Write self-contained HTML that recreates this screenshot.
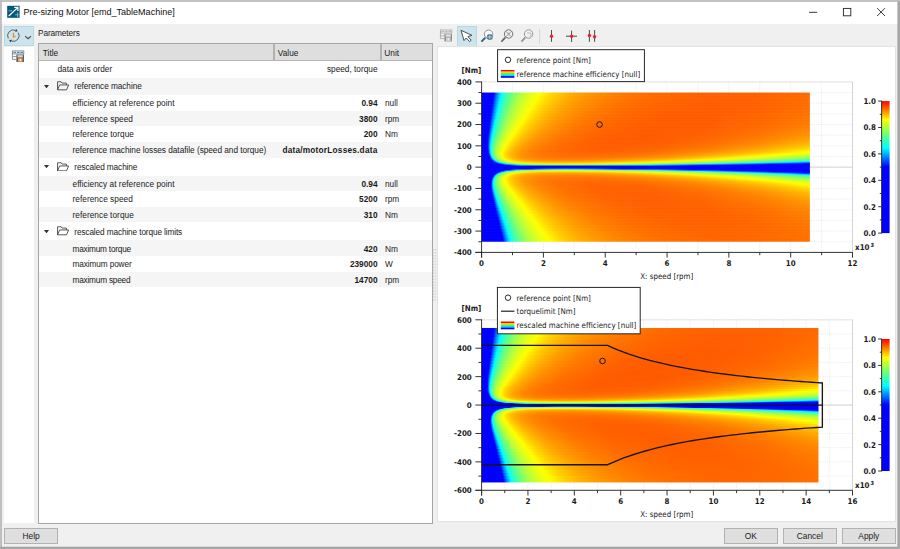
<!DOCTYPE html>
<html lang="en"><head><meta charset="utf-8"><title>Pre-sizing Motor [emd_TableMachine]</title>
<style>
html,body{margin:0;padding:0}
body{width:900px;height:549px;overflow:hidden;background:#f0f0f0;font-family:"Liberation Sans",Arial,sans-serif;color:#1a1a1a}
#win{position:absolute;left:0;top:0;width:900px;height:549px;overflow:hidden;background:#f0f0f0}
.abs{position:absolute}
#titlebar{left:0;top:0;width:900px;height:24px;background:#fff}
#ttl{left:23.5px;top:7px;font-size:9.05px;line-height:11px;white-space:nowrap;color:#111;letter-spacing:-0.02px}
#lbtn{left:4px;top:26px;width:28px;height:18.2px;background:#cce4ec;border:1px solid #b4d9e4;box-sizing:content-box}
#lpanel{left:4px;top:47px;width:30px;height:476.2px;background:#fff}
#plabel{left:38px;top:29px;letter-spacing:-0.1px;font-size:8.27px;line-height:10px;white-space:nowrap}
#tbl{left:38px;top:43.2px;width:393px;height:478.4px;border:1px solid #a6a6a6;background:#fff;overflow:hidden}
#thead{left:0;top:0;width:393px;height:16px;background:#dedede;border-bottom:1px solid #b4b4b4}
#thead span{position:absolute;top:3.4px;font-size:8.3px;line-height:10px}
#thead i{position:absolute;top:0;width:1.3px;height:16px;background:#b2b2b2}
.row{position:absolute;left:0;width:393px;font-size:8.27px;line-height:10px;white-space:nowrap}
.row span{position:absolute}
.row .v{right:54.5px;text-align:right}
.row .u{left:346px}
.tri{position:absolute;left:4.9px;top:calc(50% - 1.6px);width:5px;height:3.4px}
.fold{position:absolute;left:17.8px;top:calc(50% - 5px);width:12.2px;height:9.4px}
#rpanel{left:437.3px;top:46.4px;width:458.6px;height:476px;background:#fff;border:1px solid #e3e3e3;box-sizing:border-box}
#rbtn{left:457px;top:26px;width:18px;height:19.6px;background:#cce4ec;border:1px solid #b4d9e4;box-sizing:content-box}
.btn{position:absolute;top:528.2px;height:14.3px;width:52.3px;border:1px solid #b2b2b2;background:#dfdfdf;font-size:8.4px;line-height:14.6px;text-align:center}
#svg{left:0;top:0}
</style></head><body>
<div id="win">
<div id="titlebar" class="abs"></div>
<div id="ttl" class="abs">Pre-sizing Motor [emd_TableMachine]</div>
<div id="lbtn" class="abs"></div>
<div id="lpanel" class="abs"></div>
<div id="plabel" class="abs">Parameters</div>
<div id="tbl" class="abs">
<div id="thead" class="abs"><span style="left:3.8px">Title</span><i style="left:234.3px"></i><span style="left:238.8px">Value</span><i style="left:341.3px"></i><span style="left:345.3px">Unit</span></div>
<div class="row" style="top:16.60px;height:16.85px;background:#fff"><span class="t" style="top:4.00px;left:18.5px;letter-spacing:0.000px">data axis order</span><span class="v" style="top:4.00px">speed, torque</span></div><div class="row" style="top:33.40px;height:17.35px;background:#f5f5f5"><svg class="tri" viewBox="0 0 6 4"><path d="M0 0H6L3 4z" fill="#303030"/></svg><svg class="fold" viewBox="0 0 13 10"><path d="M0.6 9.4V0.8H4.4L5.4 2.2H10V4.2 M0.6 9.4L2.8 4.2H12.4L10.2 9.4z" fill="none" stroke="#3a3a3a" stroke-width="0.9" stroke-linejoin="round"/></svg><span class="t" style="top:4.20px;left:35.3px;letter-spacing:-0.060px">reference machine</span></div><div class="row" style="top:50.70px;height:15.75px;background:#fff"><span class="t" style="top:3.90px;left:33.5px;letter-spacing:0.040px">efficiency at reference point</span><span class="v" style="top:3.90px;font-weight:bold">0.94</span><span class="u" style="top:3.90px">null</span></div><div class="row" style="top:66.40px;height:15.85px;background:#f5f5f5"><span class="t" style="top:4.20px;left:33.5px;letter-spacing:0.050px">reference speed</span><span class="v" style="top:4.20px;font-weight:bold">3800</span><span class="u" style="top:4.20px">rpm</span></div><div class="row" style="top:82.20px;height:15.55px;background:#fff"><span class="t" style="top:3.40px;left:33.5px;letter-spacing:0.050px">reference torque</span><span class="v" style="top:3.40px;font-weight:bold">200</span><span class="u" style="top:3.40px">Nm</span></div><div class="row" style="top:97.70px;height:15.75px;background:#f5f5f5"><span class="t" style="top:3.90px;left:33.5px;letter-spacing:-0.030px">reference machine losses datafile (speed and torque)</span><span class="v" style="top:3.90px;font-weight:bold;letter-spacing:0.22px">data/motorLosses.data</span></div><div class="row" style="top:113.40px;height:18.35px;background:#fff"><svg class="tri" viewBox="0 0 6 4"><path d="M0 0H6L3 4z" fill="#303030"/></svg><svg class="fold" viewBox="0 0 13 10"><path d="M0.6 9.4V0.8H4.4L5.4 2.2H10V4.2 M0.6 9.4L2.8 4.2H12.4L10.2 9.4z" fill="none" stroke="#3a3a3a" stroke-width="0.9" stroke-linejoin="round"/></svg><span class="t" style="top:5.20px;left:35.3px;letter-spacing:-0.110px">rescaled machine</span></div><div class="row" style="top:131.70px;height:15.35px;background:#f5f5f5"><span class="t" style="top:3.90px;left:33.5px;letter-spacing:0.040px">efficiency at reference point</span><span class="v" style="top:3.90px;font-weight:bold">0.94</span><span class="u" style="top:3.90px">null</span></div><div class="row" style="top:147.00px;height:15.55px;background:#fff"><span class="t" style="top:3.60px;left:33.5px;letter-spacing:0.040px">reference speed</span><span class="v" style="top:3.60px;font-weight:bold">5200</span><span class="u" style="top:3.60px">rpm</span></div><div class="row" style="top:162.50px;height:15.85px;background:#f5f5f5"><span class="t" style="top:4.10px;left:33.5px;letter-spacing:0.040px">reference torque</span><span class="v" style="top:4.10px;font-weight:bold">310</span><span class="u" style="top:4.10px">Nm</span></div><div class="row" style="top:178.30px;height:17.95px;background:#fff"><svg class="tri" viewBox="0 0 6 4"><path d="M0 0H6L3 4z" fill="#303030"/></svg><svg class="fold" viewBox="0 0 13 10"><path d="M0.6 9.4V0.8H4.4L5.4 2.2H10V4.2 M0.6 9.4L2.8 4.2H12.4L10.2 9.4z" fill="none" stroke="#3a3a3a" stroke-width="0.9" stroke-linejoin="round"/></svg><span class="t" style="top:5.30px;left:35.3px;letter-spacing:-0.127px">rescaled machine torque limits</span></div><div class="row" style="top:196.20px;height:15.55px;background:#f5f5f5"><span class="t" style="top:4.40px;left:33.5px;letter-spacing:-0.220px">maximum torque</span><span class="v" style="top:4.40px;font-weight:bold">420</span><span class="u" style="top:4.40px">Nm</span></div><div class="row" style="top:211.70px;height:15.75px;background:#fff"><span class="t" style="top:3.90px;left:33.5px;letter-spacing:-0.120px">maximum power</span><span class="v" style="top:3.90px;font-weight:bold">239000</span><span class="u" style="top:3.90px">W</span></div><div class="row" style="top:227.40px;height:15.85px;background:#f5f5f5"><span class="t" style="top:4.20px;left:33.5px;letter-spacing:-0.215px">maximum speed</span><span class="v" style="top:4.20px;font-weight:bold">14700</span><span class="u" style="top:4.20px">rpm</span></div>
</div>
<div id="rbtn" class="abs"></div>
<div id="rpanel" class="abs"></div>
<div class="btn" style="left:4px">Help</div>
<div class="btn" style="left:723.7px">OK</div>
<div class="btn" style="left:782.6px">Cancel</div>
<div class="btn" style="left:841.7px">Apply</div>
<svg id="svg" class="abs" width="900" height="549" viewBox="0 0 900 549">
<!-- window frame -->
<rect x="0" y="0" width="900" height="1.15" fill="#c2c2c2"/><rect x="1" y="1.1" width="898" height="0.55" fill="#9c9c9c"/>
<rect x="0" y="0" width="1.15" height="549" fill="#c0c0c0"/><rect x="1.1" y="1.1" width="0.55" height="546" fill="#989898"/>
<rect x="897.8" y="1" width="2.2" height="548" fill="#aaaaaa"/><rect x="897.6" y="1.4" width="0.5" height="546" fill="#8e8e8e"/>
<rect x="0" y="547" width="900" height="2" fill="#aaaaaa"/><rect x="1.2" y="546.8" width="896.8" height="0.5" fill="#8e8e8e"/>
<path d="M433.7 249V300.8M435.5 249V300.8" stroke="#d4d4d4" stroke-width="1.2" stroke-dasharray="1.5 1.45" fill="none"/>
<!-- app icon -->
<rect x="7.2" y="5.8" width="12.4" height="12" fill="#00587c"/>
<path d="M8.8 16L17.6 7.6M14.2 7.3H17.9V11" stroke="#fff" stroke-width="1.3" fill="none"/>
<path d="M8.6 10.8H12M15 14.8H18.8M17.6 12.4V17" stroke="#9cc3d2" stroke-width="0.8" fill="none"/>
<!-- window controls -->
<path d="M809 12.3H817.2" stroke="#222" stroke-width="0.9"/>
<rect x="843.4" y="8.4" width="7.4" height="7.4" fill="none" stroke="#222" stroke-width="0.9"/>
<path d="M877.2 8.2L885 16M885 8.2L877.2 16" stroke="#222" stroke-width="0.9"/>
<!-- left toolbar icons -->
<g fill="none" stroke="#4a4a4a" stroke-width="0.85">
<path d="M8.3 38.4A5.8 5.8 0 0 1 15.6 30.3"/><path d="M18.4 32.7A5.8 5.8 0 0 1 11.3 41"/>
</g>
<path d="M25.2 36.2L28.1 38.7L30.9 36.2" fill="none" stroke="#505050" stroke-width="1.15"/>
<path d="M17.6 31.4L16.4 28.9L14.8 31.5z M9.2 39.9L10.4 42.4L12 39.8z" fill="#3a3a3a"/>
<path d="M13.4 32.8V37L15.6 35.9" stroke="#f08a1c" stroke-width="1.15" fill="none"/>
<g><rect x="12.4" y="50.9" width="11.4" height="3" fill="#fff" stroke="#7a7a7a" stroke-width="0.8"/><path d="M13.4 52.4H16.2M17 52.4H19.6M20.4 52.4H23" stroke="#3f8fc0" stroke-width="1.1"/><path d="M12.4 54V59.4M12.4 56.6H16.4M12.4 59.4H16.4" stroke="#7a7a7a" stroke-width="0.8" fill="none"/><rect x="16.4" y="54.6" width="7.6" height="7.4" fill="#5c5c5c"/><rect x="17.6" y="55.2" width="5.2" height="2.2" fill="#d6d6d6"/><rect x="18" y="58.2" width="4.6" height="3.6" fill="#f0a050"/><rect x="19.8" y="59" width="1" height="2" fill="#fff"/></g>
<!-- right toolbar icons -->
<g><rect x="440.4" y="30" width="11.4" height="3" fill="#f6f6f6" stroke="#a2a2a2" stroke-width="0.8"/><path d="M441.4 31.5H444.2M445 31.5H447.6M448.4 31.5H451" stroke="#b4b4b4" stroke-width="1.1"/><path d="M440.4 33V38.6M440.4 35.8H444.4M440.4 38.6H444.4" stroke="#a2a2a2" stroke-width="0.8" fill="none"/><rect x="444.4" y="33.8" width="7.6" height="7.6" fill="#909090"/><rect x="445.6" y="34.4" width="5.2" height="2.2" fill="#e6e6e6"/><rect x="446" y="37.4" width="4.6" height="3.8" fill="#cfcfcf"/><rect x="447.8" y="38.2" width="1" height="2" fill="#f4f4f4"/></g>
<path d="M461 30.3L472 35.4L467.9 36.6L471.2 40.2L469.6 41.6L466.2 38L464 40.6z" fill="#fff" stroke="#333" stroke-width="0.85" stroke-linejoin="round"/>
<g fill="none">
<circle cx="488.6" cy="34.2" r="4.2" stroke="#888" stroke-width="0.9" fill="#fafafa"/><path d="M485.4 37.6L481.4 41.6" stroke="#2f5f78" stroke-width="1.8"/><circle cx="489.8" cy="37" r="3" fill="#4f7f98"/><path d="M487.4 37H492.2M489.8 34.6V39.4" stroke="#d8e6ec" stroke-width="0.7"/>
<circle cx="508.6" cy="34" r="4.2" stroke="#666" stroke-width="0.9"/><path d="M505.4 37.4L501.4 41.6" stroke="#666" stroke-width="1.7"/><path d="M506 31.4L511.2 36.6M511.2 31.4L506 36.6" stroke="#666" stroke-width="0.7"/>
<circle cx="528.6" cy="34" r="4.2" stroke="#909090" stroke-width="0.9"/><path d="M525.4 37.4L521.4 41.6" stroke="#909090" stroke-width="1.7"/><path d="M527 33H529.6A1.6 1.6 0 0 1 529.6 36.2" stroke="#a0a0a0" stroke-width="0.7"/>
</g>
<path d="M539.6 29V43.6" stroke="#d4d4d4" stroke-width="1"/>
<g stroke="#3a3a3a" stroke-width="0.9" fill="none"><path d="M551.5 30V41.8M571.6 30.6V42M566 36.2H577M589.4 30V41.8M594.6 30V41.8"/></g>
<g fill="#e8232a"><circle cx="551.5" cy="36.3" r="1.7"/><circle cx="571.6" cy="36.3" r="1.7"/><circle cx="589.4" cy="35.5" r="1.7"/><circle cx="594.6" cy="36.8" r="1.7"/></g>
<path d="M512.51 81.90V252.40M543.42 81.90V252.40M574.33 81.90V252.40M605.23 81.90V252.40M636.14 81.90V252.40M667.05 81.90V252.40M697.96 81.90V252.40M728.87 81.90V252.40M759.77 81.90V252.40M790.68 81.90V252.40M821.59 81.90V252.40M852.50 81.90V252.40M481.60 252.40H852.50M481.60 241.74H852.50M481.60 231.09H852.50M481.60 220.43H852.50M481.60 209.78H852.50M481.60 199.12H852.50M481.60 188.46H852.50M481.60 177.81H852.50M481.60 167.15H852.50M481.60 156.49H852.50M481.60 145.84H852.50M481.60 135.18H852.50M481.60 124.53H852.50M481.60 113.87H852.50M481.60 103.21H852.50M481.60 92.56H852.50M481.60 81.90H852.50" stroke="#e5e5e5" stroke-width="0.8" stroke-dasharray="1 1.2" fill="none"/><path d="M852.50 81.90V252.40 M481.60 167.15H852.50" stroke="#d0d0d0" stroke-width="0.9" fill="none"/><path d="M481.60 81.90H852.50" stroke="#e0e0e0" stroke-width="0.8" fill="none"/><defs><linearGradient id="a0"><stop offset="0" stop-color="#0000ff"/><stop offset="0.03656" stop-color="#0000ff"/><stop offset="0.03808" stop-color="#0010ff"/><stop offset="0.04417" stop-color="#0060ff"/><stop offset="0.05027" stop-color="#00a3ff"/><stop offset="0.05636" stop-color="#00ddff"/><stop offset="0.06093" stop-color="#02fffc"/><stop offset="0.06855" stop-color="#23ffd4"/><stop offset="0.08226" stop-color="#52ff9a"/><stop offset="0.09139" stop-color="#6bff7b"/><stop offset="0.1036" stop-color="#8dff5e"/><stop offset="0.1188" stop-color="#b0ff42"/><stop offset="0.1371" stop-color="#d0ff27"/><stop offset="0.1584" stop-color="#edff0f"/><stop offset="0.1767" stop-color="#fffe00"/><stop offset="0.2163" stop-color="#ffd300"/><stop offset="0.2681" stop-color="#ffaf00"/><stop offset="0.3168" stop-color="#ff9800"/><stop offset="0.3717" stop-color="#ff8600"/><stop offset="0.4387" stop-color="#ff7700"/><stop offset="0.524" stop-color="#ff6b00"/><stop offset="0.6824" stop-color="#ff6100"/><stop offset="0.8286" stop-color="#ff6100"/><stop offset="1" stop-color="#ff6a00"/></linearGradient><linearGradient id="a1"><stop offset="0" stop-color="#0000ff"/><stop offset="0.03503" stop-color="#0000ff"/><stop offset="0.03656" stop-color="#000cff"/><stop offset="0.04417" stop-color="#0071ff"/><stop offset="0.05027" stop-color="#00b4ff"/><stop offset="0.05788" stop-color="#00faff"/><stop offset="0.05941" stop-color="#04fffa"/><stop offset="0.07312" stop-color="#3dffb4"/><stop offset="0.08226" stop-color="#5aff90"/><stop offset="0.09749" stop-color="#86ff64"/><stop offset="0.1127" stop-color="#abff46"/><stop offset="0.1249" stop-color="#c3ff32"/><stop offset="0.1493" stop-color="#e7ff13"/><stop offset="0.1706" stop-color="#ffff00"/><stop offset="0.1858" stop-color="#ffeb00"/><stop offset="0.2163" stop-color="#ffcd00"/><stop offset="0.2681" stop-color="#ffaa00"/><stop offset="0.3168" stop-color="#ff9400"/><stop offset="0.4204" stop-color="#ff7800"/><stop offset="0.5362" stop-color="#ff6800"/><stop offset="0.6824" stop-color="#ff6000"/><stop offset="0.8286" stop-color="#ff6100"/><stop offset="1" stop-color="#ff6b00"/></linearGradient><linearGradient id="a2"><stop offset="0" stop-color="#0000ff"/><stop offset="0.03351" stop-color="#0000ff"/><stop offset="0.03503" stop-color="#0007ff"/><stop offset="0.04113" stop-color="#005dff"/><stop offset="0.05027" stop-color="#00c5ff"/><stop offset="0.05636" stop-color="#00fdff"/><stop offset="0.05788" stop-color="#07fff7"/><stop offset="0.06702" stop-color="#2fffc5"/><stop offset="0.07464" stop-color="#4bffa3"/><stop offset="0.08226" stop-color="#62ff86"/><stop offset="0.09139" stop-color="#7dff6b"/><stop offset="0.1066" stop-color="#a6ff4a"/><stop offset="0.1219" stop-color="#c5ff30"/><stop offset="0.1401" stop-color="#e2ff18"/><stop offset="0.1645" stop-color="#ffff00"/><stop offset="0.2072" stop-color="#ffcf00"/><stop offset="0.2559" stop-color="#ffac00"/><stop offset="0.3229" stop-color="#ff8e00"/><stop offset="0.396" stop-color="#ff7a00"/><stop offset="0.4996" stop-color="#ff6a00"/><stop offset="0.6459" stop-color="#ff6000"/><stop offset="0.8043" stop-color="#ff6000"/><stop offset="1" stop-color="#ff6c00"/></linearGradient><linearGradient id="a3"><stop offset="0" stop-color="#0000ff"/><stop offset="0.03351" stop-color="#0002ff"/><stop offset="0.03808" stop-color="#0047ff"/><stop offset="0.04265" stop-color="#0083ff"/><stop offset="0.05027" stop-color="#00d7ff"/><stop offset="0.05484" stop-color="#01fffd"/><stop offset="0.06245" stop-color="#26ffd1"/><stop offset="0.07159" stop-color="#49ffa5"/><stop offset="0.08226" stop-color="#6aff7c"/><stop offset="0.09139" stop-color="#87ff63"/><stop offset="0.1097" stop-color="#b5ff3d"/><stop offset="0.1249" stop-color="#d2ff26"/><stop offset="0.1432" stop-color="#edff0f"/><stop offset="0.1584" stop-color="#feff00"/><stop offset="0.1615" stop-color="#fffb00"/><stop offset="0.2011" stop-color="#ffce00"/><stop offset="0.2559" stop-color="#ffa700"/><stop offset="0.2986" stop-color="#ff9300"/><stop offset="0.4021" stop-color="#ff7600"/><stop offset="0.4996" stop-color="#ff6800"/><stop offset="0.6459" stop-color="#ff5f00"/><stop offset="0.8043" stop-color="#ff6000"/><stop offset="1" stop-color="#ff6d00"/></linearGradient><linearGradient id="a4"><stop offset="0" stop-color="#0000ff"/><stop offset="0.03199" stop-color="#0000ff"/><stop offset="0.03656" stop-color="#0045ff"/><stop offset="0.04265" stop-color="#0096ff"/><stop offset="0.04874" stop-color="#00daff"/><stop offset="0.05179" stop-color="#00f7ff"/><stop offset="0.05331" stop-color="#04fffa"/><stop offset="0.05941" stop-color="#22ffd5"/><stop offset="0.07007" stop-color="#4dffa0"/><stop offset="0.07921" stop-color="#6aff7c"/><stop offset="0.08682" stop-color="#83ff66"/><stop offset="0.1005" stop-color="#a9ff47"/><stop offset="0.1188" stop-color="#cfff28"/><stop offset="0.131" stop-color="#e3ff17"/><stop offset="0.1554" stop-color="#fffc00"/><stop offset="0.1706" stop-color="#ffe700"/><stop offset="0.198" stop-color="#ffca00"/><stop offset="0.2437" stop-color="#ffa900"/><stop offset="0.2986" stop-color="#ff8f00"/><stop offset="0.3839" stop-color="#ff7700"/><stop offset="0.4996" stop-color="#ff6600"/><stop offset="0.6459" stop-color="#ff5e00"/><stop offset="0.8286" stop-color="#ff6100"/><stop offset="1" stop-color="#ff6e00"/></linearGradient><linearGradient id="a5"><stop offset="0" stop-color="#0000ff"/><stop offset="0.03046" stop-color="#0000ff"/><stop offset="0.03199" stop-color="#0011ff"/><stop offset="0.03808" stop-color="#006fff"/><stop offset="0.04265" stop-color="#00aaff"/><stop offset="0.05027" stop-color="#00fcff"/><stop offset="0.05179" stop-color="#07fff7"/><stop offset="0.05941" stop-color="#2dffc8"/><stop offset="0.07159" stop-color="#5cff8e"/><stop offset="0.07769" stop-color="#6fff77"/><stop offset="0.08987" stop-color="#97ff56"/><stop offset="0.1158" stop-color="#d2ff26"/><stop offset="0.1371" stop-color="#f2ff0a"/><stop offset="0.1493" stop-color="#fffc00"/><stop offset="0.1676" stop-color="#ffe300"/><stop offset="0.195" stop-color="#ffc600"/><stop offset="0.2376" stop-color="#ffa700"/><stop offset="0.2925" stop-color="#ff8d00"/><stop offset="0.3839" stop-color="#ff7400"/><stop offset="0.4813" stop-color="#ff6600"/><stop offset="0.6702" stop-color="#ff5d00"/><stop offset="0.8408" stop-color="#ff6200"/><stop offset="1" stop-color="#ff7000"/></linearGradient><linearGradient id="a6"><stop offset="0" stop-color="#0000ff"/><stop offset="0.02894" stop-color="#0000ff"/><stop offset="0.03046" stop-color="#000dff"/><stop offset="0.03656" stop-color="#006fff"/><stop offset="0.04113" stop-color="#00acff"/><stop offset="0.0457" stop-color="#00e1ff"/><stop offset="0.04874" stop-color="#01fffe"/><stop offset="0.05484" stop-color="#22ffd5"/><stop offset="0.06245" stop-color="#44ffab"/><stop offset="0.06855" stop-color="#5bff8f"/><stop offset="0.07921" stop-color="#80ff69"/><stop offset="0.08835" stop-color="#9dff51"/><stop offset="0.1066" stop-color="#c9ff2d"/><stop offset="0.1249" stop-color="#e9ff12"/><stop offset="0.1432" stop-color="#fffc00"/><stop offset="0.1615" stop-color="#ffe200"/><stop offset="0.1919" stop-color="#ffc200"/><stop offset="0.2498" stop-color="#ff9b00"/><stop offset="0.3168" stop-color="#ff8100"/><stop offset="0.4204" stop-color="#ff6b00"/><stop offset="0.5727" stop-color="#ff5e00"/><stop offset="0.7068" stop-color="#ff5d00"/><stop offset="0.8165" stop-color="#ff6100"/><stop offset="1" stop-color="#ff7200"/></linearGradient><linearGradient id="a7"><stop offset="0" stop-color="#0000ff"/><stop offset="0.02742" stop-color="#0000ff"/><stop offset="0.02894" stop-color="#0007ff"/><stop offset="0.03351" stop-color="#0057ff"/><stop offset="0.03808" stop-color="#009aff"/><stop offset="0.04113" stop-color="#00c2ff"/><stop offset="0.0457" stop-color="#00f6ff"/><stop offset="0.04722" stop-color="#04fffa"/><stop offset="0.05331" stop-color="#26ffd0"/><stop offset="0.06245" stop-color="#4fff9e"/><stop offset="0.07007" stop-color="#6aff7c"/><stop offset="0.08073" stop-color="#91ff5b"/><stop offset="0.09444" stop-color="#b7ff3b"/><stop offset="0.1097" stop-color="#d8ff21"/><stop offset="0.1249" stop-color="#f1ff0c"/><stop offset="0.1371" stop-color="#fffd00"/><stop offset="0.1645" stop-color="#ffd600"/><stop offset="0.1828" stop-color="#ffc300"/><stop offset="0.2072" stop-color="#ffaf00"/><stop offset="0.2437" stop-color="#ff9900"/><stop offset="0.329" stop-color="#ff7a00"/><stop offset="0.4326" stop-color="#ff6700"/><stop offset="0.5727" stop-color="#ff5d00"/><stop offset="0.719" stop-color="#ff5d00"/><stop offset="1" stop-color="#ff7400"/></linearGradient><linearGradient id="a8"><stop offset="0" stop-color="#0000ff"/><stop offset="0.02742" stop-color="#0001ff"/><stop offset="0.03199" stop-color="#0055ff"/><stop offset="0.03656" stop-color="#009cff"/><stop offset="0.04417" stop-color="#00fbff"/><stop offset="0.0457" stop-color="#08fff6"/><stop offset="0.05179" stop-color="#2affcb"/><stop offset="0.06093" stop-color="#54ff98"/><stop offset="0.06855" stop-color="#70ff76"/><stop offset="0.07616" stop-color="#8dff5e"/><stop offset="0.0853" stop-color="#aaff47"/><stop offset="0.1005" stop-color="#cfff28"/><stop offset="0.1188" stop-color="#f0ff0d"/><stop offset="0.131" stop-color="#fffd00"/><stop offset="0.1645" stop-color="#ffce00"/><stop offset="0.1919" stop-color="#ffb400"/><stop offset="0.2315" stop-color="#ff9a00"/><stop offset="0.3107" stop-color="#ff7b00"/><stop offset="0.4143" stop-color="#ff6700"/><stop offset="0.5362" stop-color="#ff5d00"/><stop offset="0.6824" stop-color="#ff5c00"/><stop offset="0.8896" stop-color="#ff6900"/><stop offset="1" stop-color="#ff7700"/></linearGradient><linearGradient id="a9"><stop offset="0" stop-color="#0000ff"/><stop offset="0.0259" stop-color="#0000ff"/><stop offset="0.03351" stop-color="#0087ff"/><stop offset="0.03808" stop-color="#00c9ff"/><stop offset="0.04265" stop-color="#01fffd"/><stop offset="0.04874" stop-color="#27ffcf"/><stop offset="0.05484" stop-color="#46ffa9"/><stop offset="0.06398" stop-color="#6bff7c"/><stop offset="0.07159" stop-color="#89ff61"/><stop offset="0.08226" stop-color="#adff44"/><stop offset="0.09749" stop-color="#d3ff25"/><stop offset="0.1158" stop-color="#f4ff09"/><stop offset="0.1249" stop-color="#fffd00"/><stop offset="0.1401" stop-color="#ffe400"/><stop offset="0.1615" stop-color="#ffc900"/><stop offset="0.1919" stop-color="#ffad00"/><stop offset="0.2193" stop-color="#ff9b00"/><stop offset="0.3046" stop-color="#ff7900"/><stop offset="0.396" stop-color="#ff6700"/><stop offset="0.5362" stop-color="#ff5c00"/><stop offset="0.6824" stop-color="#ff5c00"/><stop offset="0.853" stop-color="#ff6700"/><stop offset="1" stop-color="#ff7a00"/></linearGradient><linearGradient id="a10"><stop offset="0" stop-color="#0000ff"/><stop offset="0.02437" stop-color="#0000ff"/><stop offset="0.0259" stop-color="#0014ff"/><stop offset="0.02894" stop-color="#0052ff"/><stop offset="0.03351" stop-color="#00a0ff"/><stop offset="0.03808" stop-color="#00e2ff"/><stop offset="0.0396" stop-color="#00f5ff"/><stop offset="0.04113" stop-color="#05fff9"/><stop offset="0.04722" stop-color="#2cffc9"/><stop offset="0.05484" stop-color="#52ff9a"/><stop offset="0.06093" stop-color="#6bff7b"/><stop offset="0.07159" stop-color="#97ff56"/><stop offset="0.08226" stop-color="#b9ff3a"/><stop offset="0.09139" stop-color="#d0ff27"/><stop offset="0.1036" stop-color="#e9ff13"/><stop offset="0.1188" stop-color="#fffd00"/><stop offset="0.1371" stop-color="#ffde00"/><stop offset="0.1554" stop-color="#ffc700"/><stop offset="0.1767" stop-color="#ffb200"/><stop offset="0.2072" stop-color="#ff9c00"/><stop offset="0.2803" stop-color="#ff7c00"/><stop offset="0.3778" stop-color="#ff6700"/><stop offset="0.4813" stop-color="#ff5d00"/><stop offset="0.6459" stop-color="#ff5b00"/><stop offset="0.853" stop-color="#ff6900"/><stop offset="1" stop-color="#ff7d00"/></linearGradient><linearGradient id="a11"><stop offset="0" stop-color="#0000ff"/><stop offset="0.02285" stop-color="#0000ff"/><stop offset="0.02437" stop-color="#000dff"/><stop offset="0.02894" stop-color="#006dff"/><stop offset="0.03351" stop-color="#00bbff"/><stop offset="0.03808" stop-color="#00fcff"/><stop offset="0.0396" stop-color="#09fff3"/><stop offset="0.04417" stop-color="#28ffce"/><stop offset="0.05027" stop-color="#4affa4"/><stop offset="0.05788" stop-color="#6cff7a"/><stop offset="0.06245" stop-color="#81ff68"/><stop offset="0.07007" stop-color="#9fff4f"/><stop offset="0.0853" stop-color="#cdff2a"/><stop offset="0.1005" stop-color="#edff0f"/><stop offset="0.1127" stop-color="#fffc00"/><stop offset="0.134" stop-color="#ffd800"/><stop offset="0.1554" stop-color="#ffbe00"/><stop offset="0.1797" stop-color="#ffa800"/><stop offset="0.2102" stop-color="#ff9400"/><stop offset="0.2864" stop-color="#ff7600"/><stop offset="0.3595" stop-color="#ff6700"/><stop offset="0.4996" stop-color="#ff5b00"/><stop offset="0.6824" stop-color="#ff5d00"/><stop offset="0.8652" stop-color="#ff6d00"/><stop offset="1" stop-color="#ff8200"/></linearGradient><linearGradient id="a12"><stop offset="0" stop-color="#0000ff"/><stop offset="0.02285" stop-color="#0000ff"/><stop offset="0.02742" stop-color="#0066ff"/><stop offset="0.03199" stop-color="#00baff"/><stop offset="0.03656" stop-color="#00feff"/><stop offset="0.03808" stop-color="#0bfff1"/><stop offset="0.04265" stop-color="#2bffca"/><stop offset="0.04874" stop-color="#4eff9f"/><stop offset="0.05484" stop-color="#6aff7c"/><stop offset="0.06093" stop-color="#87ff63"/><stop offset="0.07007" stop-color="#abff46"/><stop offset="0.07769" stop-color="#c3ff32"/><stop offset="0.08987" stop-color="#e1ff19"/><stop offset="0.1066" stop-color="#fffe00"/><stop offset="0.128" stop-color="#ffd800"/><stop offset="0.1493" stop-color="#ffbd00"/><stop offset="0.1767" stop-color="#ffa400"/><stop offset="0.2011" stop-color="#ff9400"/><stop offset="0.2742" stop-color="#ff7600"/><stop offset="0.3656" stop-color="#ff6400"/><stop offset="0.5118" stop-color="#ff5a00"/><stop offset="0.6702" stop-color="#ff5d00"/><stop offset="0.8286" stop-color="#ff6b00"/><stop offset="1" stop-color="#ff8600"/></linearGradient><linearGradient id="a13"><stop offset="0" stop-color="#0000ff"/><stop offset="0.02133" stop-color="#0000ff"/><stop offset="0.02285" stop-color="#0011ff"/><stop offset="0.02742" stop-color="#0079ff"/><stop offset="0.03199" stop-color="#00cdff"/><stop offset="0.03503" stop-color="#00fbff"/><stop offset="0.03656" stop-color="#0afff2"/><stop offset="0.04265" stop-color="#35ffbd"/><stop offset="0.04874" stop-color="#58ff93"/><stop offset="0.05331" stop-color="#6dff79"/><stop offset="0.05941" stop-color="#8bff60"/><stop offset="0.07464" stop-color="#c3ff32"/><stop offset="0.09139" stop-color="#ecff10"/><stop offset="0.1036" stop-color="#fffc00"/><stop offset="0.1249" stop-color="#ffd500"/><stop offset="0.1401" stop-color="#ffc100"/><stop offset="0.1615" stop-color="#ffab00"/><stop offset="0.195" stop-color="#ff9300"/><stop offset="0.2681" stop-color="#ff7500"/><stop offset="0.3534" stop-color="#ff6400"/><stop offset="0.4813" stop-color="#ff5a00"/><stop offset="0.658" stop-color="#ff5d00"/><stop offset="0.8408" stop-color="#ff6f00"/><stop offset="1" stop-color="#ff8b00"/></linearGradient><linearGradient id="a14"><stop offset="0" stop-color="#0000ff"/><stop offset="0.02133" stop-color="#0000ff"/><stop offset="0.0259" stop-color="#006cff"/><stop offset="0.02894" stop-color="#00aaff"/><stop offset="0.03351" stop-color="#00f8ff"/><stop offset="0.03503" stop-color="#09fff4"/><stop offset="0.04113" stop-color="#36ffbc"/><stop offset="0.04874" stop-color="#62ff87"/><stop offset="0.05331" stop-color="#78ff6f"/><stop offset="0.05941" stop-color="#96ff57"/><stop offset="0.07159" stop-color="#c3ff32"/><stop offset="0.08226" stop-color="#e0ff1a"/><stop offset="0.09749" stop-color="#feff01"/><stop offset="0.1005" stop-color="#fff900"/><stop offset="0.1219" stop-color="#ffd200"/><stop offset="0.1371" stop-color="#ffbe00"/><stop offset="0.1584" stop-color="#ffa800"/><stop offset="0.1858" stop-color="#ff9400"/><stop offset="0.2163" stop-color="#ff8400"/><stop offset="0.262" stop-color="#ff7400"/><stop offset="0.3473" stop-color="#ff6300"/><stop offset="0.4631" stop-color="#ff5a00"/><stop offset="0.6459" stop-color="#ff5d00"/><stop offset="0.8165" stop-color="#ff6e00"/><stop offset="1" stop-color="#ff8f00"/></linearGradient><linearGradient id="a15"><stop offset="0" stop-color="#0000ff"/><stop offset="0.0198" stop-color="#0000ff"/><stop offset="0.02133" stop-color="#000bff"/><stop offset="0.02437" stop-color="#005cff"/><stop offset="0.02742" stop-color="#00a0ff"/><stop offset="0.03199" stop-color="#00f3ff"/><stop offset="0.03351" stop-color="#07fff6"/><stop offset="0.0396" stop-color="#37ffbb"/><stop offset="0.04265" stop-color="#4bffa3"/><stop offset="0.04874" stop-color="#6cff7b"/><stop offset="0.05331" stop-color="#84ff65"/><stop offset="0.06398" stop-color="#b3ff3f"/><stop offset="0.07312" stop-color="#d1ff26"/><stop offset="0.0853" stop-color="#efff0e"/><stop offset="0.09444" stop-color="#fffd00"/><stop offset="0.1066" stop-color="#ffe300"/><stop offset="0.131" stop-color="#ffbe00"/><stop offset="0.1554" stop-color="#ffa500"/><stop offset="0.1797" stop-color="#ff9300"/><stop offset="0.2102" stop-color="#ff8300"/><stop offset="0.2559" stop-color="#ff7300"/><stop offset="0.3595" stop-color="#ff6000"/><stop offset="0.5118" stop-color="#ff5900"/><stop offset="0.6824" stop-color="#ff6100"/><stop offset="0.8165" stop-color="#ff7100"/><stop offset="1" stop-color="#ff9500"/></linearGradient><linearGradient id="a16"><stop offset="0" stop-color="#0000ff"/><stop offset="0.0198" stop-color="#0000ff"/><stop offset="0.02133" stop-color="#001cff"/><stop offset="0.02437" stop-color="#006eff"/><stop offset="0.02742" stop-color="#00b3ff"/><stop offset="0.03046" stop-color="#00edff"/><stop offset="0.03199" stop-color="#05fff9"/><stop offset="0.03656" stop-color="#2cffc9"/><stop offset="0.04265" stop-color="#55ff96"/><stop offset="0.04722" stop-color="#6eff78"/><stop offset="0.05179" stop-color="#89ff62"/><stop offset="0.05788" stop-color="#a6ff4a"/><stop offset="0.06855" stop-color="#cdff2a"/><stop offset="0.07769" stop-color="#e6ff15"/><stop offset="0.08987" stop-color="#fffe00"/><stop offset="0.1097" stop-color="#ffd500"/><stop offset="0.131" stop-color="#ffb700"/><stop offset="0.1736" stop-color="#ff9200"/><stop offset="0.2133" stop-color="#ff7e00"/><stop offset="0.2559" stop-color="#ff7000"/><stop offset="0.3473" stop-color="#ff6000"/><stop offset="0.4996" stop-color="#ff5900"/><stop offset="0.6946" stop-color="#ff6400"/><stop offset="0.8652" stop-color="#ff7d00"/><stop offset="1" stop-color="#ff9b00"/></linearGradient><linearGradient id="a17"><stop offset="0" stop-color="#0000ff"/><stop offset="0.0198" stop-color="#0000ff"/><stop offset="0.02285" stop-color="#0058ff"/><stop offset="0.0259" stop-color="#00a5ff"/><stop offset="0.03046" stop-color="#01fffe"/><stop offset="0.03351" stop-color="#1effda"/><stop offset="0.03808" stop-color="#43ffad"/><stop offset="0.04417" stop-color="#69ff7e"/><stop offset="0.04722" stop-color="#7bff6d"/><stop offset="0.05484" stop-color="#a4ff4c"/><stop offset="0.06245" stop-color="#c3ff32"/><stop offset="0.07007" stop-color="#dbff1e"/><stop offset="0.0853" stop-color="#ffff00"/><stop offset="0.09444" stop-color="#ffe900"/><stop offset="0.1158" stop-color="#ffc300"/><stop offset="0.1462" stop-color="#ffa100"/><stop offset="0.1706" stop-color="#ff8f00"/><stop offset="0.2315" stop-color="#ff7400"/><stop offset="0.3351" stop-color="#ff6000"/><stop offset="0.4204" stop-color="#ff5a00"/><stop offset="0.524" stop-color="#ff5a00"/><stop offset="0.6824" stop-color="#ff6500"/><stop offset="0.8408" stop-color="#ff7d00"/><stop offset="1" stop-color="#ffa300"/></linearGradient><linearGradient id="a18"><stop offset="0" stop-color="#0000ff"/><stop offset="0.01828" stop-color="#0000ff"/><stop offset="0.0198" stop-color="#0005ff"/><stop offset="0.02285" stop-color="#0067ff"/><stop offset="0.0259" stop-color="#00b6ff"/><stop offset="0.02894" stop-color="#00f7ff"/><stop offset="0.03046" stop-color="#0cfff0"/><stop offset="0.03351" stop-color="#2affcc"/><stop offset="0.03808" stop-color="#4eff9f"/><stop offset="0.04265" stop-color="#6bff7c"/><stop offset="0.04722" stop-color="#88ff62"/><stop offset="0.05179" stop-color="#a1ff4e"/><stop offset="0.06093" stop-color="#c8ff2e"/><stop offset="0.07312" stop-color="#edff0f"/><stop offset="0.08226" stop-color="#fffc00"/><stop offset="0.09444" stop-color="#ffdf00"/><stop offset="0.1097" stop-color="#ffc400"/><stop offset="0.134" stop-color="#ffa600"/><stop offset="0.1676" stop-color="#ff8c00"/><stop offset="0.2285" stop-color="#ff7200"/><stop offset="0.3229" stop-color="#ff6000"/><stop offset="0.4996" stop-color="#ff5a00"/><stop offset="0.658" stop-color="#ff6500"/><stop offset="0.8043" stop-color="#ff7b00"/><stop offset="1" stop-color="#ffab00"/></linearGradient><linearGradient id="a19"><stop offset="0" stop-color="#0000ff"/><stop offset="0.01828" stop-color="#0000ff"/><stop offset="0.0198" stop-color="#000dff"/><stop offset="0.02133" stop-color="#0043ff"/><stop offset="0.02437" stop-color="#009eff"/><stop offset="0.02742" stop-color="#00e8ff"/><stop offset="0.02894" stop-color="#05fff9"/><stop offset="0.03351" stop-color="#34ffbf"/><stop offset="0.03808" stop-color="#58ff92"/><stop offset="0.04265" stop-color="#77ff70"/><stop offset="0.04722" stop-color="#95ff58"/><stop offset="0.05484" stop-color="#bbff38"/><stop offset="0.06245" stop-color="#d8ff21"/><stop offset="0.07769" stop-color="#fffd00"/><stop offset="0.09444" stop-color="#ffd500"/><stop offset="0.1219" stop-color="#ffac00"/><stop offset="0.1432" stop-color="#ff9800"/><stop offset="0.1736" stop-color="#ff8400"/><stop offset="0.2498" stop-color="#ff6a00"/><stop offset="0.3595" stop-color="#ff5c00"/><stop offset="0.524" stop-color="#ff5c00"/><stop offset="0.7068" stop-color="#ff6f00"/><stop offset="0.8408" stop-color="#ff8900"/><stop offset="1" stop-color="#ffb600"/></linearGradient><linearGradient id="a20"><stop offset="0" stop-color="#0000ff"/><stop offset="0.01828" stop-color="#0000ff"/><stop offset="0.0198" stop-color="#000fff"/><stop offset="0.02285" stop-color="#007bff"/><stop offset="0.0259" stop-color="#00d1ff"/><stop offset="0.02742" stop-color="#00f5ff"/><stop offset="0.02894" stop-color="#0effee"/><stop offset="0.03199" stop-color="#2fffc5"/><stop offset="0.03503" stop-color="#4bffa3"/><stop offset="0.03808" stop-color="#62ff86"/><stop offset="0.04265" stop-color="#84ff66"/><stop offset="0.04722" stop-color="#a1ff4e"/><stop offset="0.05484" stop-color="#c6ff2f"/><stop offset="0.06398" stop-color="#e7ff14"/><stop offset="0.07312" stop-color="#ffff00"/><stop offset="0.08682" stop-color="#ffdb00"/><stop offset="0.1066" stop-color="#ffb800"/><stop offset="0.128" stop-color="#ff9f00"/><stop offset="0.1584" stop-color="#ff8800"/><stop offset="0.1919" stop-color="#ff7800"/><stop offset="0.2315" stop-color="#ff6c00"/><stop offset="0.3412" stop-color="#ff5d00"/><stop offset="0.4874" stop-color="#ff5c00"/><stop offset="0.6702" stop-color="#ff6e00"/><stop offset="0.8408" stop-color="#ff9100"/><stop offset="1" stop-color="#ffc300"/></linearGradient><linearGradient id="a21"><stop offset="0" stop-color="#0000ff"/><stop offset="0.01828" stop-color="#0000ff"/><stop offset="0.0198" stop-color="#0009ff"/><stop offset="0.02133" stop-color="#0046ff"/><stop offset="0.02285" stop-color="#007cff"/><stop offset="0.02437" stop-color="#00adff"/><stop offset="0.0259" stop-color="#00d7ff"/><stop offset="0.02742" stop-color="#00feff"/><stop offset="0.02894" stop-color="#14ffe7"/><stop offset="0.03199" stop-color="#37ffbc"/><stop offset="0.03656" stop-color="#60ff8a"/><stop offset="0.0396" stop-color="#77ff70"/><stop offset="0.04417" stop-color="#99ff54"/><stop offset="0.05331" stop-color="#caff2c"/><stop offset="0.06093" stop-color="#e7ff14"/><stop offset="0.07007" stop-color="#fffd00"/><stop offset="0.08682" stop-color="#ffd100"/><stop offset="0.1066" stop-color="#ffb000"/><stop offset="0.128" stop-color="#ff9900"/><stop offset="0.1615" stop-color="#ff8200"/><stop offset="0.2315" stop-color="#ff6a00"/><stop offset="0.3595" stop-color="#ff5c00"/><stop offset="0.5484" stop-color="#ff6300"/><stop offset="0.6946" stop-color="#ff7800"/><stop offset="0.8408" stop-color="#ff9b00"/><stop offset="1" stop-color="#ffd200"/></linearGradient><linearGradient id="a22"><stop offset="0" stop-color="#0000ff"/><stop offset="0.0198" stop-color="#0000ff"/><stop offset="0.02437" stop-color="#00a8ff"/><stop offset="0.02742" stop-color="#00ffff"/><stop offset="0.03046" stop-color="#29ffcc"/><stop offset="0.03351" stop-color="#4bffa3"/><stop offset="0.03808" stop-color="#73ff74"/><stop offset="0.04265" stop-color="#98ff55"/><stop offset="0.04722" stop-color="#b5ff3d"/><stop offset="0.05484" stop-color="#daff1f"/><stop offset="0.06398" stop-color="#f9ff05"/><stop offset="0.06702" stop-color="#fffd00"/><stop offset="0.08378" stop-color="#ffce00"/><stop offset="0.1005" stop-color="#ffb100"/><stop offset="0.1249" stop-color="#ff9600"/><stop offset="0.1523" stop-color="#ff8300"/><stop offset="0.2346" stop-color="#ff6800"/><stop offset="0.3595" stop-color="#ff5d00"/><stop offset="0.5362" stop-color="#ff6600"/><stop offset="0.6946" stop-color="#ff8000"/><stop offset="0.7799" stop-color="#ff9500"/><stop offset="0.8774" stop-color="#ffb400"/><stop offset="1" stop-color="#ffe600"/></linearGradient><linearGradient id="a23"><stop offset="0" stop-color="#0000ff"/><stop offset="0.0198" stop-color="#0000ff"/><stop offset="0.02133" stop-color="#001bff"/><stop offset="0.02437" stop-color="#0095ff"/><stop offset="0.02742" stop-color="#00f4ff"/><stop offset="0.02894" stop-color="#12ffe9"/><stop offset="0.03199" stop-color="#3affb8"/><stop offset="0.03503" stop-color="#5aff90"/><stop offset="0.0396" stop-color="#84ff65"/><stop offset="0.04417" stop-color="#a8ff48"/><stop offset="0.05027" stop-color="#ccff2a"/><stop offset="0.05636" stop-color="#e7ff14"/><stop offset="0.06398" stop-color="#fffe00"/><stop offset="0.07921" stop-color="#ffd000"/><stop offset="0.09139" stop-color="#ffb800"/><stop offset="0.1219" stop-color="#ff9400"/><stop offset="0.1462" stop-color="#ff8300"/><stop offset="0.195" stop-color="#ff7000"/><stop offset="0.2315" stop-color="#ff6800"/><stop offset="0.3595" stop-color="#ff5f00"/><stop offset="0.524" stop-color="#ff6a00"/><stop offset="0.6946" stop-color="#ff8a00"/><stop offset="0.8408" stop-color="#ffb800"/><stop offset="0.9261" stop-color="#ffdb00"/><stop offset="1" stop-color="#ffff00"/></linearGradient><linearGradient id="a24"><stop offset="0" stop-color="#0000ff"/><stop offset="0.02133" stop-color="#0000ff"/><stop offset="0.02437" stop-color="#0079ff"/><stop offset="0.0259" stop-color="#00b0ff"/><stop offset="0.02742" stop-color="#00e1ff"/><stop offset="0.02894" stop-color="#08fff5"/><stop offset="0.03351" stop-color="#46ffa9"/><stop offset="0.03656" stop-color="#65ff83"/><stop offset="0.0396" stop-color="#83ff66"/><stop offset="0.04265" stop-color="#9eff51"/><stop offset="0.04874" stop-color="#c6ff2f"/><stop offset="0.05484" stop-color="#e4ff17"/><stop offset="0.06245" stop-color="#ffff00"/><stop offset="0.07769" stop-color="#ffcf00"/><stop offset="0.09139" stop-color="#ffb400"/><stop offset="0.1188" stop-color="#ff9400"/><stop offset="0.1432" stop-color="#ff8300"/><stop offset="0.2163" stop-color="#ff6b00"/><stop offset="0.3107" stop-color="#ff6200"/><stop offset="0.4448" stop-color="#ff6600"/><stop offset="0.6093" stop-color="#ff7f00"/><stop offset="0.7799" stop-color="#ffb000"/><stop offset="0.853" stop-color="#ffcd00"/><stop offset="0.9505" stop-color="#fffc00"/><stop offset="1" stop-color="#eeff0e"/></linearGradient><linearGradient id="a25"><stop offset="0" stop-color="#0000ff"/><stop offset="0.02133" stop-color="#0000ff"/><stop offset="0.02285" stop-color="#001dff"/><stop offset="0.02437" stop-color="#005eff"/><stop offset="0.0259" stop-color="#0098ff"/><stop offset="0.02894" stop-color="#00faff"/><stop offset="0.03046" stop-color="#16ffe4"/><stop offset="0.03351" stop-color="#3fffb1"/><stop offset="0.03656" stop-color="#61ff88"/><stop offset="0.03808" stop-color="#6fff77"/><stop offset="0.04265" stop-color="#9bff53"/><stop offset="0.04874" stop-color="#c6ff30"/><stop offset="0.05179" stop-color="#d6ff22"/><stop offset="0.06245" stop-color="#fffe00"/><stop offset="0.07312" stop-color="#ffd900"/><stop offset="0.08987" stop-color="#ffb500"/><stop offset="0.1127" stop-color="#ff9800"/><stop offset="0.1401" stop-color="#ff8400"/><stop offset="0.1828" stop-color="#ff7300"/><stop offset="0.2346" stop-color="#ff6900"/><stop offset="0.3656" stop-color="#ff6400"/><stop offset="0.5118" stop-color="#ff7200"/><stop offset="0.6337" stop-color="#ff8b00"/><stop offset="0.7677" stop-color="#ffb600"/><stop offset="0.9261" stop-color="#ffff00"/><stop offset="1" stop-color="#e0ff19"/></linearGradient><linearGradient id="a26"><stop offset="0" stop-color="#0000ff"/><stop offset="0.02285" stop-color="#0000ff"/><stop offset="0.0259" stop-color="#0078ff"/><stop offset="0.02742" stop-color="#00afff"/><stop offset="0.02894" stop-color="#00e1ff"/><stop offset="0.03046" stop-color="#08fff5"/><stop offset="0.03351" stop-color="#35ffbe"/><stop offset="0.03656" stop-color="#59ff92"/><stop offset="0.0396" stop-color="#78ff70"/><stop offset="0.04265" stop-color="#95ff57"/><stop offset="0.05027" stop-color="#ccff2b"/><stop offset="0.05484" stop-color="#e3ff17"/><stop offset="0.06245" stop-color="#ffff00"/><stop offset="0.07159" stop-color="#ffdd00"/><stop offset="0.08987" stop-color="#ffb400"/><stop offset="0.1158" stop-color="#ff9500"/><stop offset="0.1401" stop-color="#ff8400"/><stop offset="0.2041" stop-color="#ff6f00"/><stop offset="0.3046" stop-color="#ff6600"/><stop offset="0.457" stop-color="#ff6f00"/><stop offset="0.6215" stop-color="#ff9000"/><stop offset="0.7312" stop-color="#ffb400"/><stop offset="0.8286" stop-color="#ffde00"/><stop offset="0.8896" stop-color="#fffe00"/><stop offset="1" stop-color="#d0ff27"/></linearGradient><linearGradient id="a27"><stop offset="0" stop-color="#0000ff"/><stop offset="0.02285" stop-color="#0000ff"/><stop offset="0.02437" stop-color="#000dff"/><stop offset="0.0259" stop-color="#004eff"/><stop offset="0.02894" stop-color="#00beff"/><stop offset="0.03046" stop-color="#00edff"/><stop offset="0.03199" stop-color="#0fffed"/><stop offset="0.03656" stop-color="#4dffa1"/><stop offset="0.0396" stop-color="#6cff7b"/><stop offset="0.04265" stop-color="#8cff5f"/><stop offset="0.04722" stop-color="#b2ff40"/><stop offset="0.05179" stop-color="#cfff28"/><stop offset="0.05636" stop-color="#e6ff15"/><stop offset="0.06245" stop-color="#fdff02"/><stop offset="0.06398" stop-color="#fffb00"/><stop offset="0.07464" stop-color="#ffd600"/><stop offset="0.08987" stop-color="#ffb500"/><stop offset="0.1097" stop-color="#ff9b00"/><stop offset="0.1401" stop-color="#ff8500"/><stop offset="0.1767" stop-color="#ff7700"/><stop offset="0.2224" stop-color="#ff6e00"/><stop offset="0.3473" stop-color="#ff6a00"/><stop offset="0.4387" stop-color="#ff7200"/><stop offset="0.5118" stop-color="#ff7e00"/><stop offset="0.6093" stop-color="#ff9600"/><stop offset="0.7555" stop-color="#ffcc00"/><stop offset="0.853" stop-color="#fffd00"/><stop offset="1" stop-color="#bdff37"/></linearGradient><linearGradient id="a28"><stop offset="0" stop-color="#0000ff"/><stop offset="0.02437" stop-color="#0000ff"/><stop offset="0.0259" stop-color="#0018ff"/><stop offset="0.02894" stop-color="#008fff"/><stop offset="0.03199" stop-color="#00f0ff"/><stop offset="0.03351" stop-color="#10ffeb"/><stop offset="0.03656" stop-color="#3bffb7"/><stop offset="0.0396" stop-color="#5dff8d"/><stop offset="0.04265" stop-color="#7cff6c"/><stop offset="0.0457" stop-color="#99ff54"/><stop offset="0.04874" stop-color="#b2ff40"/><stop offset="0.05636" stop-color="#dfff1b"/><stop offset="0.06245" stop-color="#f8ff06"/><stop offset="0.0655" stop-color="#fffb00"/><stop offset="0.07616" stop-color="#ffd600"/><stop offset="0.09139" stop-color="#ffb500"/><stop offset="0.1188" stop-color="#ff9500"/><stop offset="0.1371" stop-color="#ff8900"/><stop offset="0.1828" stop-color="#ff7800"/><stop offset="0.2163" stop-color="#ff7200"/><stop offset="0.329" stop-color="#ff6e00"/><stop offset="0.4204" stop-color="#ff7600"/><stop offset="0.5727" stop-color="#ff9600"/><stop offset="0.7068" stop-color="#ffc700"/><stop offset="0.8165" stop-color="#ffff00"/><stop offset="0.9018" stop-color="#d9ff20"/><stop offset="1" stop-color="#a5ff4a"/></linearGradient><linearGradient id="a29"><stop offset="0" stop-color="#0000ff"/><stop offset="0.0259" stop-color="#0000ff"/><stop offset="0.02742" stop-color="#0015ff"/><stop offset="0.02894" stop-color="#0051ff"/><stop offset="0.03199" stop-color="#00baff"/><stop offset="0.03351" stop-color="#00e8ff"/><stop offset="0.03503" stop-color="#0bfff2"/><stop offset="0.03808" stop-color="#35ffbe"/><stop offset="0.04113" stop-color="#58ff93"/><stop offset="0.04417" stop-color="#76ff71"/><stop offset="0.04722" stop-color="#94ff59"/><stop offset="0.05179" stop-color="#b7ff3b"/><stop offset="0.05636" stop-color="#d3ff25"/><stop offset="0.06702" stop-color="#ffff00"/><stop offset="0.07616" stop-color="#ffde00"/><stop offset="0.09139" stop-color="#ffbb00"/><stop offset="0.1036" stop-color="#ffa900"/><stop offset="0.1219" stop-color="#ff9700"/><stop offset="0.1493" stop-color="#ff8700"/><stop offset="0.1797" stop-color="#ff7d00"/><stop offset="0.262" stop-color="#ff7300"/><stop offset="0.3839" stop-color="#ff7900"/><stop offset="0.5118" stop-color="#ff9100"/><stop offset="0.5727" stop-color="#ffa300"/><stop offset="0.658" stop-color="#ffc400"/><stop offset="0.7677" stop-color="#fffc00"/><stop offset="0.8896" stop-color="#c8ff2e"/><stop offset="1" stop-color="#89ff62"/></linearGradient><linearGradient id="a30"><stop offset="0" stop-color="#0000ff"/><stop offset="0.02894" stop-color="#0002ff"/><stop offset="0.03046" stop-color="#003cff"/><stop offset="0.03351" stop-color="#00a4ff"/><stop offset="0.03656" stop-color="#00faff"/><stop offset="0.03808" stop-color="#14ffe7"/><stop offset="0.04265" stop-color="#4bffa2"/><stop offset="0.0457" stop-color="#69ff7e"/><stop offset="0.04874" stop-color="#86ff64"/><stop offset="0.05331" stop-color="#acff45"/><stop offset="0.05788" stop-color="#c9ff2d"/><stop offset="0.06398" stop-color="#e6ff15"/><stop offset="0.07159" stop-color="#fffd00"/><stop offset="0.07921" stop-color="#ffe200"/><stop offset="0.0853" stop-color="#ffd200"/><stop offset="0.09749" stop-color="#ffba00"/><stop offset="0.1188" stop-color="#ffa100"/><stop offset="0.1401" stop-color="#ff9200"/><stop offset="0.2011" stop-color="#ff7f00"/><stop offset="0.3046" stop-color="#ff7b00"/><stop offset="0.4326" stop-color="#ff8b00"/><stop offset="0.524" stop-color="#ffa300"/><stop offset="0.6093" stop-color="#ffc300"/><stop offset="0.7312" stop-color="#fdff02"/><stop offset="0.853" stop-color="#c0ff34"/><stop offset="1" stop-color="#67ff81"/></linearGradient><linearGradient id="a31"><stop offset="0" stop-color="#0000ff"/><stop offset="0.03046" stop-color="#0000ff"/><stop offset="0.03199" stop-color="#0014ff"/><stop offset="0.03503" stop-color="#007aff"/><stop offset="0.0396" stop-color="#00f8ff"/><stop offset="0.04113" stop-color="#11ffeb"/><stop offset="0.04417" stop-color="#36ffbd"/><stop offset="0.04722" stop-color="#55ff97"/><stop offset="0.05027" stop-color="#6fff77"/><stop offset="0.05331" stop-color="#8aff60"/><stop offset="0.05941" stop-color="#b6ff3c"/><stop offset="0.06398" stop-color="#cfff28"/><stop offset="0.07007" stop-color="#e9ff13"/><stop offset="0.07769" stop-color="#fffd00"/><stop offset="0.08987" stop-color="#ffd900"/><stop offset="0.1005" stop-color="#ffc400"/><stop offset="0.1219" stop-color="#ffaa00"/><stop offset="0.1432" stop-color="#ff9b00"/><stop offset="0.1797" stop-color="#ff8d00"/><stop offset="0.2072" stop-color="#ff8800"/><stop offset="0.2864" stop-color="#ff8500"/><stop offset="0.39" stop-color="#ff9100"/><stop offset="0.4753" stop-color="#ffa600"/><stop offset="0.5727" stop-color="#ffcb00"/><stop offset="0.6702" stop-color="#fffe00"/><stop offset="0.7677" stop-color="#d0ff27"/><stop offset="0.8652" stop-color="#95ff57"/><stop offset="0.9261" stop-color="#6dff79"/><stop offset="1" stop-color="#42ffae"/></linearGradient><linearGradient id="a32"><stop offset="0" stop-color="#0000ff"/><stop offset="0.03351" stop-color="#0000ff"/><stop offset="0.03503" stop-color="#0007ff"/><stop offset="0.0396" stop-color="#0090ff"/><stop offset="0.04417" stop-color="#00feff"/><stop offset="0.04874" stop-color="#33ffc0"/><stop offset="0.05179" stop-color="#4fff9d"/><stop offset="0.05636" stop-color="#74ff73"/><stop offset="0.05941" stop-color="#8cff5f"/><stop offset="0.0655" stop-color="#b3ff3f"/><stop offset="0.07159" stop-color="#d0ff27"/><stop offset="0.07921" stop-color="#ebff11"/><stop offset="0.08682" stop-color="#ffff00"/><stop offset="0.09749" stop-color="#ffe300"/><stop offset="0.1097" stop-color="#ffcd00"/><stop offset="0.1371" stop-color="#ffb000"/><stop offset="0.1736" stop-color="#ff9e00"/><stop offset="0.2376" stop-color="#ff9400"/><stop offset="0.329" stop-color="#ff9900"/><stop offset="0.4265" stop-color="#ffae00"/><stop offset="0.5118" stop-color="#ffcd00"/><stop offset="0.6093" stop-color="#feff01"/><stop offset="0.6824" stop-color="#dbff1e"/><stop offset="0.7433" stop-color="#b8ff3b"/><stop offset="0.853" stop-color="#6fff77"/><stop offset="1" stop-color="#13ffe8"/></linearGradient><linearGradient id="a33"><stop offset="0" stop-color="#0000ff"/><stop offset="0.0396" stop-color="#0002ff"/><stop offset="0.04265" stop-color="#0055ff"/><stop offset="0.0457" stop-color="#009fff"/><stop offset="0.05027" stop-color="#00fcff"/><stop offset="0.05484" stop-color="#2cffc9"/><stop offset="0.06093" stop-color="#5bff8f"/><stop offset="0.06398" stop-color="#6eff78"/><stop offset="0.07007" stop-color="#96ff57"/><stop offset="0.07769" stop-color="#bbff39"/><stop offset="0.0853" stop-color="#d6ff22"/><stop offset="0.09444" stop-color="#eeff0e"/><stop offset="0.1036" stop-color="#fffe00"/><stop offset="0.1158" stop-color="#ffe700"/><stop offset="0.131" stop-color="#ffd300"/><stop offset="0.1645" stop-color="#ffbb00"/><stop offset="0.2163" stop-color="#ffad00"/><stop offset="0.2742" stop-color="#ffac00"/><stop offset="0.3778" stop-color="#ffbe00"/><stop offset="0.4448" stop-color="#ffd500"/><stop offset="0.5362" stop-color="#fcff03"/><stop offset="0.658" stop-color="#bdff37"/><stop offset="0.7555" stop-color="#7bff6d"/><stop offset="0.8165" stop-color="#53ff99"/><stop offset="0.9383" stop-color="#00ffff"/><stop offset="1" stop-color="#00b4ff"/></linearGradient><linearGradient id="a34"><stop offset="0" stop-color="#0000ff"/><stop offset="0.0457" stop-color="#0000ff"/><stop offset="0.04722" stop-color="#000fff"/><stop offset="0.05179" stop-color="#0072ff"/><stop offset="0.05636" stop-color="#00c6ff"/><stop offset="0.05941" stop-color="#00f6ff"/><stop offset="0.06093" stop-color="#08fff5"/><stop offset="0.06702" stop-color="#35ffbd"/><stop offset="0.07464" stop-color="#61ff88"/><stop offset="0.07921" stop-color="#77ff70"/><stop offset="0.08987" stop-color="#a6ff4a"/><stop offset="0.1036" stop-color="#cdff2a"/><stop offset="0.1127" stop-color="#dfff1b"/><stop offset="0.1249" stop-color="#f1ff0c"/><stop offset="0.1401" stop-color="#fffd00"/><stop offset="0.1584" stop-color="#ffec00"/><stop offset="0.1858" stop-color="#ffdd00"/><stop offset="0.2163" stop-color="#ffd500"/><stop offset="0.262" stop-color="#ffd300"/><stop offset="0.3351" stop-color="#ffdf00"/><stop offset="0.4204" stop-color="#ffff00"/><stop offset="0.4813" stop-color="#e6ff14"/><stop offset="0.5849" stop-color="#aeff43"/><stop offset="0.6702" stop-color="#71ff75"/><stop offset="0.7555" stop-color="#38ffba"/><stop offset="0.8286" stop-color="#02fffc"/><stop offset="0.8408" stop-color="#00f4ff"/><stop offset="1" stop-color="#0023ff"/></linearGradient><linearGradient id="a35"><stop offset="0" stop-color="#0000ff"/><stop offset="0.05788" stop-color="#0000ff"/><stop offset="0.05941" stop-color="#0012ff"/><stop offset="0.0655" stop-color="#0073ff"/><stop offset="0.07007" stop-color="#00b1ff"/><stop offset="0.07616" stop-color="#00f6ff"/><stop offset="0.07769" stop-color="#04fffa"/><stop offset="0.08226" stop-color="#1dffdb"/><stop offset="0.08987" stop-color="#3fffb1"/><stop offset="0.1005" stop-color="#64ff84"/><stop offset="0.1127" stop-color="#87ff63"/><stop offset="0.134" stop-color="#b1ff40"/><stop offset="0.1584" stop-color="#cdff2a"/><stop offset="0.1828" stop-color="#dcff1d"/><stop offset="0.2133" stop-color="#e6ff15"/><stop offset="0.262" stop-color="#e9ff12"/><stop offset="0.3229" stop-color="#e0ff1a"/><stop offset="0.3778" stop-color="#cfff28"/><stop offset="0.4448" stop-color="#b0ff42"/><stop offset="0.4813" stop-color="#9aff53"/><stop offset="0.524" stop-color="#7dff6b"/><stop offset="0.5849" stop-color="#54ff97"/><stop offset="0.6946" stop-color="#04fffb"/><stop offset="0.7068" stop-color="#00f5ff"/><stop offset="0.8774" stop-color="#0003ff"/><stop offset="1" stop-color="#0000ff"/></linearGradient><linearGradient id="a36"><stop offset="0" stop-color="#0000ff"/><stop offset="0.08226" stop-color="#0000ff"/><stop offset="0.08378" stop-color="#0004ff"/><stop offset="0.09139" stop-color="#004dff"/><stop offset="0.1036" stop-color="#00a9ff"/><stop offset="0.1158" stop-color="#00efff"/><stop offset="0.1188" stop-color="#00fdff"/><stop offset="0.1219" stop-color="#07fff6"/><stop offset="0.134" stop-color="#22ffd5"/><stop offset="0.1493" stop-color="#3bffb6"/><stop offset="0.1797" stop-color="#5aff90"/><stop offset="0.198" stop-color="#65ff83"/><stop offset="0.2224" stop-color="#6dff79"/><stop offset="0.2742" stop-color="#70ff76"/><stop offset="0.3351" stop-color="#62ff86"/><stop offset="0.39" stop-color="#4cffa2"/><stop offset="0.4387" stop-color="#31ffc3"/><stop offset="0.4996" stop-color="#07fff6"/><stop offset="0.5118" stop-color="#00fbff"/><stop offset="0.5849" stop-color="#0097ff"/><stop offset="0.6824" stop-color="#0003ff"/><stop offset="1" stop-color="#0000ff"/></linearGradient><linearGradient id="a37"><stop offset="0" stop-color="#0000ff"/><stop offset="1" stop-color="#0000ff"/></linearGradient><linearGradient id="a38"><stop offset="0" stop-color="#0000ff"/><stop offset="1" stop-color="#0000ff"/></linearGradient><linearGradient id="a39"><stop offset="0" stop-color="#0000ff"/><stop offset="1" stop-color="#0000ff"/></linearGradient><linearGradient id="a40"><stop offset="0" stop-color="#0000ff"/><stop offset="0.1493" stop-color="#0000ff"/><stop offset="0.1584" stop-color="#002dff"/><stop offset="0.1676" stop-color="#0053ff"/><stop offset="0.1858" stop-color="#0089ff"/><stop offset="0.198" stop-color="#00a2ff"/><stop offset="0.2102" stop-color="#00b4ff"/><stop offset="0.2254" stop-color="#00c3ff"/><stop offset="0.2559" stop-color="#00ceff"/><stop offset="0.2803" stop-color="#00c9ff"/><stop offset="0.2986" stop-color="#00bfff"/><stop offset="0.3412" stop-color="#0095ff"/><stop offset="0.3778" stop-color="#005eff"/><stop offset="0.4021" stop-color="#0030ff"/><stop offset="0.4204" stop-color="#0008ff"/><stop offset="0.4265" stop-color="#0000ff"/><stop offset="1" stop-color="#0000ff"/></linearGradient><linearGradient id="a41"><stop offset="0" stop-color="#0000ff"/><stop offset="0.0853" stop-color="#0000ff"/><stop offset="0.08682" stop-color="#0009ff"/><stop offset="0.09139" stop-color="#0052ff"/><stop offset="0.09444" stop-color="#007bff"/><stop offset="0.1005" stop-color="#00c1ff"/><stop offset="0.1066" stop-color="#00f9ff"/><stop offset="0.1097" stop-color="#0afff2"/><stop offset="0.1219" stop-color="#36ffbc"/><stop offset="0.1371" stop-color="#5bff8f"/><stop offset="0.1493" stop-color="#6fff77"/><stop offset="0.1645" stop-color="#86ff64"/><stop offset="0.1858" stop-color="#9aff54"/><stop offset="0.2041" stop-color="#a4ff4b"/><stop offset="0.2346" stop-color="#acff45"/><stop offset="0.262" stop-color="#adff44"/><stop offset="0.3046" stop-color="#a5ff4b"/><stop offset="0.3412" stop-color="#97ff56"/><stop offset="0.4082" stop-color="#6eff78"/><stop offset="0.4753" stop-color="#3cffb5"/><stop offset="0.5362" stop-color="#00fcff"/><stop offset="0.5727" stop-color="#00b0ff"/><stop offset="0.5971" stop-color="#0076ff"/><stop offset="0.6337" stop-color="#0015ff"/><stop offset="0.6459" stop-color="#0000ff"/><stop offset="1" stop-color="#0000ff"/></linearGradient><linearGradient id="a42"><stop offset="0" stop-color="#0000ff"/><stop offset="0.06398" stop-color="#0000ff"/><stop offset="0.0655" stop-color="#0005ff"/><stop offset="0.07007" stop-color="#0074ff"/><stop offset="0.07464" stop-color="#00caff"/><stop offset="0.07769" stop-color="#00f9ff"/><stop offset="0.07921" stop-color="#09fff4"/><stop offset="0.08226" stop-color="#20ffd8"/><stop offset="0.08835" stop-color="#44ffab"/><stop offset="0.09444" stop-color="#61ff88"/><stop offset="0.1005" stop-color="#7aff6e"/><stop offset="0.1158" stop-color="#abff46"/><stop offset="0.134" stop-color="#cdff29"/><stop offset="0.1615" stop-color="#eaff12"/><stop offset="0.1858" stop-color="#f7ff07"/><stop offset="0.2163" stop-color="#ffff00"/><stop offset="0.2864" stop-color="#ffff00"/><stop offset="0.3351" stop-color="#f5ff08"/><stop offset="0.4021" stop-color="#ddff1c"/><stop offset="0.4874" stop-color="#abff45"/><stop offset="0.5484" stop-color="#79ff6f"/><stop offset="0.5849" stop-color="#5aff91"/><stop offset="0.6459" stop-color="#1fffd9"/><stop offset="0.6702" stop-color="#03fffb"/><stop offset="0.6824" stop-color="#00ecff"/><stop offset="0.719" stop-color="#009cff"/><stop offset="0.7433" stop-color="#0061ff"/><stop offset="0.7799" stop-color="#0000ff"/><stop offset="1" stop-color="#0000ff"/></linearGradient><linearGradient id="a43"><stop offset="0" stop-color="#0000ff"/><stop offset="0.05331" stop-color="#0000ff"/><stop offset="0.05484" stop-color="#0018ff"/><stop offset="0.05788" stop-color="#0076ff"/><stop offset="0.05941" stop-color="#009eff"/><stop offset="0.06245" stop-color="#00e3ff"/><stop offset="0.06398" stop-color="#02fffd"/><stop offset="0.06855" stop-color="#2fffc6"/><stop offset="0.07312" stop-color="#52ff9b"/><stop offset="0.07921" stop-color="#77ff70"/><stop offset="0.0853" stop-color="#99ff54"/><stop offset="0.09139" stop-color="#b3ff3f"/><stop offset="0.1005" stop-color="#d0ff27"/><stop offset="0.1097" stop-color="#e5ff16"/><stop offset="0.128" stop-color="#fffe00"/><stop offset="0.1493" stop-color="#ffe400"/><stop offset="0.1767" stop-color="#ffd200"/><stop offset="0.2133" stop-color="#ffc700"/><stop offset="0.2498" stop-color="#ffc400"/><stop offset="0.2986" stop-color="#ffc800"/><stop offset="0.3473" stop-color="#ffd300"/><stop offset="0.4021" stop-color="#ffe700"/><stop offset="0.4509" stop-color="#feff00"/><stop offset="0.5362" stop-color="#d3ff25"/><stop offset="0.5971" stop-color="#a8ff48"/><stop offset="0.6459" stop-color="#7eff6b"/><stop offset="0.7068" stop-color="#48ffa7"/><stop offset="0.7677" stop-color="#0afff3"/><stop offset="0.7799" stop-color="#00f8ff"/><stop offset="0.7921" stop-color="#00e0ff"/><stop offset="0.8286" stop-color="#0091ff"/><stop offset="0.8896" stop-color="#0000ff"/><stop offset="1" stop-color="#0000ff"/></linearGradient><linearGradient id="a44"><stop offset="0" stop-color="#0000ff"/><stop offset="0.04722" stop-color="#0003ff"/><stop offset="0.04874" stop-color="#0040ff"/><stop offset="0.05179" stop-color="#00a5ff"/><stop offset="0.05484" stop-color="#00f5ff"/><stop offset="0.05636" stop-color="#0fffed"/><stop offset="0.05941" stop-color="#32ffc2"/><stop offset="0.06398" stop-color="#5bff8f"/><stop offset="0.06702" stop-color="#72ff75"/><stop offset="0.07312" stop-color="#9dff51"/><stop offset="0.08073" stop-color="#c3ff32"/><stop offset="0.08682" stop-color="#daff1f"/><stop offset="0.09749" stop-color="#f6ff08"/><stop offset="0.1036" stop-color="#fffb00"/><stop offset="0.1127" stop-color="#ffe800"/><stop offset="0.128" stop-color="#ffd200"/><stop offset="0.1584" stop-color="#ffb900"/><stop offset="0.2011" stop-color="#ffaa00"/><stop offset="0.262" stop-color="#ffa500"/><stop offset="0.3412" stop-color="#ffae00"/><stop offset="0.396" stop-color="#ffbc00"/><stop offset="0.457" stop-color="#ffd300"/><stop offset="0.5362" stop-color="#fffe00"/><stop offset="0.6337" stop-color="#c8ff2e"/><stop offset="0.719" stop-color="#84ff65"/><stop offset="0.7433" stop-color="#6eff78"/><stop offset="0.7799" stop-color="#50ff9d"/><stop offset="0.853" stop-color="#09fff4"/><stop offset="0.8652" stop-color="#00f7ff"/><stop offset="0.8896" stop-color="#00c8ff"/><stop offset="0.9261" stop-color="#007cff"/><stop offset="0.9749" stop-color="#000aff"/><stop offset="0.9871" stop-color="#0000ff"/><stop offset="1" stop-color="#0000ff"/></linearGradient><linearGradient id="a45"><stop offset="0" stop-color="#0000ff"/><stop offset="0.04113" stop-color="#0000ff"/><stop offset="0.04265" stop-color="#000fff"/><stop offset="0.04417" stop-color="#0051ff"/><stop offset="0.0457" stop-color="#008bff"/><stop offset="0.04874" stop-color="#00eaff"/><stop offset="0.05027" stop-color="#0bfff1"/><stop offset="0.05331" stop-color="#33ffc0"/><stop offset="0.05636" stop-color="#53ff99"/><stop offset="0.05941" stop-color="#6dff79"/><stop offset="0.06398" stop-color="#94ff58"/><stop offset="0.06855" stop-color="#b3ff3f"/><stop offset="0.07616" stop-color="#d8ff21"/><stop offset="0.0853" stop-color="#f6ff08"/><stop offset="0.08987" stop-color="#fffc00"/><stop offset="0.1005" stop-color="#ffe100"/><stop offset="0.1127" stop-color="#ffcb00"/><stop offset="0.131" stop-color="#ffb600"/><stop offset="0.1523" stop-color="#ffa700"/><stop offset="0.195" stop-color="#ff9800"/><stop offset="0.2803" stop-color="#ff9200"/><stop offset="0.3656" stop-color="#ff9c00"/><stop offset="0.4631" stop-color="#ffb700"/><stop offset="0.5118" stop-color="#ffcb00"/><stop offset="0.6093" stop-color="#fcff02"/><stop offset="0.7068" stop-color="#c3ff32"/><stop offset="0.7555" stop-color="#9fff50"/><stop offset="0.8043" stop-color="#74ff73"/><stop offset="0.853" stop-color="#4cffa1"/><stop offset="0.9261" stop-color="#08fff5"/><stop offset="0.9383" stop-color="#00f7ff"/><stop offset="1" stop-color="#0080ff"/></linearGradient><linearGradient id="a46"><stop offset="0" stop-color="#0000ff"/><stop offset="0.03808" stop-color="#0000ff"/><stop offset="0.0396" stop-color="#0025ff"/><stop offset="0.04113" stop-color="#0069ff"/><stop offset="0.04265" stop-color="#00a4ff"/><stop offset="0.04417" stop-color="#00d8ff"/><stop offset="0.0457" stop-color="#03fffb"/><stop offset="0.04874" stop-color="#30ffc4"/><stop offset="0.05179" stop-color="#53ff99"/><stop offset="0.05484" stop-color="#70ff76"/><stop offset="0.05788" stop-color="#8dff5e"/><stop offset="0.06245" stop-color="#b0ff42"/><stop offset="0.06855" stop-color="#d2ff25"/><stop offset="0.07464" stop-color="#ebff11"/><stop offset="0.08073" stop-color="#feff01"/><stop offset="0.08226" stop-color="#fffb00"/><stop offset="0.09444" stop-color="#ffd900"/><stop offset="0.1097" stop-color="#ffbe00"/><stop offset="0.128" stop-color="#ffaa00"/><stop offset="0.1462" stop-color="#ff9d00"/><stop offset="0.198" stop-color="#ff8b00"/><stop offset="0.2803" stop-color="#ff8500"/><stop offset="0.3412" stop-color="#ff8900"/><stop offset="0.457" stop-color="#ffa000"/><stop offset="0.5606" stop-color="#ffc700"/><stop offset="0.658" stop-color="#fffe00"/><stop offset="0.7312" stop-color="#d8ff20"/><stop offset="0.7799" stop-color="#b8ff3b"/><stop offset="0.8652" stop-color="#73ff74"/><stop offset="0.9261" stop-color="#43ffad"/><stop offset="1" stop-color="#00fcff"/></linearGradient><linearGradient id="a47"><stop offset="0" stop-color="#0000ff"/><stop offset="0.03503" stop-color="#0000ff"/><stop offset="0.03656" stop-color="#0011ff"/><stop offset="0.03808" stop-color="#005bff"/><stop offset="0.0396" stop-color="#009bff"/><stop offset="0.04113" stop-color="#00d2ff"/><stop offset="0.04265" stop-color="#02fffd"/><stop offset="0.04417" stop-color="#1bffde"/><stop offset="0.04722" stop-color="#44ffab"/><stop offset="0.05027" stop-color="#65ff83"/><stop offset="0.05331" stop-color="#83ff66"/><stop offset="0.05941" stop-color="#b5ff3e"/><stop offset="0.0655" stop-color="#d7ff21"/><stop offset="0.07159" stop-color="#f0ff0d"/><stop offset="0.07616" stop-color="#feff00"/><stop offset="0.07769" stop-color="#fffa00"/><stop offset="0.08835" stop-color="#ffd900"/><stop offset="0.1036" stop-color="#ffbc00"/><stop offset="0.1158" stop-color="#ffac00"/><stop offset="0.1401" stop-color="#ff9800"/><stop offset="0.198" stop-color="#ff8300"/><stop offset="0.2925" stop-color="#ff7c00"/><stop offset="0.3656" stop-color="#ff8100"/><stop offset="0.4996" stop-color="#ff9d00"/><stop offset="0.5971" stop-color="#ffc100"/><stop offset="0.7068" stop-color="#fffe00"/><stop offset="0.7921" stop-color="#d1ff26"/><stop offset="0.8652" stop-color="#9eff50"/><stop offset="0.9261" stop-color="#6cff7a"/><stop offset="1" stop-color="#33ffc0"/></linearGradient><linearGradient id="a48"><stop offset="0" stop-color="#0000ff"/><stop offset="0.03351" stop-color="#0000ff"/><stop offset="0.03503" stop-color="#002aff"/><stop offset="0.03656" stop-color="#0073ff"/><stop offset="0.03808" stop-color="#00b1ff"/><stop offset="0.0396" stop-color="#00e7ff"/><stop offset="0.04113" stop-color="#0dffef"/><stop offset="0.04265" stop-color="#25ffd1"/><stop offset="0.0457" stop-color="#4dffa0"/><stop offset="0.04874" stop-color="#6dff79"/><stop offset="0.05179" stop-color="#8cff5f"/><stop offset="0.05636" stop-color="#b1ff40"/><stop offset="0.06245" stop-color="#d5ff23"/><stop offset="0.07007" stop-color="#f5ff09"/><stop offset="0.07312" stop-color="#feff01"/><stop offset="0.07464" stop-color="#fffa00"/><stop offset="0.0853" stop-color="#ffd800"/><stop offset="0.1036" stop-color="#ffb500"/><stop offset="0.1249" stop-color="#ff9e00"/><stop offset="0.1493" stop-color="#ff8e00"/><stop offset="0.1767" stop-color="#ff8300"/><stop offset="0.2193" stop-color="#ff7a00"/><stop offset="0.3229" stop-color="#ff7600"/><stop offset="0.4448" stop-color="#ff8400"/><stop offset="0.5484" stop-color="#ff9e00"/><stop offset="0.6459" stop-color="#ffc400"/><stop offset="0.7555" stop-color="#fdff02"/><stop offset="0.8165" stop-color="#ddff1d"/><stop offset="0.9139" stop-color="#9dff51"/><stop offset="0.9627" stop-color="#76ff71"/><stop offset="1" stop-color="#5aff90"/></linearGradient><linearGradient id="a49"><stop offset="0" stop-color="#0000ff"/><stop offset="0.03199" stop-color="#0000ff"/><stop offset="0.03351" stop-color="#002bff"/><stop offset="0.03503" stop-color="#0075ff"/><stop offset="0.03656" stop-color="#00b3ff"/><stop offset="0.03808" stop-color="#00e9ff"/><stop offset="0.0396" stop-color="#0fffed"/><stop offset="0.04113" stop-color="#27ffcf"/><stop offset="0.04417" stop-color="#4fff9e"/><stop offset="0.04722" stop-color="#6eff78"/><stop offset="0.05027" stop-color="#8eff5e"/><stop offset="0.05788" stop-color="#c6ff2f"/><stop offset="0.06398" stop-color="#e4ff16"/><stop offset="0.07159" stop-color="#ffff00"/><stop offset="0.07921" stop-color="#ffe400"/><stop offset="0.09749" stop-color="#ffbb00"/><stop offset="0.1097" stop-color="#ffaa00"/><stop offset="0.131" stop-color="#ff9600"/><stop offset="0.1828" stop-color="#ff7e00"/><stop offset="0.2742" stop-color="#ff7100"/><stop offset="0.4082" stop-color="#ff7700"/><stop offset="0.5362" stop-color="#ff8f00"/><stop offset="0.6702" stop-color="#ffbe00"/><stop offset="0.7921" stop-color="#feff01"/><stop offset="0.9018" stop-color="#c2ff33"/><stop offset="1" stop-color="#7bff6d"/></linearGradient><linearGradient id="a50"><stop offset="0" stop-color="#0000ff"/><stop offset="0.03046" stop-color="#0000ff"/><stop offset="0.03199" stop-color="#0018ff"/><stop offset="0.03351" stop-color="#0065ff"/><stop offset="0.03503" stop-color="#00a6ff"/><stop offset="0.03656" stop-color="#00deff"/><stop offset="0.03808" stop-color="#09fff4"/><stop offset="0.04113" stop-color="#37ffbb"/><stop offset="0.04265" stop-color="#4affa4"/><stop offset="0.0457" stop-color="#6aff7d"/><stop offset="0.04874" stop-color="#89ff61"/><stop offset="0.05331" stop-color="#afff43"/><stop offset="0.05941" stop-color="#d3ff25"/><stop offset="0.06702" stop-color="#f3ff0a"/><stop offset="0.07159" stop-color="#fffc00"/><stop offset="0.0853" stop-color="#ffd200"/><stop offset="0.1005" stop-color="#ffb500"/><stop offset="0.1188" stop-color="#ff9f00"/><stop offset="0.1462" stop-color="#ff8b00"/><stop offset="0.1828" stop-color="#ff7c00"/><stop offset="0.2376" stop-color="#ff7100"/><stop offset="0.3412" stop-color="#ff6d00"/><stop offset="0.4326" stop-color="#ff7400"/><stop offset="0.5118" stop-color="#ff8100"/><stop offset="0.5849" stop-color="#ff9300"/><stop offset="0.6946" stop-color="#ffba00"/><stop offset="0.8165" stop-color="#fffa00"/><stop offset="0.8286" stop-color="#fdff01"/><stop offset="0.8896" stop-color="#dfff1b"/><stop offset="1" stop-color="#9aff54"/></linearGradient><linearGradient id="a51"><stop offset="0" stop-color="#0000ff"/><stop offset="0.03046" stop-color="#0000ff"/><stop offset="0.03351" stop-color="#008cff"/><stop offset="0.03503" stop-color="#00c6ff"/><stop offset="0.03656" stop-color="#00f9ff"/><stop offset="0.03808" stop-color="#16ffe4"/><stop offset="0.04113" stop-color="#41ffaf"/><stop offset="0.04417" stop-color="#62ff86"/><stop offset="0.05027" stop-color="#9cff52"/><stop offset="0.05788" stop-color="#cdff2a"/><stop offset="0.0655" stop-color="#eeff0e"/><stop offset="0.07159" stop-color="#fffc00"/><stop offset="0.08226" stop-color="#ffda00"/><stop offset="0.1005" stop-color="#ffb600"/><stop offset="0.1249" stop-color="#ff9a00"/><stop offset="0.1493" stop-color="#ff8900"/><stop offset="0.1858" stop-color="#ff7a00"/><stop offset="0.2254" stop-color="#ff7100"/><stop offset="0.3534" stop-color="#ff6a00"/><stop offset="0.4631" stop-color="#ff7300"/><stop offset="0.5484" stop-color="#ff8200"/><stop offset="0.6215" stop-color="#ff9500"/><stop offset="0.7433" stop-color="#ffc200"/><stop offset="0.853" stop-color="#fffc00"/><stop offset="0.9139" stop-color="#e4ff17"/><stop offset="1" stop-color="#b2ff40"/></linearGradient><linearGradient id="a52"><stop offset="0" stop-color="#0000ff"/><stop offset="0.02894" stop-color="#0000ff"/><stop offset="0.03046" stop-color="#001aff"/><stop offset="0.03199" stop-color="#0065ff"/><stop offset="0.03351" stop-color="#00a4ff"/><stop offset="0.03503" stop-color="#00daff"/><stop offset="0.03656" stop-color="#06fff8"/><stop offset="0.0396" stop-color="#33ffc0"/><stop offset="0.04265" stop-color="#57ff95"/><stop offset="0.0457" stop-color="#74ff73"/><stop offset="0.05027" stop-color="#9dff51"/><stop offset="0.05941" stop-color="#d4ff24"/><stop offset="0.06702" stop-color="#f2ff0b"/><stop offset="0.07159" stop-color="#fffe00"/><stop offset="0.08682" stop-color="#ffd100"/><stop offset="0.1036" stop-color="#ffb300"/><stop offset="0.128" stop-color="#ff9800"/><stop offset="0.1554" stop-color="#ff8600"/><stop offset="0.195" stop-color="#ff7700"/><stop offset="0.2376" stop-color="#ff6e00"/><stop offset="0.3717" stop-color="#ff6800"/><stop offset="0.4813" stop-color="#ff7100"/><stop offset="0.6337" stop-color="#ff9000"/><stop offset="0.7677" stop-color="#ffc000"/><stop offset="0.8896" stop-color="#feff00"/><stop offset="1" stop-color="#c6ff2f"/></linearGradient><linearGradient id="a53"><stop offset="0" stop-color="#0000ff"/><stop offset="0.02894" stop-color="#0000ff"/><stop offset="0.03046" stop-color="#0039ff"/><stop offset="0.03199" stop-color="#007dff"/><stop offset="0.03351" stop-color="#00b6ff"/><stop offset="0.03503" stop-color="#00e8ff"/><stop offset="0.03656" stop-color="#0cfff1"/><stop offset="0.0396" stop-color="#36ffbd"/><stop offset="0.04265" stop-color="#57ff94"/><stop offset="0.0457" stop-color="#72ff74"/><stop offset="0.04874" stop-color="#8eff5e"/><stop offset="0.05484" stop-color="#b8ff3b"/><stop offset="0.05788" stop-color="#c8ff2e"/><stop offset="0.0655" stop-color="#e8ff13"/><stop offset="0.07312" stop-color="#ffff00"/><stop offset="0.0853" stop-color="#ffda00"/><stop offset="0.1036" stop-color="#ffb700"/><stop offset="0.131" stop-color="#ff9800"/><stop offset="0.1493" stop-color="#ff8b00"/><stop offset="0.1736" stop-color="#ff7f00"/><stop offset="0.2285" stop-color="#ff6f00"/><stop offset="0.329" stop-color="#ff6500"/><stop offset="0.4753" stop-color="#ff6b00"/><stop offset="0.5971" stop-color="#ff7e00"/><stop offset="0.6946" stop-color="#ff9700"/><stop offset="0.7677" stop-color="#ffb000"/><stop offset="0.8408" stop-color="#ffcf00"/><stop offset="0.9261" stop-color="#fffc00"/><stop offset="1" stop-color="#dfff1b"/></linearGradient><linearGradient id="a54"><stop offset="0" stop-color="#0000ff"/><stop offset="0.02894" stop-color="#0000ff"/><stop offset="0.03046" stop-color="#0045ff"/><stop offset="0.03199" stop-color="#0082ff"/><stop offset="0.03351" stop-color="#00b7ff"/><stop offset="0.03503" stop-color="#00e5ff"/><stop offset="0.03656" stop-color="#09fff4"/><stop offset="0.0396" stop-color="#31ffc3"/><stop offset="0.04265" stop-color="#50ff9c"/><stop offset="0.04722" stop-color="#77ff70"/><stop offset="0.05027" stop-color="#90ff5c"/><stop offset="0.05484" stop-color="#aeff43"/><stop offset="0.06093" stop-color="#cdff2a"/><stop offset="0.06702" stop-color="#e4ff16"/><stop offset="0.07616" stop-color="#ffff00"/><stop offset="0.09139" stop-color="#ffd500"/><stop offset="0.1097" stop-color="#ffb500"/><stop offset="0.131" stop-color="#ff9d00"/><stop offset="0.1554" stop-color="#ff8b00"/><stop offset="0.2224" stop-color="#ff7100"/><stop offset="0.3351" stop-color="#ff6300"/><stop offset="0.4813" stop-color="#ff6700"/><stop offset="0.6459" stop-color="#ff7f00"/><stop offset="0.7921" stop-color="#ffa800"/><stop offset="0.9018" stop-color="#ffd500"/><stop offset="0.9749" stop-color="#fffb00"/><stop offset="1" stop-color="#f7ff06"/></linearGradient><linearGradient id="a55"><stop offset="0" stop-color="#0000ff"/><stop offset="0.02894" stop-color="#0000ff"/><stop offset="0.03199" stop-color="#0075ff"/><stop offset="0.03503" stop-color="#00d5ff"/><stop offset="0.03656" stop-color="#00fcff"/><stop offset="0.03808" stop-color="#13ffe8"/><stop offset="0.04113" stop-color="#36ffbd"/><stop offset="0.04417" stop-color="#52ff9a"/><stop offset="0.04722" stop-color="#6aff7d"/><stop offset="0.05179" stop-color="#8dff5e"/><stop offset="0.05788" stop-color="#b2ff40"/><stop offset="0.06398" stop-color="#ceff29"/><stop offset="0.07312" stop-color="#edff0f"/><stop offset="0.08073" stop-color="#fffd00"/><stop offset="0.09444" stop-color="#ffd900"/><stop offset="0.1127" stop-color="#ffb900"/><stop offset="0.1401" stop-color="#ff9b00"/><stop offset="0.1645" stop-color="#ff8a00"/><stop offset="0.2376" stop-color="#ff6f00"/><stop offset="0.3595" stop-color="#ff6100"/><stop offset="0.4631" stop-color="#ff6200"/><stop offset="0.5484" stop-color="#ff6900"/><stop offset="0.7068" stop-color="#ff8400"/><stop offset="0.853" stop-color="#ffaf00"/><stop offset="0.9261" stop-color="#ffcc00"/><stop offset="1" stop-color="#fff000"/></linearGradient><linearGradient id="a56"><stop offset="0" stop-color="#0000ff"/><stop offset="0.02894" stop-color="#0000ff"/><stop offset="0.03046" stop-color="#0023ff"/><stop offset="0.03351" stop-color="#008fff"/><stop offset="0.03503" stop-color="#00bbff"/><stop offset="0.03656" stop-color="#00e2ff"/><stop offset="0.03808" stop-color="#03fffb"/><stop offset="0.04113" stop-color="#27ffcf"/><stop offset="0.0457" stop-color="#51ff9c"/><stop offset="0.05027" stop-color="#71ff75"/><stop offset="0.05331" stop-color="#87ff63"/><stop offset="0.06093" stop-color="#b3ff3f"/><stop offset="0.06702" stop-color="#cdff2a"/><stop offset="0.07616" stop-color="#ebff11"/><stop offset="0.0853" stop-color="#fffc00"/><stop offset="0.1036" stop-color="#ffd100"/><stop offset="0.1219" stop-color="#ffb500"/><stop offset="0.1523" stop-color="#ff9700"/><stop offset="0.1797" stop-color="#ff8600"/><stop offset="0.2559" stop-color="#ff6d00"/><stop offset="0.3778" stop-color="#ff6000"/><stop offset="0.4631" stop-color="#ff6000"/><stop offset="0.5727" stop-color="#ff6800"/><stop offset="0.719" stop-color="#ff7f00"/><stop offset="0.8043" stop-color="#ff9400"/><stop offset="0.9018" stop-color="#ffb300"/><stop offset="1" stop-color="#ffdc00"/></linearGradient><linearGradient id="a57"><stop offset="0" stop-color="#0000ff"/><stop offset="0.03046" stop-color="#0002ff"/><stop offset="0.03199" stop-color="#003bff"/><stop offset="0.03503" stop-color="#009bff"/><stop offset="0.03808" stop-color="#00e6ff"/><stop offset="0.0396" stop-color="#04fffa"/><stop offset="0.04265" stop-color="#25ffd1"/><stop offset="0.04874" stop-color="#58ff93"/><stop offset="0.05331" stop-color="#76ff71"/><stop offset="0.05788" stop-color="#93ff59"/><stop offset="0.0655" stop-color="#b9ff3a"/><stop offset="0.07312" stop-color="#d6ff22"/><stop offset="0.08226" stop-color="#f0ff0d"/><stop offset="0.08987" stop-color="#fffd00"/><stop offset="0.1005" stop-color="#ffe200"/><stop offset="0.1188" stop-color="#ffc200"/><stop offset="0.1432" stop-color="#ffa500"/><stop offset="0.1736" stop-color="#ff8e00"/><stop offset="0.2041" stop-color="#ff7f00"/><stop offset="0.2559" stop-color="#ff6f00"/><stop offset="0.3595" stop-color="#ff6100"/><stop offset="0.5362" stop-color="#ff6200"/><stop offset="0.719" stop-color="#ff7900"/><stop offset="0.8652" stop-color="#ff9c00"/><stop offset="1" stop-color="#ffcb00"/></linearGradient><linearGradient id="a58"><stop offset="0" stop-color="#0000ff"/><stop offset="0.03046" stop-color="#0000ff"/><stop offset="0.03199" stop-color="#0015ff"/><stop offset="0.03351" stop-color="#0049ff"/><stop offset="0.03656" stop-color="#00a0ff"/><stop offset="0.0396" stop-color="#00e5ff"/><stop offset="0.04113" stop-color="#03fffc"/><stop offset="0.04417" stop-color="#22ffd5"/><stop offset="0.04874" stop-color="#48ffa7"/><stop offset="0.05484" stop-color="#6fff77"/><stop offset="0.05788" stop-color="#83ff67"/><stop offset="0.0655" stop-color="#abff46"/><stop offset="0.07312" stop-color="#c9ff2d"/><stop offset="0.0853" stop-color="#edff0f"/><stop offset="0.09444" stop-color="#fffd00"/><stop offset="0.1127" stop-color="#ffd500"/><stop offset="0.134" stop-color="#ffb600"/><stop offset="0.1615" stop-color="#ff9c00"/><stop offset="0.1858" stop-color="#ff8c00"/><stop offset="0.2498" stop-color="#ff7300"/><stop offset="0.3534" stop-color="#ff6200"/><stop offset="0.4996" stop-color="#ff5f00"/><stop offset="0.6702" stop-color="#ff6d00"/><stop offset="0.7921" stop-color="#ff8200"/><stop offset="0.8896" stop-color="#ff9a00"/><stop offset="1" stop-color="#ffbe00"/></linearGradient><linearGradient id="a59"><stop offset="0" stop-color="#0000ff"/><stop offset="0.03199" stop-color="#0000ff"/><stop offset="0.03351" stop-color="#0020ff"/><stop offset="0.03503" stop-color="#0050ff"/><stop offset="0.03808" stop-color="#00a0ff"/><stop offset="0.04113" stop-color="#00e2ff"/><stop offset="0.04265" stop-color="#00feff"/><stop offset="0.04417" stop-color="#0fffec"/><stop offset="0.04874" stop-color="#37ffbc"/><stop offset="0.05484" stop-color="#60ff89"/><stop offset="0.05788" stop-color="#71ff75"/><stop offset="0.0655" stop-color="#9cff52"/><stop offset="0.07312" stop-color="#bcff38"/><stop offset="0.08226" stop-color="#daff1f"/><stop offset="0.09444" stop-color="#f7ff07"/><stop offset="0.1005" stop-color="#fffa00"/><stop offset="0.1158" stop-color="#ffda00"/><stop offset="0.131" stop-color="#ffc200"/><stop offset="0.1523" stop-color="#ffaa00"/><stop offset="0.1889" stop-color="#ff8f00"/><stop offset="0.2224" stop-color="#ff7f00"/><stop offset="0.2681" stop-color="#ff7100"/><stop offset="0.3778" stop-color="#ff6100"/><stop offset="0.4996" stop-color="#ff5e00"/><stop offset="0.6946" stop-color="#ff6d00"/><stop offset="0.8408" stop-color="#ff8700"/><stop offset="1" stop-color="#ffb400"/></linearGradient><linearGradient id="a60"><stop offset="0" stop-color="#0000ff"/><stop offset="0.03351" stop-color="#0000ff"/><stop offset="0.03808" stop-color="#007aff"/><stop offset="0.04113" stop-color="#00bfff"/><stop offset="0.04417" stop-color="#00f8ff"/><stop offset="0.0457" stop-color="#0bfff2"/><stop offset="0.05027" stop-color="#32ffc2"/><stop offset="0.05484" stop-color="#51ff9c"/><stop offset="0.06093" stop-color="#73ff74"/><stop offset="0.0655" stop-color="#8cff5f"/><stop offset="0.07007" stop-color="#a2ff4d"/><stop offset="0.08226" stop-color="#ceff29"/><stop offset="0.08987" stop-color="#e3ff17"/><stop offset="0.1036" stop-color="#ffff00"/><stop offset="0.1219" stop-color="#ffd900"/><stop offset="0.1432" stop-color="#ffbb00"/><stop offset="0.1676" stop-color="#ffa300"/><stop offset="0.2011" stop-color="#ff8d00"/><stop offset="0.2376" stop-color="#ff7d00"/><stop offset="0.2925" stop-color="#ff6e00"/><stop offset="0.3778" stop-color="#ff6200"/><stop offset="0.524" stop-color="#ff5e00"/><stop offset="0.6824" stop-color="#ff6900"/><stop offset="0.853" stop-color="#ff8400"/><stop offset="1" stop-color="#ffab00"/></linearGradient><linearGradient id="a61"><stop offset="0" stop-color="#0000ff"/><stop offset="0.03503" stop-color="#0000ff"/><stop offset="0.03808" stop-color="#0053ff"/><stop offset="0.04113" stop-color="#009bff"/><stop offset="0.0457" stop-color="#00f1ff"/><stop offset="0.04722" stop-color="#06fff7"/><stop offset="0.05027" stop-color="#21ffd7"/><stop offset="0.05636" stop-color="#4bffa3"/><stop offset="0.06245" stop-color="#6cff7b"/><stop offset="0.06702" stop-color="#85ff65"/><stop offset="0.07769" stop-color="#b3ff3f"/><stop offset="0.0853" stop-color="#ccff2b"/><stop offset="0.1005" stop-color="#f1ff0c"/><stop offset="0.1097" stop-color="#fffc00"/><stop offset="0.134" stop-color="#ffcf00"/><stop offset="0.1523" stop-color="#ffb800"/><stop offset="0.1767" stop-color="#ffa200"/><stop offset="0.2041" stop-color="#ff9000"/><stop offset="0.2742" stop-color="#ff7500"/><stop offset="0.3717" stop-color="#ff6400"/><stop offset="0.5362" stop-color="#ff5e00"/><stop offset="0.6946" stop-color="#ff6800"/><stop offset="0.8652" stop-color="#ff8200"/><stop offset="1" stop-color="#ffa300"/></linearGradient><linearGradient id="a62"><stop offset="0" stop-color="#0000ff"/><stop offset="0.03656" stop-color="#0000ff"/><stop offset="0.0396" stop-color="#0052ff"/><stop offset="0.04265" stop-color="#0097ff"/><stop offset="0.0457" stop-color="#00d1ff"/><stop offset="0.04874" stop-color="#02fffd"/><stop offset="0.05331" stop-color="#27ffcf"/><stop offset="0.05788" stop-color="#45ffaa"/><stop offset="0.06245" stop-color="#5eff8b"/><stop offset="0.06855" stop-color="#7dff6b"/><stop offset="0.07921" stop-color="#acff45"/><stop offset="0.08987" stop-color="#ceff29"/><stop offset="0.1005" stop-color="#e8ff13"/><stop offset="0.1127" stop-color="#feff00"/><stop offset="0.1371" stop-color="#ffd300"/><stop offset="0.1554" stop-color="#ffbc00"/><stop offset="0.1828" stop-color="#ffa300"/><stop offset="0.2072" stop-color="#ff9300"/><stop offset="0.2437" stop-color="#ff8200"/><stop offset="0.2925" stop-color="#ff7300"/><stop offset="0.3839" stop-color="#ff6400"/><stop offset="0.4874" stop-color="#ff5e00"/><stop offset="0.6702" stop-color="#ff6400"/><stop offset="0.8774" stop-color="#ff8000"/><stop offset="1" stop-color="#ff9c00"/></linearGradient><linearGradient id="a63"><stop offset="0" stop-color="#0000ff"/><stop offset="0.03808" stop-color="#0002ff"/><stop offset="0.0396" stop-color="#002bff"/><stop offset="0.04265" stop-color="#0073ff"/><stop offset="0.0457" stop-color="#00afff"/><stop offset="0.05027" stop-color="#00fbff"/><stop offset="0.05179" stop-color="#0afff2"/><stop offset="0.05788" stop-color="#36ffbc"/><stop offset="0.06398" stop-color="#59ff92"/><stop offset="0.06855" stop-color="#6eff78"/><stop offset="0.07464" stop-color="#8cff5f"/><stop offset="0.08378" stop-color="#b0ff42"/><stop offset="0.09749" stop-color="#d7ff21"/><stop offset="0.1097" stop-color="#f1ff0c"/><stop offset="0.1188" stop-color="#fffd00"/><stop offset="0.1401" stop-color="#ffd700"/><stop offset="0.1554" stop-color="#ffc300"/><stop offset="0.1797" stop-color="#ffab00"/><stop offset="0.2102" stop-color="#ff9600"/><stop offset="0.2803" stop-color="#ff7900"/><stop offset="0.3717" stop-color="#ff6700"/><stop offset="0.5118" stop-color="#ff5e00"/><stop offset="0.658" stop-color="#ff6200"/><stop offset="0.8043" stop-color="#ff7100"/><stop offset="1" stop-color="#ff9700"/></linearGradient><linearGradient id="a64"><stop offset="0" stop-color="#0000ff"/><stop offset="0.0396" stop-color="#0003ff"/><stop offset="0.04265" stop-color="#004eff"/><stop offset="0.0457" stop-color="#008eff"/><stop offset="0.04874" stop-color="#00c5ff"/><stop offset="0.05179" stop-color="#00f4ff"/><stop offset="0.05331" stop-color="#06fff8"/><stop offset="0.05636" stop-color="#1dffdb"/><stop offset="0.06398" stop-color="#4cffa2"/><stop offset="0.07159" stop-color="#6fff77"/><stop offset="0.07769" stop-color="#8cff5f"/><stop offset="0.09139" stop-color="#bdff37"/><stop offset="0.1005" stop-color="#d5ff23"/><stop offset="0.1158" stop-color="#f4ff09"/><stop offset="0.1219" stop-color="#feff01"/><stop offset="0.1249" stop-color="#fffa00"/><stop offset="0.1493" stop-color="#ffd200"/><stop offset="0.1645" stop-color="#ffc000"/><stop offset="0.1919" stop-color="#ffa700"/><stop offset="0.2254" stop-color="#ff9200"/><stop offset="0.2986" stop-color="#ff7700"/><stop offset="0.4021" stop-color="#ff6500"/><stop offset="0.4996" stop-color="#ff5f00"/><stop offset="0.6702" stop-color="#ff6200"/><stop offset="0.8286" stop-color="#ff7200"/><stop offset="1" stop-color="#ff9200"/></linearGradient><linearGradient id="a65"><stop offset="0" stop-color="#0000ff"/><stop offset="0.0396" stop-color="#0000ff"/><stop offset="0.04113" stop-color="#0004ff"/><stop offset="0.04417" stop-color="#004cff"/><stop offset="0.04722" stop-color="#008aff"/><stop offset="0.05179" stop-color="#00d7ff"/><stop offset="0.05484" stop-color="#02fffd"/><stop offset="0.05941" stop-color="#23ffd5"/><stop offset="0.0655" stop-color="#46ffa8"/><stop offset="0.07312" stop-color="#6aff7d"/><stop offset="0.08073" stop-color="#8cff5f"/><stop offset="0.09139" stop-color="#b2ff40"/><stop offset="0.1036" stop-color="#d3ff25"/><stop offset="0.1127" stop-color="#e6ff14"/><stop offset="0.128" stop-color="#fffe00"/><stop offset="0.1432" stop-color="#ffe300"/><stop offset="0.1615" stop-color="#ffca00"/><stop offset="0.1889" stop-color="#ffaf00"/><stop offset="0.2193" stop-color="#ff9a00"/><stop offset="0.2559" stop-color="#ff8800"/><stop offset="0.2986" stop-color="#ff7a00"/><stop offset="0.3839" stop-color="#ff6900"/><stop offset="0.524" stop-color="#ff5f00"/><stop offset="0.6946" stop-color="#ff6300"/><stop offset="0.8652" stop-color="#ff7500"/><stop offset="1" stop-color="#ff8d00"/></linearGradient><linearGradient id="a66"><stop offset="0" stop-color="#0000ff"/><stop offset="0.04265" stop-color="#0000ff"/><stop offset="0.04722" stop-color="#0061ff"/><stop offset="0.05027" stop-color="#0099ff"/><stop offset="0.05484" stop-color="#00e0ff"/><stop offset="0.05636" stop-color="#00f4ff"/><stop offset="0.05788" stop-color="#05fff8"/><stop offset="0.0655" stop-color="#36ffbc"/><stop offset="0.07312" stop-color="#5cff8e"/><stop offset="0.08073" stop-color="#7cff6c"/><stop offset="0.08835" stop-color="#9aff53"/><stop offset="0.1005" stop-color="#c0ff34"/><stop offset="0.1097" stop-color="#d6ff22"/><stop offset="0.134" stop-color="#fffe00"/><stop offset="0.1523" stop-color="#ffdf00"/><stop offset="0.1706" stop-color="#ffc800"/><stop offset="0.195" stop-color="#ffb100"/><stop offset="0.2254" stop-color="#ff9c00"/><stop offset="0.262" stop-color="#ff8a00"/><stop offset="0.3107" stop-color="#ff7a00"/><stop offset="0.3778" stop-color="#ff6c00"/><stop offset="0.5118" stop-color="#ff6000"/><stop offset="0.6702" stop-color="#ff6100"/><stop offset="0.8408" stop-color="#ff6f00"/><stop offset="1" stop-color="#ff8900"/></linearGradient><linearGradient id="a67"><stop offset="0" stop-color="#0000ff"/><stop offset="0.04417" stop-color="#0000ff"/><stop offset="0.0457" stop-color="#000eff"/><stop offset="0.05027" stop-color="#006bff"/><stop offset="0.05484" stop-color="#00b7ff"/><stop offset="0.05941" stop-color="#00f5ff"/><stop offset="0.06093" stop-color="#05fff9"/><stop offset="0.06855" stop-color="#34ffbf"/><stop offset="0.07312" stop-color="#4bffa3"/><stop offset="0.08226" stop-color="#70ff76"/><stop offset="0.08835" stop-color="#89ff61"/><stop offset="0.1036" stop-color="#baff39"/><stop offset="0.1127" stop-color="#d0ff27"/><stop offset="0.1401" stop-color="#ffff00"/><stop offset="0.1554" stop-color="#ffe600"/><stop offset="0.1767" stop-color="#ffcb00"/><stop offset="0.2011" stop-color="#ffb400"/><stop offset="0.2315" stop-color="#ff9f00"/><stop offset="0.3107" stop-color="#ff7e00"/><stop offset="0.39" stop-color="#ff6d00"/><stop offset="0.4996" stop-color="#ff6200"/><stop offset="0.6824" stop-color="#ff6100"/><stop offset="0.8774" stop-color="#ff7100"/><stop offset="1" stop-color="#ff8400"/></linearGradient><linearGradient id="a68"><stop offset="0" stop-color="#0000ff"/><stop offset="0.04722" stop-color="#0000ff"/><stop offset="0.05179" stop-color="#005aff"/><stop offset="0.05636" stop-color="#00a5ff"/><stop offset="0.06245" stop-color="#00f6ff"/><stop offset="0.06398" stop-color="#05fff9"/><stop offset="0.07312" stop-color="#39ffb8"/><stop offset="0.08073" stop-color="#5bff8f"/><stop offset="0.0853" stop-color="#6cff7a"/><stop offset="0.09749" stop-color="#99ff54"/><stop offset="0.1188" stop-color="#d1ff26"/><stop offset="0.1371" stop-color="#f1ff0c"/><stop offset="0.1493" stop-color="#fffc00"/><stop offset="0.1797" stop-color="#ffd100"/><stop offset="0.2072" stop-color="#ffb700"/><stop offset="0.2407" stop-color="#ffa000"/><stop offset="0.329" stop-color="#ff7d00"/><stop offset="0.4082" stop-color="#ff6d00"/><stop offset="0.5118" stop-color="#ff6300"/><stop offset="0.6824" stop-color="#ff6100"/><stop offset="0.8408" stop-color="#ff6b00"/><stop offset="1" stop-color="#ff8000"/></linearGradient><linearGradient id="a69"><stop offset="0" stop-color="#0000ff"/><stop offset="0.04874" stop-color="#0000ff"/><stop offset="0.05027" stop-color="#000fff"/><stop offset="0.05484" stop-color="#0064ff"/><stop offset="0.05941" stop-color="#00aaff"/><stop offset="0.0655" stop-color="#00f7ff"/><stop offset="0.06702" stop-color="#05fff9"/><stop offset="0.07464" stop-color="#30ffc4"/><stop offset="0.08226" stop-color="#52ff9a"/><stop offset="0.08987" stop-color="#6eff78"/><stop offset="0.1005" stop-color="#94ff58"/><stop offset="0.1127" stop-color="#b7ff3c"/><stop offset="0.1249" stop-color="#d2ff26"/><stop offset="0.1401" stop-color="#ecff10"/><stop offset="0.1554" stop-color="#fffd00"/><stop offset="0.1736" stop-color="#ffe200"/><stop offset="0.198" stop-color="#ffc700"/><stop offset="0.2498" stop-color="#ffa100"/><stop offset="0.329" stop-color="#ff8100"/><stop offset="0.4204" stop-color="#ff6e00"/><stop offset="0.5362" stop-color="#ff6300"/><stop offset="0.6824" stop-color="#ff6100"/><stop offset="0.8774" stop-color="#ff6d00"/><stop offset="1" stop-color="#ff7d00"/></linearGradient><linearGradient id="a70"><stop offset="0" stop-color="#0000ff"/><stop offset="0.05179" stop-color="#0000ff"/><stop offset="0.05636" stop-color="#0055ff"/><stop offset="0.05941" stop-color="#0085ff"/><stop offset="0.0655" stop-color="#00d6ff"/><stop offset="0.06855" stop-color="#00f8ff"/><stop offset="0.07007" stop-color="#05fff9"/><stop offset="0.07616" stop-color="#27ffcf"/><stop offset="0.0853" stop-color="#50ff9d"/><stop offset="0.09139" stop-color="#66ff82"/><stop offset="0.1005" stop-color="#86ff64"/><stop offset="0.1097" stop-color="#a2ff4d"/><stop offset="0.1249" stop-color="#c7ff2f"/><stop offset="0.1462" stop-color="#ecff10"/><stop offset="0.1615" stop-color="#fffe00"/><stop offset="0.1889" stop-color="#ffd900"/><stop offset="0.2102" stop-color="#ffc400"/><stop offset="0.2559" stop-color="#ffa400"/><stop offset="0.3229" stop-color="#ff8700"/><stop offset="0.4387" stop-color="#ff6e00"/><stop offset="0.5484" stop-color="#ff6400"/><stop offset="0.7068" stop-color="#ff6200"/><stop offset="0.8043" stop-color="#ff6600"/><stop offset="1" stop-color="#ff7a00"/></linearGradient><linearGradient id="a71"><stop offset="0" stop-color="#0000ff"/><stop offset="0.05331" stop-color="#0000ff"/><stop offset="0.05484" stop-color="#0011ff"/><stop offset="0.05941" stop-color="#005fff"/><stop offset="0.06398" stop-color="#00a1ff"/><stop offset="0.07159" stop-color="#00f9ff"/><stop offset="0.07312" stop-color="#06fff8"/><stop offset="0.08073" stop-color="#2dffc7"/><stop offset="0.09139" stop-color="#59ff92"/><stop offset="0.09749" stop-color="#6cff7a"/><stop offset="0.1066" stop-color="#8cff5f"/><stop offset="0.1219" stop-color="#b5ff3d"/><stop offset="0.1371" stop-color="#d4ff24"/><stop offset="0.1676" stop-color="#ffff00"/><stop offset="0.1889" stop-color="#ffe200"/><stop offset="0.2163" stop-color="#ffc600"/><stop offset="0.262" stop-color="#ffa600"/><stop offset="0.3046" stop-color="#ff9200"/><stop offset="0.3534" stop-color="#ff8200"/><stop offset="0.457" stop-color="#ff6e00"/><stop offset="0.5727" stop-color="#ff6400"/><stop offset="0.6946" stop-color="#ff6200"/><stop offset="0.8286" stop-color="#ff6700"/><stop offset="1" stop-color="#ff7800"/></linearGradient><linearGradient id="a72"><stop offset="0" stop-color="#0000ff"/><stop offset="0.05484" stop-color="#0000ff"/><stop offset="0.05636" stop-color="#0004ff"/><stop offset="0.06093" stop-color="#0051ff"/><stop offset="0.0655" stop-color="#0093ff"/><stop offset="0.07007" stop-color="#00cbff"/><stop offset="0.07464" stop-color="#00fbff"/><stop offset="0.07616" stop-color="#06fff7"/><stop offset="0.08226" stop-color="#25ffd1"/><stop offset="0.09139" stop-color="#4bffa2"/><stop offset="0.1005" stop-color="#6aff7d"/><stop offset="0.1127" stop-color="#91ff5b"/><stop offset="0.1249" stop-color="#b1ff41"/><stop offset="0.1432" stop-color="#d5ff23"/><stop offset="0.1615" stop-color="#f0ff0d"/><stop offset="0.1767" stop-color="#fffc00"/><stop offset="0.198" stop-color="#ffe000"/><stop offset="0.2285" stop-color="#ffc300"/><stop offset="0.2925" stop-color="#ff9c00"/><stop offset="0.3595" stop-color="#ff8400"/><stop offset="0.4753" stop-color="#ff6e00"/><stop offset="0.5849" stop-color="#ff6500"/><stop offset="0.7312" stop-color="#ff6300"/><stop offset="0.853" stop-color="#ff6800"/><stop offset="1" stop-color="#ff7600"/></linearGradient><linearGradient id="a73"><stop offset="0" stop-color="#0000ff"/><stop offset="0.05788" stop-color="#0000ff"/><stop offset="0.05941" stop-color="#0013ff"/><stop offset="0.06398" stop-color="#005cff"/><stop offset="0.07007" stop-color="#00acff"/><stop offset="0.07769" stop-color="#00fcff"/><stop offset="0.07921" stop-color="#07fff7"/><stop offset="0.0853" stop-color="#25ffd2"/><stop offset="0.09749" stop-color="#54ff97"/><stop offset="0.1127" stop-color="#84ff65"/><stop offset="0.128" stop-color="#adff44"/><stop offset="0.1462" stop-color="#d1ff26"/><stop offset="0.1676" stop-color="#f0ff0d"/><stop offset="0.1828" stop-color="#fffd00"/><stop offset="0.2011" stop-color="#ffe500"/><stop offset="0.2285" stop-color="#ffca00"/><stop offset="0.2864" stop-color="#ffa400"/><stop offset="0.3656" stop-color="#ff8600"/><stop offset="0.4326" stop-color="#ff7700"/><stop offset="0.5118" stop-color="#ff6c00"/><stop offset="0.6459" stop-color="#ff6400"/><stop offset="0.8408" stop-color="#ff6700"/><stop offset="1" stop-color="#ff7400"/></linearGradient><linearGradient id="a74"><stop offset="0" stop-color="#0000ff"/><stop offset="0.05941" stop-color="#0000ff"/><stop offset="0.06093" stop-color="#0008ff"/><stop offset="0.0655" stop-color="#0050ff"/><stop offset="0.06855" stop-color="#007aff"/><stop offset="0.07312" stop-color="#00b1ff"/><stop offset="0.08073" stop-color="#00feff"/><stop offset="0.08226" stop-color="#07fff6"/><stop offset="0.08835" stop-color="#24ffd2"/><stop offset="0.09749" stop-color="#48ffa6"/><stop offset="0.1097" stop-color="#6eff78"/><stop offset="0.1158" stop-color="#81ff68"/><stop offset="0.128" stop-color="#a2ff4d"/><stop offset="0.1462" stop-color="#c8ff2e"/><stop offset="0.1736" stop-color="#f0ff0d"/><stop offset="0.1889" stop-color="#fffd00"/><stop offset="0.2285" stop-color="#ffd100"/><stop offset="0.2742" stop-color="#ffb000"/><stop offset="0.329" stop-color="#ff9600"/><stop offset="0.4265" stop-color="#ff7b00"/><stop offset="0.524" stop-color="#ff6d00"/><stop offset="0.6946" stop-color="#ff6400"/><stop offset="0.8652" stop-color="#ff6800"/><stop offset="1" stop-color="#ff7300"/></linearGradient><linearGradient id="a75"><stop offset="0" stop-color="#0000ff"/><stop offset="0.06245" stop-color="#0000ff"/><stop offset="0.06702" stop-color="#0045ff"/><stop offset="0.07312" stop-color="#0094ff"/><stop offset="0.07769" stop-color="#00c6ff"/><stop offset="0.08378" stop-color="#00fffe"/><stop offset="0.09444" stop-color="#31ffc3"/><stop offset="0.1005" stop-color="#47ffa8"/><stop offset="0.1127" stop-color="#6cff7b"/><stop offset="0.1219" stop-color="#87ff63"/><stop offset="0.134" stop-color="#a6ff4a"/><stop offset="0.1493" stop-color="#c4ff31"/><stop offset="0.1797" stop-color="#f0ff0d"/><stop offset="0.195" stop-color="#fffe00"/><stop offset="0.2376" stop-color="#ffd000"/><stop offset="0.2925" stop-color="#ffab00"/><stop offset="0.3351" stop-color="#ff9800"/><stop offset="0.4265" stop-color="#ff7e00"/><stop offset="0.524" stop-color="#ff6f00"/><stop offset="0.6824" stop-color="#ff6500"/><stop offset="0.8165" stop-color="#ff6600"/><stop offset="1" stop-color="#ff7200"/></linearGradient><linearGradient id="a76"><stop offset="0" stop-color="#0000ff"/><stop offset="0.06398" stop-color="#0000ff"/><stop offset="0.0655" stop-color="#000dff"/><stop offset="0.07007" stop-color="#004fff"/><stop offset="0.07464" stop-color="#0089ff"/><stop offset="0.08226" stop-color="#00d9ff"/><stop offset="0.08682" stop-color="#02fffd"/><stop offset="0.09749" stop-color="#30ffc4"/><stop offset="0.1066" stop-color="#50ff9d"/><stop offset="0.1188" stop-color="#72ff74"/><stop offset="0.128" stop-color="#8cff5f"/><stop offset="0.1401" stop-color="#a9ff47"/><stop offset="0.1615" stop-color="#d0ff27"/><stop offset="0.1797" stop-color="#e9ff12"/><stop offset="0.2011" stop-color="#fffe00"/><stop offset="0.2407" stop-color="#ffd400"/><stop offset="0.2986" stop-color="#ffad00"/><stop offset="0.39" stop-color="#ff8a00"/><stop offset="0.4509" stop-color="#ff7c00"/><stop offset="0.5727" stop-color="#ff6c00"/><stop offset="0.6946" stop-color="#ff6600"/><stop offset="0.8165" stop-color="#ff6600"/><stop offset="1" stop-color="#ff7100"/></linearGradient><linearGradient id="a77"><stop offset="0" stop-color="#0000ff"/><stop offset="0.0655" stop-color="#0000ff"/><stop offset="0.06702" stop-color="#000dff"/><stop offset="0.07159" stop-color="#004fff"/><stop offset="0.07921" stop-color="#00a9ff"/><stop offset="0.08835" stop-color="#00feff"/><stop offset="0.08987" stop-color="#07fff7"/><stop offset="0.1005" stop-color="#33ffc0"/><stop offset="0.1127" stop-color="#5bff90"/><stop offset="0.1188" stop-color="#6bff7c"/><stop offset="0.134" stop-color="#94ff58"/><stop offset="0.1523" stop-color="#bbff39"/><stop offset="0.1706" stop-color="#d8ff21"/><stop offset="0.1889" stop-color="#efff0e"/><stop offset="0.2072" stop-color="#fffc00"/><stop offset="0.2559" stop-color="#ffcc00"/><stop offset="0.3107" stop-color="#ffaa00"/><stop offset="0.3839" stop-color="#ff8e00"/><stop offset="0.4448" stop-color="#ff7f00"/><stop offset="0.5362" stop-color="#ff7100"/><stop offset="0.719" stop-color="#ff6600"/><stop offset="0.8408" stop-color="#ff6700"/><stop offset="1" stop-color="#ff7000"/></linearGradient></defs><rect x="481.60" y="92.56" width="328.25" height="3.40" fill="url(#a0)"/><rect x="481.60" y="95.56" width="328.25" height="3.40" fill="url(#a1)"/><rect x="481.60" y="98.56" width="328.25" height="3.40" fill="url(#a2)"/><rect x="481.60" y="101.56" width="328.25" height="3.40" fill="url(#a3)"/><rect x="481.60" y="104.56" width="328.25" height="3.40" fill="url(#a4)"/><rect x="481.60" y="107.56" width="328.25" height="3.40" fill="url(#a5)"/><rect x="481.60" y="110.56" width="328.25" height="3.40" fill="url(#a6)"/><rect x="481.60" y="113.56" width="328.25" height="3.40" fill="url(#a7)"/><rect x="481.60" y="116.56" width="328.25" height="3.40" fill="url(#a8)"/><rect x="481.60" y="119.56" width="328.25" height="3.40" fill="url(#a9)"/><rect x="481.60" y="122.56" width="328.25" height="3.40" fill="url(#a10)"/><rect x="481.60" y="125.56" width="328.25" height="3.40" fill="url(#a11)"/><rect x="481.60" y="128.56" width="328.25" height="2.40" fill="url(#a12)"/><rect x="481.60" y="130.56" width="328.25" height="2.40" fill="url(#a13)"/><rect x="481.60" y="132.56" width="328.25" height="2.40" fill="url(#a14)"/><rect x="481.60" y="134.56" width="328.25" height="2.40" fill="url(#a15)"/><rect x="481.60" y="136.56" width="328.25" height="2.40" fill="url(#a16)"/><rect x="481.60" y="138.56" width="328.25" height="2.40" fill="url(#a17)"/><rect x="481.60" y="140.56" width="328.25" height="2.40" fill="url(#a18)"/><rect x="481.60" y="142.56" width="328.25" height="2.40" fill="url(#a19)"/><rect x="481.60" y="144.56" width="328.25" height="2.40" fill="url(#a20)"/><rect x="481.60" y="146.56" width="328.25" height="2.40" fill="url(#a21)"/><rect x="481.60" y="148.56" width="328.25" height="2.40" fill="url(#a22)"/><rect x="481.60" y="150.56" width="328.25" height="2.40" fill="url(#a23)"/><rect x="481.60" y="152.56" width="328.25" height="1.40" fill="url(#a24)"/><rect x="481.60" y="153.56" width="328.25" height="1.40" fill="url(#a25)"/><rect x="481.60" y="154.56" width="328.25" height="1.40" fill="url(#a26)"/><rect x="481.60" y="155.56" width="328.25" height="1.40" fill="url(#a27)"/><rect x="481.60" y="156.56" width="328.25" height="1.40" fill="url(#a28)"/><rect x="481.60" y="157.56" width="328.25" height="1.40" fill="url(#a29)"/><rect x="481.60" y="158.56" width="328.25" height="1.40" fill="url(#a30)"/><rect x="481.60" y="159.56" width="328.25" height="1.40" fill="url(#a31)"/><rect x="481.60" y="160.56" width="328.25" height="1.40" fill="url(#a32)"/><rect x="481.60" y="161.56" width="328.25" height="1.40" fill="url(#a33)"/><rect x="481.60" y="162.56" width="328.25" height="1.40" fill="url(#a34)"/><rect x="481.60" y="163.56" width="328.25" height="1.40" fill="url(#a35)"/><rect x="481.60" y="164.56" width="328.25" height="1.40" fill="url(#a36)"/><rect x="481.60" y="165.56" width="328.25" height="1.40" fill="url(#a37)"/><rect x="481.60" y="166.56" width="328.25" height="1.40" fill="url(#a38)"/><rect x="481.60" y="167.56" width="328.25" height="1.40" fill="url(#a39)"/><rect x="481.60" y="168.56" width="328.25" height="1.40" fill="url(#a40)"/><rect x="481.60" y="169.56" width="328.25" height="1.40" fill="url(#a41)"/><rect x="481.60" y="170.56" width="328.25" height="1.40" fill="url(#a42)"/><rect x="481.60" y="171.56" width="328.25" height="1.40" fill="url(#a43)"/><rect x="481.60" y="172.56" width="328.25" height="1.40" fill="url(#a44)"/><rect x="481.60" y="173.56" width="328.25" height="1.40" fill="url(#a45)"/><rect x="481.60" y="174.56" width="328.25" height="1.40" fill="url(#a46)"/><rect x="481.60" y="175.56" width="328.25" height="1.40" fill="url(#a47)"/><rect x="481.60" y="176.56" width="328.25" height="1.40" fill="url(#a48)"/><rect x="481.60" y="177.56" width="328.25" height="1.40" fill="url(#a49)"/><rect x="481.60" y="178.56" width="328.25" height="1.40" fill="url(#a50)"/><rect x="481.60" y="179.56" width="328.25" height="1.40" fill="url(#a51)"/><rect x="481.60" y="180.56" width="328.25" height="1.40" fill="url(#a52)"/><rect x="481.60" y="181.56" width="328.25" height="2.40" fill="url(#a53)"/><rect x="481.60" y="183.56" width="328.25" height="2.40" fill="url(#a54)"/><rect x="481.60" y="185.56" width="328.25" height="2.40" fill="url(#a55)"/><rect x="481.60" y="187.56" width="328.25" height="2.40" fill="url(#a56)"/><rect x="481.60" y="189.56" width="328.25" height="2.40" fill="url(#a57)"/><rect x="481.60" y="191.56" width="328.25" height="2.40" fill="url(#a58)"/><rect x="481.60" y="193.56" width="328.25" height="2.40" fill="url(#a59)"/><rect x="481.60" y="195.56" width="328.25" height="2.40" fill="url(#a60)"/><rect x="481.60" y="197.56" width="328.25" height="2.40" fill="url(#a61)"/><rect x="481.60" y="199.56" width="328.25" height="2.40" fill="url(#a62)"/><rect x="481.60" y="201.56" width="328.25" height="2.40" fill="url(#a63)"/><rect x="481.60" y="203.56" width="328.25" height="2.40" fill="url(#a64)"/><rect x="481.60" y="205.56" width="328.25" height="2.40" fill="url(#a65)"/><rect x="481.60" y="207.56" width="328.25" height="3.40" fill="url(#a66)"/><rect x="481.60" y="210.56" width="328.25" height="3.40" fill="url(#a67)"/><rect x="481.60" y="213.56" width="328.25" height="3.40" fill="url(#a68)"/><rect x="481.60" y="216.56" width="328.25" height="3.40" fill="url(#a69)"/><rect x="481.60" y="219.56" width="328.25" height="3.40" fill="url(#a70)"/><rect x="481.60" y="222.56" width="328.25" height="3.40" fill="url(#a71)"/><rect x="481.60" y="225.56" width="328.25" height="3.40" fill="url(#a72)"/><rect x="481.60" y="228.56" width="328.25" height="3.40" fill="url(#a73)"/><rect x="481.60" y="231.56" width="328.25" height="3.40" fill="url(#a74)"/><rect x="481.60" y="234.56" width="328.25" height="3.40" fill="url(#a75)"/><rect x="481.60" y="237.56" width="328.25" height="3.40" fill="url(#a76)"/><rect x="481.60" y="240.56" width="328.25" height="1.19" fill="url(#a77)"/><circle cx="599.55" cy="124.53" r="2.8" fill="none" stroke="#1a1a1a" stroke-width="1.0"/><path d="M481.60 81.50V257.60M475.40 252.40H852.90M475.40 252.40H481.60M478.40 241.74H481.60M475.40 231.09H481.60M478.40 220.43H481.60M475.40 209.78H481.60M478.40 199.12H481.60M475.40 188.46H481.60M478.40 177.81H481.60M475.40 167.15H481.60M478.40 156.49H481.60M475.40 145.84H481.60M478.40 135.18H481.60M475.40 124.53H481.60M478.40 113.87H481.60M475.40 103.21H481.60M478.40 92.56H481.60M475.40 81.90H481.60M481.60 252.40V257.60M512.51 252.40V255.20M543.42 252.40V257.60M574.33 252.40V255.20M605.23 252.40V257.60M636.14 252.40V255.20M667.05 252.40V257.60M697.96 252.40V255.20M728.87 252.40V257.60M759.77 252.40V255.20M790.68 252.40V257.60M821.59 252.40V255.20M852.50 252.40V257.60" stroke="#2a2a2a" stroke-width="0.95" fill="none"/><g font-family="'DejaVu Sans Condensed','DejaVu Sans',sans-serif" font-size="7.90" font-weight="bold" fill="#1a1a1a"><text x="471.80" y="255.30" text-anchor="end">-400</text><text x="471.80" y="233.99" text-anchor="end">-300</text><text x="471.80" y="212.68" text-anchor="end">-200</text><text x="471.80" y="191.36" text-anchor="end">-100</text><text x="471.80" y="170.05" text-anchor="end">0</text><text x="471.80" y="148.74" text-anchor="end">100</text><text x="471.80" y="127.43" text-anchor="end">200</text><text x="471.80" y="106.11" text-anchor="end">300</text><text x="471.80" y="84.80" text-anchor="end">400</text><text x="481.60" y="266.00" text-anchor="middle">0</text><text x="543.42" y="266.00" text-anchor="middle">2</text><text x="605.23" y="266.00" text-anchor="middle">4</text><text x="667.05" y="266.00" text-anchor="middle">6</text><text x="728.87" y="266.00" text-anchor="middle">8</text><text x="790.68" y="266.00" text-anchor="middle">10</text><text x="852.50" y="266.00" text-anchor="middle">12</text><text x="481.30" y="72.70" text-anchor="end">[Nm]</text><text x="855.10" y="250.20">x10<tspan dx="0.9" dy="-3.6" font-size="5.6">3</tspan></text></g><text x="640.20" y="278.80" font-family="'DejaVu Sans Condensed','DejaVu Sans',sans-serif" font-size="7.90" fill="#1a1a1a">X: speed [rpm]</text><defs><linearGradient id="acb" x1="0" y1="0" x2="0" y2="1"><stop offset="0.0000" stop-color="#ff0000"/><stop offset="0.1400" stop-color="#ffff00"/><stop offset="0.2500" stop-color="#6eff78"/><stop offset="0.3550" stop-color="#00ffff"/><stop offset="0.5000" stop-color="#0000ff"/></linearGradient></defs><rect x="881.60" y="101.10" width="8.00" height="132.00" fill="url(#acb)"/><path d="M881.60 100.70V233.50M878.20 233.10H881.60M879.80 219.90H881.60M878.20 206.70H881.60M879.80 193.50H881.60M878.20 180.30H881.60M879.80 167.10H881.60M878.20 153.90H881.60M879.80 140.70H881.60M878.20 127.50H881.60M879.80 114.30H881.60M878.20 101.10H881.60" stroke="#2a2a2a" stroke-width="0.95" fill="none"/><g font-family="'DejaVu Sans Condensed','DejaVu Sans',sans-serif" font-size="7.90" font-weight="bold" fill="#1a1a1a"><text x="876.00" y="236.00" text-anchor="end">0.0</text><text x="876.00" y="209.60" text-anchor="end">0.2</text><text x="876.00" y="183.20" text-anchor="end">0.4</text><text x="876.00" y="156.80" text-anchor="end">0.6</text><text x="876.00" y="130.40" text-anchor="end">0.8</text><text x="876.00" y="104.00" text-anchor="end">1.0</text></g><rect x="497.60" y="49.70" width="146.80" height="31.90" fill="#fff" stroke="#1e1e1e" stroke-width="0.95"/><circle cx="508" cy="59.80" r="2.75" fill="#fff" stroke="#222" stroke-width="0.95"/><text x="516.6" y="62.60" font-family="'DejaVu Sans Condensed','DejaVu Sans',sans-serif" font-size="7.90" fill="#1a1a1a">reference point [Nm]</text><rect x="500.8" y="70.00" width="13.6" height="1.72" fill="#ff0000"/><rect x="500.8" y="71.52" width="13.6" height="1.72" fill="#ffd000"/><rect x="500.8" y="73.04" width="13.6" height="1.72" fill="#40ff40"/><rect x="500.8" y="74.56" width="13.6" height="1.72" fill="#00d8ff"/><rect x="500.8" y="76.08" width="13.6" height="1.72" fill="#0000ff"/><text x="516.6" y="76.70" font-family="'DejaVu Sans Condensed','DejaVu Sans',sans-serif" font-size="7.90" fill="#1a1a1a">reference machine efficiency [null]</text>
<path d="M504.78 319.80V490.30M527.96 319.80V490.30M551.14 319.80V490.30M574.33 319.80V490.30M597.51 319.80V490.30M620.69 319.80V490.30M643.87 319.80V490.30M667.05 319.80V490.30M690.23 319.80V490.30M713.41 319.80V490.30M736.59 319.80V490.30M759.77 319.80V490.30M782.96 319.80V490.30M806.14 319.80V490.30M829.32 319.80V490.30M852.50 319.80V490.30M481.60 490.30H852.50M481.60 476.09H852.50M481.60 461.88H852.50M481.60 447.68H852.50M481.60 433.47H852.50M481.60 419.26H852.50M481.60 405.05H852.50M481.60 390.84H852.50M481.60 376.63H852.50M481.60 362.43H852.50M481.60 348.22H852.50M481.60 334.01H852.50M481.60 319.80H852.50" stroke="#e5e5e5" stroke-width="0.8" stroke-dasharray="1 1.2" fill="none"/><path d="M852.50 319.80V490.30 M481.60 405.05H852.50" stroke="#d0d0d0" stroke-width="0.9" fill="none"/><path d="M481.60 319.80H852.50" stroke="#e0e0e0" stroke-width="0.8" fill="none"/><defs><linearGradient id="b0"><stop offset="0" stop-color="#0000ff"/><stop offset="0.03711" stop-color="#0003ff"/><stop offset="0.04305" stop-color="#0052ff"/><stop offset="0.04899" stop-color="#0096ff"/><stop offset="0.05492" stop-color="#00d0ff"/><stop offset="0.06086" stop-color="#02fffd"/><stop offset="0.07125" stop-color="#2dffc7"/><stop offset="0.08165" stop-color="#50ff9c"/><stop offset="0.09204" stop-color="#6dff7a"/><stop offset="0.1009" stop-color="#86ff64"/><stop offset="0.1128" stop-color="#a3ff4c"/><stop offset="0.1366" stop-color="#cfff28"/><stop offset="0.1603" stop-color="#efff0e"/><stop offset="0.1781" stop-color="#fffc00"/><stop offset="0.2108" stop-color="#ffd800"/><stop offset="0.2731" stop-color="#ffac00"/><stop offset="0.3385" stop-color="#ff9000"/><stop offset="0.4335" stop-color="#ff7800"/><stop offset="0.5344" stop-color="#ff6a00"/><stop offset="0.6769" stop-color="#ff6100"/><stop offset="0.8432" stop-color="#ff6100"/><stop offset="1" stop-color="#ff6900"/></linearGradient><linearGradient id="b1"><stop offset="0" stop-color="#0000ff"/><stop offset="0.03563" stop-color="#0000ff"/><stop offset="0.04305" stop-color="#0063ff"/><stop offset="0.04899" stop-color="#00a6ff"/><stop offset="0.05641" stop-color="#00edff"/><stop offset="0.05938" stop-color="#04fffa"/><stop offset="0.0668" stop-color="#25ffd2"/><stop offset="0.08016" stop-color="#54ff98"/><stop offset="0.08907" stop-color="#6cff7a"/><stop offset="0.1009" stop-color="#8fff5d"/><stop offset="0.1128" stop-color="#abff46"/><stop offset="0.1336" stop-color="#d1ff26"/><stop offset="0.1514" stop-color="#eaff12"/><stop offset="0.1722" stop-color="#fffd00"/><stop offset="0.2167" stop-color="#ffcd00"/><stop offset="0.2613" stop-color="#ffae00"/><stop offset="0.3147" stop-color="#ff9500"/><stop offset="0.4156" stop-color="#ff7900"/><stop offset="0.5463" stop-color="#ff6700"/><stop offset="0.6769" stop-color="#ff6000"/><stop offset="0.8432" stop-color="#ff6100"/><stop offset="1" stop-color="#ff6a00"/></linearGradient><linearGradient id="b2"><stop offset="0" stop-color="#0000ff"/><stop offset="0.03414" stop-color="#0000ff"/><stop offset="0.03563" stop-color="#000fff"/><stop offset="0.04156" stop-color="#0062ff"/><stop offset="0.04899" stop-color="#00b7ff"/><stop offset="0.05641" stop-color="#00fdff"/><stop offset="0.05789" stop-color="#06fff8"/><stop offset="0.0668" stop-color="#2dffc7"/><stop offset="0.07868" stop-color="#57ff94"/><stop offset="0.0861" stop-color="#6cff7a"/><stop offset="0.09797" stop-color="#8fff5c"/><stop offset="0.1128" stop-color="#b3ff3f"/><stop offset="0.1336" stop-color="#d8ff21"/><stop offset="0.1663" stop-color="#fffd00"/><stop offset="0.1989" stop-color="#ffd700"/><stop offset="0.2553" stop-color="#ffad00"/><stop offset="0.3206" stop-color="#ff8f00"/><stop offset="0.3978" stop-color="#ff7a00"/><stop offset="0.4988" stop-color="#ff6a00"/><stop offset="0.6413" stop-color="#ff6000"/><stop offset="0.8194" stop-color="#ff6000"/><stop offset="1" stop-color="#ff6b00"/></linearGradient><linearGradient id="b3"><stop offset="0" stop-color="#0000ff"/><stop offset="0.03266" stop-color="#0000ff"/><stop offset="0.03414" stop-color="#000bff"/><stop offset="0.0386" stop-color="#004dff"/><stop offset="0.04453" stop-color="#0098ff"/><stop offset="0.05047" stop-color="#00d7ff"/><stop offset="0.05492" stop-color="#01fffe"/><stop offset="0.06977" stop-color="#42ffae"/><stop offset="0.08165" stop-color="#68ff7f"/><stop offset="0.08907" stop-color="#7fff6a"/><stop offset="0.1009" stop-color="#a0ff4f"/><stop offset="0.1188" stop-color="#c6ff2f"/><stop offset="0.1336" stop-color="#dfff1b"/><stop offset="0.1603" stop-color="#fffe00"/><stop offset="0.2019" stop-color="#ffce00"/><stop offset="0.2553" stop-color="#ffa800"/><stop offset="0.3028" stop-color="#ff9200"/><stop offset="0.4038" stop-color="#ff7600"/><stop offset="0.5582" stop-color="#ff6300"/><stop offset="0.7007" stop-color="#ff5e00"/><stop offset="0.8669" stop-color="#ff6200"/><stop offset="1" stop-color="#ff6c00"/></linearGradient><linearGradient id="b4"><stop offset="0" stop-color="#0000ff"/><stop offset="0.03117" stop-color="#0000ff"/><stop offset="0.03266" stop-color="#0006ff"/><stop offset="0.03711" stop-color="#004bff"/><stop offset="0.04305" stop-color="#0099ff"/><stop offset="0.05047" stop-color="#00e9ff"/><stop offset="0.05344" stop-color="#03fffb"/><stop offset="0.05938" stop-color="#21ffd7"/><stop offset="0.06977" stop-color="#4bffa3"/><stop offset="0.08461" stop-color="#7bff6d"/><stop offset="0.09501" stop-color="#9aff54"/><stop offset="0.1128" stop-color="#c3ff32"/><stop offset="0.1366" stop-color="#eaff12"/><stop offset="0.1544" stop-color="#fffe00"/><stop offset="0.1959" stop-color="#ffcd00"/><stop offset="0.2316" stop-color="#ffb100"/><stop offset="0.3028" stop-color="#ff8e00"/><stop offset="0.38" stop-color="#ff7800"/><stop offset="0.5225" stop-color="#ff6400"/><stop offset="0.6413" stop-color="#ff5e00"/><stop offset="0.8194" stop-color="#ff6000"/><stop offset="1" stop-color="#ff6d00"/></linearGradient><linearGradient id="b5"><stop offset="0" stop-color="#0000ff"/><stop offset="0.03117" stop-color="#0001ff"/><stop offset="0.03711" stop-color="#005fff"/><stop offset="0.04156" stop-color="#009aff"/><stop offset="0.04602" stop-color="#00ceff"/><stop offset="0.05047" stop-color="#00fbff"/><stop offset="0.05196" stop-color="#06fff8"/><stop offset="0.06086" stop-color="#31ffc2"/><stop offset="0.06829" stop-color="#4fff9e"/><stop offset="0.07571" stop-color="#67ff80"/><stop offset="0.08758" stop-color="#8eff5d"/><stop offset="0.1009" stop-color="#b2ff40"/><stop offset="0.1128" stop-color="#cbff2b"/><stop offset="0.1277" stop-color="#e4ff16"/><stop offset="0.1484" stop-color="#ffff00"/><stop offset="0.1692" stop-color="#ffe200"/><stop offset="0.193" stop-color="#ffc900"/><stop offset="0.2375" stop-color="#ffa800"/><stop offset="0.2969" stop-color="#ff8c00"/><stop offset="0.386" stop-color="#ff7400"/><stop offset="0.4632" stop-color="#ff6800"/><stop offset="0.6532" stop-color="#ff5d00"/><stop offset="0.855" stop-color="#ff6200"/><stop offset="1" stop-color="#ff6e00"/></linearGradient><linearGradient id="b6"><stop offset="0" stop-color="#0000ff"/><stop offset="0.02969" stop-color="#0000ff"/><stop offset="0.03563" stop-color="#005eff"/><stop offset="0.0386" stop-color="#0088ff"/><stop offset="0.04305" stop-color="#00c0ff"/><stop offset="0.04899" stop-color="#00ffff"/><stop offset="0.05492" stop-color="#20ffd7"/><stop offset="0.06235" stop-color="#42ffae"/><stop offset="0.07274" stop-color="#67ff80"/><stop offset="0.08016" stop-color="#81ff68"/><stop offset="0.08907" stop-color="#9dff51"/><stop offset="0.1009" stop-color="#bbff39"/><stop offset="0.1247" stop-color="#e7ff14"/><stop offset="0.1425" stop-color="#ffff00"/><stop offset="0.1663" stop-color="#ffde00"/><stop offset="0.19" stop-color="#ffc500"/><stop offset="0.2375" stop-color="#ffa300"/><stop offset="0.3028" stop-color="#ff8600"/><stop offset="0.4038" stop-color="#ff6e00"/><stop offset="0.5344" stop-color="#ff6000"/><stop offset="0.7244" stop-color="#ff5d00"/><stop offset="0.8432" stop-color="#ff6200"/><stop offset="1" stop-color="#ff7000"/></linearGradient><linearGradient id="b7"><stop offset="0" stop-color="#0000ff"/><stop offset="0.0282" stop-color="#0000ff"/><stop offset="0.02969" stop-color="#0012ff"/><stop offset="0.03414" stop-color="#005dff"/><stop offset="0.0386" stop-color="#009dff"/><stop offset="0.04305" stop-color="#00d5ff"/><stop offset="0.04602" stop-color="#00f5ff"/><stop offset="0.0475" stop-color="#03fffb"/><stop offset="0.05492" stop-color="#2cffca"/><stop offset="0.06235" stop-color="#4cffa1"/><stop offset="0.07125" stop-color="#6cff7a"/><stop offset="0.07719" stop-color="#82ff67"/><stop offset="0.09204" stop-color="#afff42"/><stop offset="0.1098" stop-color="#d6ff22"/><stop offset="0.1277" stop-color="#f3ff0a"/><stop offset="0.1395" stop-color="#fffb00"/><stop offset="0.1603" stop-color="#ffdd00"/><stop offset="0.187" stop-color="#ffc100"/><stop offset="0.2345" stop-color="#ff9f00"/><stop offset="0.3206" stop-color="#ff7d00"/><stop offset="0.4216" stop-color="#ff6900"/><stop offset="0.5463" stop-color="#ff5e00"/><stop offset="0.6888" stop-color="#ff5c00"/><stop offset="0.8194" stop-color="#ff6100"/><stop offset="1" stop-color="#ff7200"/></linearGradient><linearGradient id="b8"><stop offset="0" stop-color="#0000ff"/><stop offset="0.02672" stop-color="#0000ff"/><stop offset="0.0282" stop-color="#000eff"/><stop offset="0.03414" stop-color="#0074ff"/><stop offset="0.04008" stop-color="#00c7ff"/><stop offset="0.04453" stop-color="#00fbff"/><stop offset="0.04602" stop-color="#07fff7"/><stop offset="0.05344" stop-color="#30ffc4"/><stop offset="0.05938" stop-color="#4bffa3"/><stop offset="0.0668" stop-color="#67ff80"/><stop offset="0.07422" stop-color="#83ff66"/><stop offset="0.08313" stop-color="#a1ff4e"/><stop offset="0.09797" stop-color="#c7ff2e"/><stop offset="0.1158" stop-color="#e9ff12"/><stop offset="0.1306" stop-color="#feff01"/><stop offset="0.1336" stop-color="#fffb00"/><stop offset="0.1544" stop-color="#ffdc00"/><stop offset="0.1781" stop-color="#ffc200"/><stop offset="0.2286" stop-color="#ff9d00"/><stop offset="0.291" stop-color="#ff8200"/><stop offset="0.4038" stop-color="#ff6900"/><stop offset="0.5225" stop-color="#ff5e00"/><stop offset="0.7007" stop-color="#ff5c00"/><stop offset="0.8075" stop-color="#ff6100"/><stop offset="1" stop-color="#ff7400"/></linearGradient><linearGradient id="b9"><stop offset="0" stop-color="#0000ff"/><stop offset="0.02524" stop-color="#0000ff"/><stop offset="0.02672" stop-color="#0009ff"/><stop offset="0.03117" stop-color="#005cff"/><stop offset="0.03563" stop-color="#00a2ff"/><stop offset="0.0386" stop-color="#00cbff"/><stop offset="0.04305" stop-color="#01fffe"/><stop offset="0.05047" stop-color="#2dffc8"/><stop offset="0.05938" stop-color="#56ff95"/><stop offset="0.0668" stop-color="#73ff74"/><stop offset="0.07422" stop-color="#8fff5c"/><stop offset="0.08313" stop-color="#acff45"/><stop offset="0.09797" stop-color="#d1ff26"/><stop offset="0.1188" stop-color="#f6ff08"/><stop offset="0.1277" stop-color="#fffb00"/><stop offset="0.1425" stop-color="#ffe300"/><stop offset="0.1692" stop-color="#ffc300"/><stop offset="0.1959" stop-color="#ffac00"/><stop offset="0.2256" stop-color="#ff9900"/><stop offset="0.291" stop-color="#ff7e00"/><stop offset="0.38" stop-color="#ff6a00"/><stop offset="0.5344" stop-color="#ff5c00"/><stop offset="0.665" stop-color="#ff5b00"/><stop offset="0.7957" stop-color="#ff6100"/><stop offset="1" stop-color="#ff7700"/></linearGradient><linearGradient id="b10"><stop offset="0" stop-color="#0000ff"/><stop offset="0.02524" stop-color="#0003ff"/><stop offset="0.02969" stop-color="#005bff"/><stop offset="0.03414" stop-color="#00a5ff"/><stop offset="0.0386" stop-color="#00e3ff"/><stop offset="0.04008" stop-color="#00f5ff"/><stop offset="0.04156" stop-color="#05fff9"/><stop offset="0.04602" stop-color="#21ffd6"/><stop offset="0.05344" stop-color="#48ffa6"/><stop offset="0.06235" stop-color="#6dff79"/><stop offset="0.06977" stop-color="#8cff5f"/><stop offset="0.08016" stop-color="#afff42"/><stop offset="0.09204" stop-color="#ceff29"/><stop offset="0.1158" stop-color="#faff04"/><stop offset="0.1217" stop-color="#fffb00"/><stop offset="0.1366" stop-color="#ffe200"/><stop offset="0.1633" stop-color="#ffc100"/><stop offset="0.187" stop-color="#ffac00"/><stop offset="0.2227" stop-color="#ff9500"/><stop offset="0.291" stop-color="#ff7a00"/><stop offset="0.3978" stop-color="#ff6500"/><stop offset="0.5344" stop-color="#ff5b00"/><stop offset="0.665" stop-color="#ff5b00"/><stop offset="0.8194" stop-color="#ff6400"/><stop offset="1" stop-color="#ff7a00"/></linearGradient><linearGradient id="b11"><stop offset="0" stop-color="#0000ff"/><stop offset="0.02375" stop-color="#0000ff"/><stop offset="0.0282" stop-color="#005aff"/><stop offset="0.03266" stop-color="#00a8ff"/><stop offset="0.0386" stop-color="#00fcff"/><stop offset="0.04008" stop-color="#09fff4"/><stop offset="0.04602" stop-color="#2fffc5"/><stop offset="0.05492" stop-color="#5cff8e"/><stop offset="0.05938" stop-color="#6eff78"/><stop offset="0.0668" stop-color="#8eff5d"/><stop offset="0.07571" stop-color="#aeff43"/><stop offset="0.08907" stop-color="#d2ff25"/><stop offset="0.1039" stop-color="#f0ff0d"/><stop offset="0.1158" stop-color="#fffb00"/><stop offset="0.1366" stop-color="#ffd800"/><stop offset="0.1544" stop-color="#ffc200"/><stop offset="0.2019" stop-color="#ff9b00"/><stop offset="0.2435" stop-color="#ff8600"/><stop offset="0.285" stop-color="#ff7800"/><stop offset="0.38" stop-color="#ff6500"/><stop offset="0.4988" stop-color="#ff5b00"/><stop offset="0.6532" stop-color="#ff5b00"/><stop offset="0.8313" stop-color="#ff6700"/><stop offset="1" stop-color="#ff7e00"/></linearGradient><linearGradient id="b12"><stop offset="0" stop-color="#0000ff"/><stop offset="0.02227" stop-color="#0000ff"/><stop offset="0.02375" stop-color="#0019ff"/><stop offset="0.02672" stop-color="#0059ff"/><stop offset="0.02969" stop-color="#0092ff"/><stop offset="0.03414" stop-color="#00daff"/><stop offset="0.03711" stop-color="#02fffc"/><stop offset="0.04305" stop-color="#2cffc9"/><stop offset="0.04899" stop-color="#4dffa0"/><stop offset="0.05641" stop-color="#6fff77"/><stop offset="0.06235" stop-color="#8bff60"/><stop offset="0.07422" stop-color="#b6ff3d"/><stop offset="0.08758" stop-color="#daff1f"/><stop offset="0.1069" stop-color="#feff01"/><stop offset="0.1098" stop-color="#fffa00"/><stop offset="0.1217" stop-color="#ffe400"/><stop offset="0.1455" stop-color="#ffc300"/><stop offset="0.1722" stop-color="#ffa900"/><stop offset="0.2049" stop-color="#ff9300"/><stop offset="0.2672" stop-color="#ff7900"/><stop offset="0.3681" stop-color="#ff6400"/><stop offset="0.4988" stop-color="#ff5a00"/><stop offset="0.6888" stop-color="#ff5d00"/><stop offset="0.855" stop-color="#ff6c00"/><stop offset="1" stop-color="#ff8300"/></linearGradient><linearGradient id="b13"><stop offset="0" stop-color="#0000ff"/><stop offset="0.02078" stop-color="#0000ff"/><stop offset="0.02227" stop-color="#000dff"/><stop offset="0.02524" stop-color="#0053ff"/><stop offset="0.02969" stop-color="#00aaff"/><stop offset="0.03414" stop-color="#00f1ff"/><stop offset="0.03563" stop-color="#04fffa"/><stop offset="0.04156" stop-color="#2fffc5"/><stop offset="0.0475" stop-color="#52ff9b"/><stop offset="0.05196" stop-color="#67ff80"/><stop offset="0.05938" stop-color="#8bff60"/><stop offset="0.07125" stop-color="#b8ff3b"/><stop offset="0.08313" stop-color="#d9ff20"/><stop offset="0.1009" stop-color="#fdff02"/><stop offset="0.1039" stop-color="#fffc00"/><stop offset="0.1247" stop-color="#ffd600"/><stop offset="0.1395" stop-color="#ffc200"/><stop offset="0.1692" stop-color="#ffa500"/><stop offset="0.1959" stop-color="#ff9300"/><stop offset="0.2553" stop-color="#ff7900"/><stop offset="0.3681" stop-color="#ff6200"/><stop offset="0.5107" stop-color="#ff5900"/><stop offset="0.6769" stop-color="#ff5d00"/><stop offset="0.8432" stop-color="#ff6d00"/><stop offset="1" stop-color="#ff8700"/></linearGradient><linearGradient id="b14"><stop offset="0" stop-color="#0000ff"/><stop offset="0.02078" stop-color="#0000ff"/><stop offset="0.02524" stop-color="#0067ff"/><stop offset="0.0282" stop-color="#00a3ff"/><stop offset="0.03266" stop-color="#00efff"/><stop offset="0.03414" stop-color="#03fffb"/><stop offset="0.0386" stop-color="#26ffd0"/><stop offset="0.04602" stop-color="#54ff98"/><stop offset="0.05196" stop-color="#71ff75"/><stop offset="0.05938" stop-color="#95ff57"/><stop offset="0.07125" stop-color="#c1ff33"/><stop offset="0.08016" stop-color="#daff1f"/><stop offset="0.09797" stop-color="#feff01"/><stop offset="0.1009" stop-color="#fff900"/><stop offset="0.1217" stop-color="#ffd300"/><stop offset="0.1366" stop-color="#ffbf00"/><stop offset="0.1603" stop-color="#ffa700"/><stop offset="0.19" stop-color="#ff9200"/><stop offset="0.2553" stop-color="#ff7600"/><stop offset="0.3563" stop-color="#ff6200"/><stop offset="0.4869" stop-color="#ff5900"/><stop offset="0.6769" stop-color="#ff5e00"/><stop offset="0.8313" stop-color="#ff6e00"/><stop offset="1" stop-color="#ff8b00"/></linearGradient><linearGradient id="b15"><stop offset="0" stop-color="#0000ff"/><stop offset="0.0193" stop-color="#0000ff"/><stop offset="0.02078" stop-color="#000eff"/><stop offset="0.02375" stop-color="#005aff"/><stop offset="0.02672" stop-color="#009bff"/><stop offset="0.02969" stop-color="#00d3ff"/><stop offset="0.03266" stop-color="#02fffc"/><stop offset="0.03711" stop-color="#27ffcf"/><stop offset="0.04156" stop-color="#45ffaa"/><stop offset="0.04602" stop-color="#5eff8b"/><stop offset="0.05196" stop-color="#7dff6b"/><stop offset="0.06383" stop-color="#b2ff40"/><stop offset="0.07274" stop-color="#cfff28"/><stop offset="0.08758" stop-color="#f3ff0a"/><stop offset="0.09501" stop-color="#fffd00"/><stop offset="0.1069" stop-color="#ffe400"/><stop offset="0.1336" stop-color="#ffbc00"/><stop offset="0.1574" stop-color="#ffa400"/><stop offset="0.1841" stop-color="#ff9100"/><stop offset="0.2494" stop-color="#ff7500"/><stop offset="0.3503" stop-color="#ff6100"/><stop offset="0.4691" stop-color="#ff5900"/><stop offset="0.6769" stop-color="#ff5f00"/><stop offset="0.855" stop-color="#ff7400"/><stop offset="1" stop-color="#ff9000"/></linearGradient><linearGradient id="b16"><stop offset="0" stop-color="#0000ff"/><stop offset="0.0193" stop-color="#0000ff"/><stop offset="0.02524" stop-color="#0091ff"/><stop offset="0.0282" stop-color="#00cdff"/><stop offset="0.03117" stop-color="#01fffe"/><stop offset="0.03414" stop-color="#1bffdd"/><stop offset="0.04008" stop-color="#47ffa8"/><stop offset="0.0475" stop-color="#70ff76"/><stop offset="0.05196" stop-color="#89ff61"/><stop offset="0.06235" stop-color="#b7ff3c"/><stop offset="0.07125" stop-color="#d4ff24"/><stop offset="0.08016" stop-color="#ebff11"/><stop offset="0.08907" stop-color="#fdff02"/><stop offset="0.09204" stop-color="#fffa00"/><stop offset="0.1069" stop-color="#ffdb00"/><stop offset="0.1277" stop-color="#ffbc00"/><stop offset="0.1484" stop-color="#ffa600"/><stop offset="0.1781" stop-color="#ff9000"/><stop offset="0.2494" stop-color="#ff7200"/><stop offset="0.3563" stop-color="#ff5f00"/><stop offset="0.4513" stop-color="#ff5900"/><stop offset="0.6175" stop-color="#ff5c00"/><stop offset="0.8075" stop-color="#ff7000"/><stop offset="1" stop-color="#ff9500"/></linearGradient><linearGradient id="b17"><stop offset="0" stop-color="#0000ff"/><stop offset="0.01781" stop-color="#0000ff"/><stop offset="0.0193" stop-color="#0009ff"/><stop offset="0.02078" stop-color="#0036ff"/><stop offset="0.02375" stop-color="#0085ff"/><stop offset="0.02672" stop-color="#00c6ff"/><stop offset="0.02969" stop-color="#00fdff"/><stop offset="0.03117" stop-color="#0effee"/><stop offset="0.03414" stop-color="#28ffce"/><stop offset="0.04008" stop-color="#52ff9a"/><stop offset="0.04602" stop-color="#75ff72"/><stop offset="0.05047" stop-color="#8eff5d"/><stop offset="0.05789" stop-color="#b1ff41"/><stop offset="0.06532" stop-color="#ccff2b"/><stop offset="0.07719" stop-color="#edff0f"/><stop offset="0.0861" stop-color="#ffff00"/><stop offset="0.1009" stop-color="#ffdd00"/><stop offset="0.1277" stop-color="#ffb500"/><stop offset="0.1752" stop-color="#ff8d00"/><stop offset="0.2435" stop-color="#ff7100"/><stop offset="0.3444" stop-color="#ff5f00"/><stop offset="0.5225" stop-color="#ff5900"/><stop offset="0.6532" stop-color="#ff6000"/><stop offset="0.8788" stop-color="#ff8000"/><stop offset="1" stop-color="#ff9c00"/></linearGradient><linearGradient id="b18"><stop offset="0" stop-color="#0000ff"/><stop offset="0.01781" stop-color="#0000ff"/><stop offset="0.0193" stop-color="#001cff"/><stop offset="0.02227" stop-color="#0074ff"/><stop offset="0.02375" stop-color="#009aff"/><stop offset="0.02672" stop-color="#00dcff"/><stop offset="0.0282" stop-color="#00f8ff"/><stop offset="0.02969" stop-color="#0cfff1"/><stop offset="0.03266" stop-color="#28ffce"/><stop offset="0.0386" stop-color="#55ff97"/><stop offset="0.04305" stop-color="#6fff77"/><stop offset="0.04899" stop-color="#93ff59"/><stop offset="0.05492" stop-color="#b0ff42"/><stop offset="0.06532" stop-color="#d6ff22"/><stop offset="0.08165" stop-color="#ffff00"/><stop offset="0.1009" stop-color="#ffd400"/><stop offset="0.1217" stop-color="#ffb500"/><stop offset="0.1395" stop-color="#ffa200"/><stop offset="0.1692" stop-color="#ff8c00"/><stop offset="0.2375" stop-color="#ff7000"/><stop offset="0.3503" stop-color="#ff5d00"/><stop offset="0.5107" stop-color="#ff5900"/><stop offset="0.6532" stop-color="#ff6200"/><stop offset="0.8432" stop-color="#ff7e00"/><stop offset="1" stop-color="#ffa300"/></linearGradient><linearGradient id="b19"><stop offset="0" stop-color="#0000ff"/><stop offset="0.01781" stop-color="#0000ff"/><stop offset="0.02078" stop-color="#005dff"/><stop offset="0.02375" stop-color="#00aeff"/><stop offset="0.02672" stop-color="#00f1ff"/><stop offset="0.0282" stop-color="#09fff4"/><stop offset="0.03117" stop-color="#27ffcf"/><stop offset="0.03563" stop-color="#4cffa2"/><stop offset="0.04008" stop-color="#6aff7d"/><stop offset="0.04453" stop-color="#87ff63"/><stop offset="0.05047" stop-color="#a8ff48"/><stop offset="0.05789" stop-color="#c8ff2e"/><stop offset="0.07125" stop-color="#f1ff0c"/><stop offset="0.07868" stop-color="#fffc00"/><stop offset="0.09797" stop-color="#ffd000"/><stop offset="0.1188" stop-color="#ffb100"/><stop offset="0.1395" stop-color="#ff9c00"/><stop offset="0.1663" stop-color="#ff8900"/><stop offset="0.2375" stop-color="#ff6d00"/><stop offset="0.3206" stop-color="#ff5f00"/><stop offset="0.475" stop-color="#ff5900"/><stop offset="0.665" stop-color="#ff6600"/><stop offset="0.8075" stop-color="#ff7c00"/><stop offset="1" stop-color="#ffac00"/></linearGradient><linearGradient id="b20"><stop offset="0" stop-color="#0000ff"/><stop offset="0.01633" stop-color="#0000ff"/><stop offset="0.01781" stop-color="#0005ff"/><stop offset="0.0193" stop-color="#003dff"/><stop offset="0.02227" stop-color="#009aff"/><stop offset="0.02524" stop-color="#00e5ff"/><stop offset="0.02672" stop-color="#04fffa"/><stop offset="0.03117" stop-color="#33ffc0"/><stop offset="0.03563" stop-color="#58ff93"/><stop offset="0.0386" stop-color="#6cff7a"/><stop offset="0.04453" stop-color="#95ff58"/><stop offset="0.05344" stop-color="#c2ff33"/><stop offset="0.05789" stop-color="#d3ff24"/><stop offset="0.06532" stop-color="#ebff11"/><stop offset="0.07422" stop-color="#fffd00"/><stop offset="0.09204" stop-color="#ffd100"/><stop offset="0.1158" stop-color="#ffad00"/><stop offset="0.1395" stop-color="#ff9600"/><stop offset="0.1633" stop-color="#ff8600"/><stop offset="0.2316" stop-color="#ff6c00"/><stop offset="0.3444" stop-color="#ff5c00"/><stop offset="0.5107" stop-color="#ff5b00"/><stop offset="0.6769" stop-color="#ff6b00"/><stop offset="0.8313" stop-color="#ff8700"/><stop offset="1" stop-color="#ffb600"/></linearGradient><linearGradient id="b21"><stop offset="0" stop-color="#0000ff"/><stop offset="0.01633" stop-color="#0000ff"/><stop offset="0.01781" stop-color="#000dff"/><stop offset="0.0193" stop-color="#0048ff"/><stop offset="0.02078" stop-color="#007cff"/><stop offset="0.02375" stop-color="#00d3ff"/><stop offset="0.02524" stop-color="#00f7ff"/><stop offset="0.02672" stop-color="#0fffed"/><stop offset="0.02969" stop-color="#31ffc3"/><stop offset="0.03414" stop-color="#59ff92"/><stop offset="0.03711" stop-color="#6eff78"/><stop offset="0.04156" stop-color="#90ff5c"/><stop offset="0.04602" stop-color="#abff46"/><stop offset="0.05344" stop-color="#ceff29"/><stop offset="0.06383" stop-color="#f1ff0c"/><stop offset="0.06977" stop-color="#fffe00"/><stop offset="0.08461" stop-color="#ffd600"/><stop offset="0.1009" stop-color="#ffb900"/><stop offset="0.1277" stop-color="#ff9a00"/><stop offset="0.1484" stop-color="#ff8a00"/><stop offset="0.1841" stop-color="#ff7800"/><stop offset="0.2227" stop-color="#ff6c00"/><stop offset="0.3385" stop-color="#ff5c00"/><stop offset="0.5107" stop-color="#ff5d00"/><stop offset="0.6888" stop-color="#ff7100"/><stop offset="0.8669" stop-color="#ff9800"/><stop offset="1" stop-color="#ffc200"/></linearGradient><linearGradient id="b22"><stop offset="0" stop-color="#0000ff"/><stop offset="0.01633" stop-color="#0000ff"/><stop offset="0.01781" stop-color="#000eff"/><stop offset="0.0193" stop-color="#004dff"/><stop offset="0.02078" stop-color="#0084ff"/><stop offset="0.02375" stop-color="#00dfff"/><stop offset="0.02524" stop-color="#04fffa"/><stop offset="0.0282" stop-color="#2affcb"/><stop offset="0.03266" stop-color="#57ff94"/><stop offset="0.03563" stop-color="#6fff77"/><stop offset="0.0386" stop-color="#88ff63"/><stop offset="0.04453" stop-color="#afff42"/><stop offset="0.05047" stop-color="#cdff29"/><stop offset="0.06532" stop-color="#ffff00"/><stop offset="0.07571" stop-color="#ffe000"/><stop offset="0.09501" stop-color="#ffb900"/><stop offset="0.1217" stop-color="#ff9900"/><stop offset="0.1455" stop-color="#ff8700"/><stop offset="0.1781" stop-color="#ff7700"/><stop offset="0.2316" stop-color="#ff6800"/><stop offset="0.3385" stop-color="#ff5c00"/><stop offset="0.475" stop-color="#ff5d00"/><stop offset="0.57" stop-color="#ff6500"/><stop offset="0.6888" stop-color="#ff7700"/><stop offset="0.8313" stop-color="#ff9800"/><stop offset="1" stop-color="#ffd100"/></linearGradient><linearGradient id="b23"><stop offset="0" stop-color="#0000ff"/><stop offset="0.01633" stop-color="#0000ff"/><stop offset="0.01781" stop-color="#0004ff"/><stop offset="0.0193" stop-color="#0047ff"/><stop offset="0.02078" stop-color="#0083ff"/><stop offset="0.02227" stop-color="#00b7ff"/><stop offset="0.02375" stop-color="#00e5ff"/><stop offset="0.02524" stop-color="#09fff4"/><stop offset="0.0282" stop-color="#32ffc2"/><stop offset="0.03117" stop-color="#52ff9a"/><stop offset="0.03414" stop-color="#6cff7a"/><stop offset="0.0386" stop-color="#93ff59"/><stop offset="0.04453" stop-color="#bbff38"/><stop offset="0.05047" stop-color="#d8ff20"/><stop offset="0.06235" stop-color="#fffd00"/><stop offset="0.07571" stop-color="#ffd500"/><stop offset="0.08907" stop-color="#ffba00"/><stop offset="0.1039" stop-color="#ffa500"/><stop offset="0.1366" stop-color="#ff8800"/><stop offset="0.1633" stop-color="#ff7a00"/><stop offset="0.2197" stop-color="#ff6900"/><stop offset="0.3325" stop-color="#ff5d00"/><stop offset="0.5107" stop-color="#ff6300"/><stop offset="0.6769" stop-color="#ff7c00"/><stop offset="0.8313" stop-color="#ffa400"/><stop offset="1" stop-color="#ffe400"/></linearGradient><linearGradient id="b24"><stop offset="0" stop-color="#0000ff"/><stop offset="0.01781" stop-color="#0000ff"/><stop offset="0.0193" stop-color="#0033ff"/><stop offset="0.02078" stop-color="#0074ff"/><stop offset="0.02227" stop-color="#00aeff"/><stop offset="0.02375" stop-color="#00e0ff"/><stop offset="0.02524" stop-color="#08fff5"/><stop offset="0.0282" stop-color="#34ffbf"/><stop offset="0.03117" stop-color="#56ff95"/><stop offset="0.03414" stop-color="#73ff74"/><stop offset="0.03711" stop-color="#90ff5c"/><stop offset="0.04156" stop-color="#b2ff40"/><stop offset="0.0475" stop-color="#d4ff24"/><stop offset="0.05344" stop-color="#edff0f"/><stop offset="0.05938" stop-color="#fffd00"/><stop offset="0.07422" stop-color="#ffcf00"/><stop offset="0.08907" stop-color="#ffb200"/><stop offset="0.1158" stop-color="#ff9300"/><stop offset="0.1366" stop-color="#ff8400"/><stop offset="0.1692" stop-color="#ff7500"/><stop offset="0.2108" stop-color="#ff6a00"/><stop offset="0.3147" stop-color="#ff5f00"/><stop offset="0.4156" stop-color="#ff6000"/><stop offset="0.5107" stop-color="#ff6800"/><stop offset="0.6532" stop-color="#ff8000"/><stop offset="0.7363" stop-color="#ff9500"/><stop offset="0.8432" stop-color="#ffb800"/><stop offset="1" stop-color="#fffc00"/></linearGradient><linearGradient id="b25"><stop offset="0" stop-color="#0000ff"/><stop offset="0.01781" stop-color="#0000ff"/><stop offset="0.0193" stop-color="#0015ff"/><stop offset="0.02078" stop-color="#005bff"/><stop offset="0.02227" stop-color="#009aff"/><stop offset="0.02375" stop-color="#00d0ff"/><stop offset="0.02524" stop-color="#01fffe"/><stop offset="0.02672" stop-color="#1affdf"/><stop offset="0.02969" stop-color="#44ffab"/><stop offset="0.03266" stop-color="#65ff83"/><stop offset="0.03563" stop-color="#84ff65"/><stop offset="0.0386" stop-color="#a0ff4f"/><stop offset="0.04453" stop-color="#c9ff2d"/><stop offset="0.05196" stop-color="#edff0f"/><stop offset="0.05789" stop-color="#fffc00"/><stop offset="0.07125" stop-color="#ffd000"/><stop offset="0.0861" stop-color="#ffb200"/><stop offset="0.1098" stop-color="#ff9500"/><stop offset="0.1366" stop-color="#ff8200"/><stop offset="0.1663" stop-color="#ff7500"/><stop offset="0.2227" stop-color="#ff6800"/><stop offset="0.3563" stop-color="#ff6100"/><stop offset="0.475" stop-color="#ff6900"/><stop offset="0.6294" stop-color="#ff8300"/><stop offset="0.7957" stop-color="#ffb500"/><stop offset="0.9619" stop-color="#fffe00"/><stop offset="1" stop-color="#f1ff0c"/></linearGradient><linearGradient id="b26"><stop offset="0" stop-color="#0000ff"/><stop offset="0.0193" stop-color="#0000ff"/><stop offset="0.02227" stop-color="#0084ff"/><stop offset="0.02375" stop-color="#00beff"/><stop offset="0.02524" stop-color="#00f1ff"/><stop offset="0.02672" stop-color="#13ffe8"/><stop offset="0.03117" stop-color="#52ff9a"/><stop offset="0.03414" stop-color="#72ff75"/><stop offset="0.03711" stop-color="#92ff5a"/><stop offset="0.04156" stop-color="#b7ff3c"/><stop offset="0.04602" stop-color="#d3ff25"/><stop offset="0.05641" stop-color="#ffff00"/><stop offset="0.0668" stop-color="#ffd900"/><stop offset="0.08313" stop-color="#ffb400"/><stop offset="0.1009" stop-color="#ff9c00"/><stop offset="0.1277" stop-color="#ff8600"/><stop offset="0.1544" stop-color="#ff7900"/><stop offset="0.2078" stop-color="#ff6b00"/><stop offset="0.3028" stop-color="#ff6300"/><stop offset="0.4335" stop-color="#ff6800"/><stop offset="0.6057" stop-color="#ff8400"/><stop offset="0.76" stop-color="#ffb200"/><stop offset="0.855" stop-color="#ffd900"/><stop offset="0.9263" stop-color="#fffc00"/><stop offset="1" stop-color="#e4ff16"/></linearGradient><linearGradient id="b27"><stop offset="0" stop-color="#0000ff"/><stop offset="0.0193" stop-color="#0000ff"/><stop offset="0.02078" stop-color="#001fff"/><stop offset="0.02227" stop-color="#0065ff"/><stop offset="0.02375" stop-color="#00a3ff"/><stop offset="0.02524" stop-color="#00daff"/><stop offset="0.02672" stop-color="#07fff7"/><stop offset="0.02969" stop-color="#37ffbc"/><stop offset="0.03266" stop-color="#5dff8d"/><stop offset="0.03414" stop-color="#6cff7a"/><stop offset="0.03711" stop-color="#8eff5e"/><stop offset="0.04156" stop-color="#b5ff3d"/><stop offset="0.04602" stop-color="#d2ff25"/><stop offset="0.05047" stop-color="#e9ff12"/><stop offset="0.05641" stop-color="#fffe00"/><stop offset="0.0668" stop-color="#ffd700"/><stop offset="0.08461" stop-color="#ffb000"/><stop offset="0.1069" stop-color="#ff9500"/><stop offset="0.1306" stop-color="#ff8400"/><stop offset="0.1752" stop-color="#ff7300"/><stop offset="0.2167" stop-color="#ff6b00"/><stop offset="0.3503" stop-color="#ff6600"/><stop offset="0.4869" stop-color="#ff7300"/><stop offset="0.6413" stop-color="#ff9500"/><stop offset="0.76" stop-color="#ffbe00"/><stop offset="0.8907" stop-color="#fffb00"/><stop offset="0.9025" stop-color="#fdff01"/><stop offset="1" stop-color="#d4ff23"/></linearGradient><linearGradient id="b28"><stop offset="0" stop-color="#0000ff"/><stop offset="0.02078" stop-color="#0000ff"/><stop offset="0.02227" stop-color="#003bff"/><stop offset="0.02375" stop-color="#007eff"/><stop offset="0.02524" stop-color="#00b9ff"/><stop offset="0.02672" stop-color="#00edff"/><stop offset="0.0282" stop-color="#11ffea"/><stop offset="0.03117" stop-color="#3fffb2"/><stop offset="0.03414" stop-color="#64ff85"/><stop offset="0.0386" stop-color="#95ff58"/><stop offset="0.04156" stop-color="#b0ff42"/><stop offset="0.04602" stop-color="#cfff28"/><stop offset="0.05047" stop-color="#e7ff14"/><stop offset="0.05641" stop-color="#ffff00"/><stop offset="0.06829" stop-color="#ffd300"/><stop offset="0.08313" stop-color="#ffb200"/><stop offset="0.09501" stop-color="#ffa100"/><stop offset="0.1128" stop-color="#ff9000"/><stop offset="0.1336" stop-color="#ff8300"/><stop offset="0.1722" stop-color="#ff7500"/><stop offset="0.2672" stop-color="#ff6900"/><stop offset="0.4156" stop-color="#ff6f00"/><stop offset="0.5463" stop-color="#ff8500"/><stop offset="0.6413" stop-color="#ff9f00"/><stop offset="0.7244" stop-color="#ffbd00"/><stop offset="0.855" stop-color="#fffb00"/><stop offset="0.8907" stop-color="#f4ff09"/><stop offset="1" stop-color="#c2ff32"/></linearGradient><linearGradient id="b29"><stop offset="0" stop-color="#0000ff"/><stop offset="0.02078" stop-color="#0000ff"/><stop offset="0.02227" stop-color="#0005ff"/><stop offset="0.02375" stop-color="#004bff"/><stop offset="0.02524" stop-color="#008aff"/><stop offset="0.0282" stop-color="#00f6ff"/><stop offset="0.02969" stop-color="#15ffe5"/><stop offset="0.03414" stop-color="#55ff96"/><stop offset="0.03711" stop-color="#77ff70"/><stop offset="0.0386" stop-color="#88ff62"/><stop offset="0.04305" stop-color="#b2ff40"/><stop offset="0.04602" stop-color="#c8ff2e"/><stop offset="0.05196" stop-color="#e9ff12"/><stop offset="0.05789" stop-color="#fffd00"/><stop offset="0.06977" stop-color="#ffd100"/><stop offset="0.0861" stop-color="#ffaf00"/><stop offset="0.1039" stop-color="#ff9900"/><stop offset="0.1277" stop-color="#ff8800"/><stop offset="0.1663" stop-color="#ff7900"/><stop offset="0.2078" stop-color="#ff7100"/><stop offset="0.3147" stop-color="#ff6d00"/><stop offset="0.4216" stop-color="#ff7600"/><stop offset="0.5819" stop-color="#ff9800"/><stop offset="0.7244" stop-color="#ffcd00"/><stop offset="0.8194" stop-color="#fffd00"/><stop offset="0.9025" stop-color="#ddff1c"/><stop offset="1" stop-color="#acff45"/></linearGradient><linearGradient id="b30"><stop offset="0" stop-color="#0000ff"/><stop offset="0.02227" stop-color="#0000ff"/><stop offset="0.02375" stop-color="#0008ff"/><stop offset="0.02524" stop-color="#004cff"/><stop offset="0.02672" stop-color="#0089ff"/><stop offset="0.02969" stop-color="#00f2ff"/><stop offset="0.03117" stop-color="#13ffe8"/><stop offset="0.03414" stop-color="#3fffb1"/><stop offset="0.03711" stop-color="#63ff85"/><stop offset="0.04156" stop-color="#94ff58"/><stop offset="0.04602" stop-color="#bbff39"/><stop offset="0.04899" stop-color="#cfff28"/><stop offset="0.05492" stop-color="#eeff0e"/><stop offset="0.05938" stop-color="#ffff00"/><stop offset="0.07125" stop-color="#ffd300"/><stop offset="0.08313" stop-color="#ffb800"/><stop offset="0.09204" stop-color="#ffaa00"/><stop offset="0.1128" stop-color="#ff9500"/><stop offset="0.1366" stop-color="#ff8700"/><stop offset="0.1692" stop-color="#ff7c00"/><stop offset="0.2613" stop-color="#ff7200"/><stop offset="0.3325" stop-color="#ff7400"/><stop offset="0.4156" stop-color="#ff7d00"/><stop offset="0.5463" stop-color="#ff9a00"/><stop offset="0.665" stop-color="#ffc500"/><stop offset="0.7719" stop-color="#fffa00"/><stop offset="0.7838" stop-color="#fdff01"/><stop offset="0.855" stop-color="#deff1c"/><stop offset="1" stop-color="#91ff5b"/></linearGradient><linearGradient id="b31"><stop offset="0" stop-color="#0000ff"/><stop offset="0.02524" stop-color="#0000ff"/><stop offset="0.0282" stop-color="#0077ff"/><stop offset="0.02969" stop-color="#00adff"/><stop offset="0.03117" stop-color="#00deff"/><stop offset="0.03266" stop-color="#07fff6"/><stop offset="0.03563" stop-color="#34ffbf"/><stop offset="0.0386" stop-color="#59ff92"/><stop offset="0.04156" stop-color="#79ff6f"/><stop offset="0.04453" stop-color="#98ff56"/><stop offset="0.04899" stop-color="#bcff38"/><stop offset="0.05492" stop-color="#dfff1a"/><stop offset="0.06086" stop-color="#f9ff05"/><stop offset="0.06383" stop-color="#fffa00"/><stop offset="0.07125" stop-color="#ffde00"/><stop offset="0.08461" stop-color="#ffbe00"/><stop offset="0.09797" stop-color="#ffaa00"/><stop offset="0.1247" stop-color="#ff9300"/><stop offset="0.1544" stop-color="#ff8600"/><stop offset="0.19" stop-color="#ff7e00"/><stop offset="0.2969" stop-color="#ff7a00"/><stop offset="0.4335" stop-color="#ff8b00"/><stop offset="0.5225" stop-color="#ffa200"/><stop offset="0.6294" stop-color="#ffca00"/><stop offset="0.7363" stop-color="#fdff02"/><stop offset="0.8669" stop-color="#beff36"/><stop offset="1" stop-color="#6fff77"/></linearGradient><linearGradient id="b32"><stop offset="0" stop-color="#0000ff"/><stop offset="0.02672" stop-color="#0000ff"/><stop offset="0.0282" stop-color="#0014ff"/><stop offset="0.03117" stop-color="#0085ff"/><stop offset="0.03414" stop-color="#00e3ff"/><stop offset="0.03563" stop-color="#08fff6"/><stop offset="0.0386" stop-color="#32ffc2"/><stop offset="0.04156" stop-color="#55ff97"/><stop offset="0.04453" stop-color="#72ff75"/><stop offset="0.0475" stop-color="#90ff5c"/><stop offset="0.05196" stop-color="#b4ff3e"/><stop offset="0.05789" stop-color="#d7ff21"/><stop offset="0.06383" stop-color="#f1ff0c"/><stop offset="0.06829" stop-color="#fffe00"/><stop offset="0.07868" stop-color="#ffdb00"/><stop offset="0.09204" stop-color="#ffbf00"/><stop offset="0.1098" stop-color="#ffa900"/><stop offset="0.1306" stop-color="#ff9a00"/><stop offset="0.1633" stop-color="#ff8d00"/><stop offset="0.193" stop-color="#ff8700"/><stop offset="0.2791" stop-color="#ff8400"/><stop offset="0.386" stop-color="#ff9000"/><stop offset="0.4988" stop-color="#ffad00"/><stop offset="0.5938" stop-color="#ffd300"/><stop offset="0.6769" stop-color="#ffff00"/><stop offset="0.7719" stop-color="#d2ff25"/><stop offset="0.8432" stop-color="#aaff46"/><stop offset="0.9382" stop-color="#6eff78"/><stop offset="1" stop-color="#4cffa2"/></linearGradient><linearGradient id="b33"><stop offset="0" stop-color="#0000ff"/><stop offset="0.02969" stop-color="#0000ff"/><stop offset="0.03117" stop-color="#000aff"/><stop offset="0.03414" stop-color="#0071ff"/><stop offset="0.03563" stop-color="#009fff"/><stop offset="0.0386" stop-color="#00f0ff"/><stop offset="0.04008" stop-color="#0dffef"/><stop offset="0.04453" stop-color="#42ffad"/><stop offset="0.0475" stop-color="#5fff8a"/><stop offset="0.05047" stop-color="#7aff6e"/><stop offset="0.05344" stop-color="#93ff59"/><stop offset="0.05789" stop-color="#b3ff3f"/><stop offset="0.06532" stop-color="#d9ff1f"/><stop offset="0.07274" stop-color="#f4ff09"/><stop offset="0.07719" stop-color="#fffe00"/><stop offset="0.08461" stop-color="#ffe700"/><stop offset="0.09501" stop-color="#ffd100"/><stop offset="0.1098" stop-color="#ffbc00"/><stop offset="0.1217" stop-color="#ffb100"/><stop offset="0.1633" stop-color="#ff9c00"/><stop offset="0.2227" stop-color="#ff9300"/><stop offset="0.3147" stop-color="#ff9700"/><stop offset="0.4156" stop-color="#ffab00"/><stop offset="0.5225" stop-color="#ffd100"/><stop offset="0.6057" stop-color="#fffc00"/><stop offset="0.6888" stop-color="#dbff1e"/><stop offset="0.7719" stop-color="#acff45"/><stop offset="0.8432" stop-color="#7dff6b"/><stop offset="0.8907" stop-color="#60ff89"/><stop offset="1" stop-color="#1effda"/></linearGradient><linearGradient id="b34"><stop offset="0" stop-color="#0000ff"/><stop offset="0.03414" stop-color="#0000ff"/><stop offset="0.03563" stop-color="#0005ff"/><stop offset="0.0386" stop-color="#005fff"/><stop offset="0.04305" stop-color="#00d2ff"/><stop offset="0.04453" stop-color="#00f3ff"/><stop offset="0.04602" stop-color="#0bfff2"/><stop offset="0.05047" stop-color="#39ffb8"/><stop offset="0.05344" stop-color="#53ff99"/><stop offset="0.05789" stop-color="#74ff73"/><stop offset="0.06235" stop-color="#94ff58"/><stop offset="0.07125" stop-color="#c3ff32"/><stop offset="0.07868" stop-color="#deff1b"/><stop offset="0.0861" stop-color="#f2ff0b"/><stop offset="0.09204" stop-color="#feff01"/><stop offset="0.09501" stop-color="#fff900"/><stop offset="0.1069" stop-color="#ffe200"/><stop offset="0.1217" stop-color="#ffcf00"/><stop offset="0.1514" stop-color="#ffba00"/><stop offset="0.2049" stop-color="#ffac00"/><stop offset="0.2613" stop-color="#ffab00"/><stop offset="0.3325" stop-color="#ffb400"/><stop offset="0.386" stop-color="#ffc100"/><stop offset="0.4335" stop-color="#ffd100"/><stop offset="0.5344" stop-color="#fdff01"/><stop offset="0.6294" stop-color="#d0ff27"/><stop offset="0.7244" stop-color="#96ff57"/><stop offset="0.7838" stop-color="#6cff7a"/><stop offset="0.9501" stop-color="#02fffd"/><stop offset="1" stop-color="#00c8ff"/></linearGradient><linearGradient id="b35"><stop offset="0" stop-color="#0000ff"/><stop offset="0.04156" stop-color="#0000ff"/><stop offset="0.04305" stop-color="#000dff"/><stop offset="0.04602" stop-color="#0055ff"/><stop offset="0.04899" stop-color="#0096ff"/><stop offset="0.05196" stop-color="#00d0ff"/><stop offset="0.05492" stop-color="#02fffd"/><stop offset="0.05938" stop-color="#28ffcd"/><stop offset="0.06829" stop-color="#62ff86"/><stop offset="0.07422" stop-color="#82ff67"/><stop offset="0.08165" stop-color="#a4ff4b"/><stop offset="0.09204" stop-color="#c6ff2f"/><stop offset="0.1039" stop-color="#e0ff1a"/><stop offset="0.1217" stop-color="#f9ff05"/><stop offset="0.1306" stop-color="#fffc00"/><stop offset="0.1455" stop-color="#ffee00"/><stop offset="0.1692" stop-color="#ffe000"/><stop offset="0.2049" stop-color="#ffd600"/><stop offset="0.2494" stop-color="#ffd400"/><stop offset="0.3385" stop-color="#ffe300"/><stop offset="0.4097" stop-color="#fffd00"/><stop offset="0.4691" stop-color="#eaff11"/><stop offset="0.5819" stop-color="#afff42"/><stop offset="0.665" stop-color="#76ff71"/><stop offset="0.7363" stop-color="#48ffa7"/><stop offset="0.8313" stop-color="#05fff9"/><stop offset="0.8432" stop-color="#00f9ff"/><stop offset="1" stop-color="#0033ff"/></linearGradient><linearGradient id="b36"><stop offset="0" stop-color="#0000ff"/><stop offset="0.05492" stop-color="#0000ff"/><stop offset="0.06235" stop-color="#0077ff"/><stop offset="0.0668" stop-color="#00b5ff"/><stop offset="0.07274" stop-color="#00fbff"/><stop offset="0.07422" stop-color="#07fff7"/><stop offset="0.08313" stop-color="#35ffbe"/><stop offset="0.09204" stop-color="#57ff94"/><stop offset="0.09797" stop-color="#69ff7e"/><stop offset="0.1069" stop-color="#83ff67"/><stop offset="0.1247" stop-color="#a8ff48"/><stop offset="0.1514" stop-color="#c7ff2f"/><stop offset="0.1781" stop-color="#d7ff21"/><stop offset="0.2167" stop-color="#e1ff19"/><stop offset="0.2553" stop-color="#e2ff18"/><stop offset="0.2969" stop-color="#ddff1c"/><stop offset="0.3681" stop-color="#c9ff2d"/><stop offset="0.4335" stop-color="#acff45"/><stop offset="0.4988" stop-color="#85ff65"/><stop offset="0.5344" stop-color="#6cff7a"/><stop offset="0.5938" stop-color="#47ffa8"/><stop offset="0.6888" stop-color="#01fffe"/><stop offset="0.7244" stop-color="#00d2ff"/><stop offset="0.8669" stop-color="#000cff"/><stop offset="0.8788" stop-color="#0000ff"/><stop offset="1" stop-color="#0000ff"/></linearGradient><linearGradient id="b37"><stop offset="0" stop-color="#0000ff"/><stop offset="0.0861" stop-color="#0000ff"/><stop offset="0.08758" stop-color="#0003ff"/><stop offset="0.09501" stop-color="#0042ff"/><stop offset="0.1009" stop-color="#006dff"/><stop offset="0.1128" stop-color="#00b3ff"/><stop offset="0.1277" stop-color="#00f4ff"/><stop offset="0.1306" stop-color="#00feff"/><stop offset="0.1336" stop-color="#05fff8"/><stop offset="0.1574" stop-color="#28ffcd"/><stop offset="0.187" stop-color="#41ffaf"/><stop offset="0.2227" stop-color="#4eff9f"/><stop offset="0.2553" stop-color="#50ff9c"/><stop offset="0.285" stop-color="#4effa0"/><stop offset="0.3325" stop-color="#41ffaf"/><stop offset="0.3919" stop-color="#27ffcf"/><stop offset="0.4572" stop-color="#00fdff"/><stop offset="0.5344" stop-color="#009bff"/><stop offset="0.6413" stop-color="#0000ff"/><stop offset="1" stop-color="#0000ff"/></linearGradient><linearGradient id="b38"><stop offset="0" stop-color="#0000ff"/><stop offset="1" stop-color="#0000ff"/></linearGradient><linearGradient id="b39"><stop offset="0" stop-color="#0000ff"/><stop offset="1" stop-color="#0000ff"/></linearGradient><linearGradient id="b40"><stop offset="0" stop-color="#0000ff"/><stop offset="0.1811" stop-color="#0000ff"/><stop offset="0.1989" stop-color="#0024ff"/><stop offset="0.2167" stop-color="#003dff"/><stop offset="0.2286" stop-color="#0047ff"/><stop offset="0.2494" stop-color="#004eff"/><stop offset="0.2672" stop-color="#004cff"/><stop offset="0.291" stop-color="#0040ff"/><stop offset="0.3088" stop-color="#0030ff"/><stop offset="0.3444" stop-color="#0001ff"/><stop offset="0.3503" stop-color="#0000ff"/><stop offset="1" stop-color="#0000ff"/></linearGradient><linearGradient id="b41"><stop offset="0" stop-color="#0000ff"/><stop offset="0.08165" stop-color="#0000ff"/><stop offset="0.08313" stop-color="#0010ff"/><stop offset="0.08758" stop-color="#0057ff"/><stop offset="0.09204" stop-color="#0092ff"/><stop offset="0.09797" stop-color="#00d2ff"/><stop offset="0.1009" stop-color="#00edff"/><stop offset="0.1039" stop-color="#03fffb"/><stop offset="0.1128" stop-color="#26ffd0"/><stop offset="0.1247" stop-color="#48ffa7"/><stop offset="0.1395" stop-color="#64ff84"/><stop offset="0.1514" stop-color="#75ff72"/><stop offset="0.1752" stop-color="#8eff5e"/><stop offset="0.1959" stop-color="#9aff54"/><stop offset="0.2494" stop-color="#a3ff4c"/><stop offset="0.3147" stop-color="#95ff58"/><stop offset="0.386" stop-color="#6fff77"/><stop offset="0.4394" stop-color="#4cffa1"/><stop offset="0.475" stop-color="#2fffc5"/><stop offset="0.5225" stop-color="#00ffff"/><stop offset="0.5819" stop-color="#0082ff"/><stop offset="0.6294" stop-color="#0007ff"/><stop offset="0.6413" stop-color="#0000ff"/><stop offset="1" stop-color="#0000ff"/></linearGradient><linearGradient id="b42"><stop offset="0" stop-color="#0000ff"/><stop offset="0.05938" stop-color="#0000ff"/><stop offset="0.06235" stop-color="#0050ff"/><stop offset="0.06532" stop-color="#0096ff"/><stop offset="0.06829" stop-color="#00d0ff"/><stop offset="0.07125" stop-color="#02fffd"/><stop offset="0.07422" stop-color="#1bffde"/><stop offset="0.08016" stop-color="#43ffad"/><stop offset="0.08461" stop-color="#5aff90"/><stop offset="0.09204" stop-color="#7bff6d"/><stop offset="0.09797" stop-color="#93ff5a"/><stop offset="0.1069" stop-color="#adff44"/><stop offset="0.1247" stop-color="#cfff27"/><stop offset="0.1514" stop-color="#ebff11"/><stop offset="0.19" stop-color="#fcff03"/><stop offset="0.2731" stop-color="#ffff00"/><stop offset="0.3206" stop-color="#f7ff07"/><stop offset="0.38" stop-color="#e4ff16"/><stop offset="0.4453" stop-color="#c5ff30"/><stop offset="0.4988" stop-color="#a2ff4d"/><stop offset="0.57" stop-color="#66ff81"/><stop offset="0.6175" stop-color="#3effb3"/><stop offset="0.6769" stop-color="#00feff"/><stop offset="0.7244" stop-color="#009bff"/><stop offset="0.7482" stop-color="#0063ff"/><stop offset="0.7838" stop-color="#0007ff"/><stop offset="0.7957" stop-color="#0000ff"/><stop offset="1" stop-color="#0000ff"/></linearGradient><linearGradient id="b43"><stop offset="0" stop-color="#0000ff"/><stop offset="0.0475" stop-color="#0000ff"/><stop offset="0.04899" stop-color="#0019ff"/><stop offset="0.05196" stop-color="#007fff"/><stop offset="0.05492" stop-color="#00d1ff"/><stop offset="0.05641" stop-color="#00f4ff"/><stop offset="0.05789" stop-color="#0cfff0"/><stop offset="0.06235" stop-color="#3bffb7"/><stop offset="0.0668" stop-color="#5eff8c"/><stop offset="0.07125" stop-color="#7cff6c"/><stop offset="0.07719" stop-color="#9fff4f"/><stop offset="0.08313" stop-color="#baff39"/><stop offset="0.09204" stop-color="#d7ff21"/><stop offset="0.1009" stop-color="#ebff11"/><stop offset="0.1128" stop-color="#feff01"/><stop offset="0.1395" stop-color="#ffdf00"/><stop offset="0.1574" stop-color="#ffd300"/><stop offset="0.2167" stop-color="#ffc300"/><stop offset="0.2731" stop-color="#ffc400"/><stop offset="0.3444" stop-color="#ffd200"/><stop offset="0.386" stop-color="#ffe000"/><stop offset="0.4513" stop-color="#ffff00"/><stop offset="0.5463" stop-color="#cfff28"/><stop offset="0.6294" stop-color="#92ff5a"/><stop offset="0.6888" stop-color="#5eff8b"/><stop offset="0.7363" stop-color="#34ffbf"/><stop offset="0.7838" stop-color="#03fffb"/><stop offset="0.7957" stop-color="#00eeff"/><stop offset="0.8432" stop-color="#008dff"/><stop offset="0.9025" stop-color="#0000ff"/><stop offset="1" stop-color="#0000ff"/></linearGradient><linearGradient id="b44"><stop offset="0" stop-color="#0000ff"/><stop offset="0.04156" stop-color="#0000ff"/><stop offset="0.04453" stop-color="#007aff"/><stop offset="0.04602" stop-color="#00aeff"/><stop offset="0.0475" stop-color="#00dcff"/><stop offset="0.04899" stop-color="#03fffb"/><stop offset="0.05196" stop-color="#2cffc9"/><stop offset="0.05641" stop-color="#5bff8f"/><stop offset="0.05938" stop-color="#74ff73"/><stop offset="0.06383" stop-color="#98ff55"/><stop offset="0.06977" stop-color="#bcff37"/><stop offset="0.07719" stop-color="#dcff1d"/><stop offset="0.0861" stop-color="#f6ff08"/><stop offset="0.09204" stop-color="#fffa00"/><stop offset="0.1009" stop-color="#ffe600"/><stop offset="0.1158" stop-color="#ffcf00"/><stop offset="0.1484" stop-color="#ffb500"/><stop offset="0.187" stop-color="#ffa800"/><stop offset="0.2494" stop-color="#ffa300"/><stop offset="0.3028" stop-color="#ffa700"/><stop offset="0.3919" stop-color="#ffba00"/><stop offset="0.475" stop-color="#ffda00"/><stop offset="0.5344" stop-color="#fffb00"/><stop offset="0.5463" stop-color="#fdff02"/><stop offset="0.6294" stop-color="#cfff28"/><stop offset="0.7007" stop-color="#9cff52"/><stop offset="0.7363" stop-color="#7dff6b"/><stop offset="0.7957" stop-color="#4cffa2"/><stop offset="0.8669" stop-color="#08fff5"/><stop offset="0.8788" stop-color="#00f8ff"/><stop offset="0.8907" stop-color="#00e3ff"/><stop offset="0.9501" stop-color="#006cff"/><stop offset="0.9976" stop-color="#0000ff"/><stop offset="1" stop-color="#0000ff"/></linearGradient><linearGradient id="b45"><stop offset="0" stop-color="#0000ff"/><stop offset="0.03711" stop-color="#0000ff"/><stop offset="0.04008" stop-color="#0088ff"/><stop offset="0.04156" stop-color="#00c1ff"/><stop offset="0.04305" stop-color="#00f2ff"/><stop offset="0.04453" stop-color="#12ffe9"/><stop offset="0.0475" stop-color="#3cffb5"/><stop offset="0.05047" stop-color="#5eff8c"/><stop offset="0.05344" stop-color="#7bff6d"/><stop offset="0.05641" stop-color="#96ff56"/><stop offset="0.06086" stop-color="#b7ff3c"/><stop offset="0.06532" stop-color="#d0ff27"/><stop offset="0.07125" stop-color="#e9ff12"/><stop offset="0.07868" stop-color="#fffe00"/><stop offset="0.08907" stop-color="#ffe000"/><stop offset="0.1039" stop-color="#ffc500"/><stop offset="0.1188" stop-color="#ffb400"/><stop offset="0.1366" stop-color="#ffa700"/><stop offset="0.1781" stop-color="#ff9700"/><stop offset="0.2613" stop-color="#ff9000"/><stop offset="0.3266" stop-color="#ff9500"/><stop offset="0.4335" stop-color="#ffac00"/><stop offset="0.5225" stop-color="#ffce00"/><stop offset="0.6057" stop-color="#fffc00"/><stop offset="0.6175" stop-color="#fbff03"/><stop offset="0.7007" stop-color="#cdff2a"/><stop offset="0.7957" stop-color="#86ff64"/><stop offset="0.855" stop-color="#55ff96"/><stop offset="0.9501" stop-color="#00ffff"/><stop offset="1" stop-color="#00a5ff"/></linearGradient><linearGradient id="b46"><stop offset="0" stop-color="#0000ff"/><stop offset="0.03266" stop-color="#0000ff"/><stop offset="0.03414" stop-color="#0006ff"/><stop offset="0.03563" stop-color="#0056ff"/><stop offset="0.03711" stop-color="#009aff"/><stop offset="0.0386" stop-color="#00d4ff"/><stop offset="0.04008" stop-color="#04fffa"/><stop offset="0.04305" stop-color="#35ffbe"/><stop offset="0.04602" stop-color="#5aff90"/><stop offset="0.04899" stop-color="#7aff6e"/><stop offset="0.05196" stop-color="#98ff55"/><stop offset="0.05641" stop-color="#bbff39"/><stop offset="0.06086" stop-color="#d5ff23"/><stop offset="0.0668" stop-color="#efff0d"/><stop offset="0.07274" stop-color="#fffb00"/><stop offset="0.08313" stop-color="#ffda00"/><stop offset="0.09501" stop-color="#ffc200"/><stop offset="0.1158" stop-color="#ffa900"/><stop offset="0.1336" stop-color="#ff9c00"/><stop offset="0.1752" stop-color="#ff8c00"/><stop offset="0.2019" stop-color="#ff8700"/><stop offset="0.285" stop-color="#ff8400"/><stop offset="0.3622" stop-color="#ff8b00"/><stop offset="0.4632" stop-color="#ffa100"/><stop offset="0.57" stop-color="#ffc900"/><stop offset="0.665" stop-color="#fffe00"/><stop offset="0.76" stop-color="#cbff2b"/><stop offset="0.8075" stop-color="#abff46"/><stop offset="0.8669" stop-color="#7cff6c"/><stop offset="0.9263" stop-color="#4eff9f"/><stop offset="1" stop-color="#0fffed"/></linearGradient><linearGradient id="b47"><stop offset="0" stop-color="#0000ff"/><stop offset="0.03117" stop-color="#0000ff"/><stop offset="0.03266" stop-color="#0036ff"/><stop offset="0.03414" stop-color="#0082ff"/><stop offset="0.03563" stop-color="#00c2ff"/><stop offset="0.03711" stop-color="#00f9ff"/><stop offset="0.04008" stop-color="#31ffc3"/><stop offset="0.04305" stop-color="#59ff92"/><stop offset="0.04602" stop-color="#7aff6e"/><stop offset="0.04899" stop-color="#99ff54"/><stop offset="0.05344" stop-color="#bdff37"/><stop offset="0.05938" stop-color="#dfff1b"/><stop offset="0.06829" stop-color="#fffc00"/><stop offset="0.07868" stop-color="#ffd900"/><stop offset="0.09501" stop-color="#ffb800"/><stop offset="0.1098" stop-color="#ffa600"/><stop offset="0.1306" stop-color="#ff9600"/><stop offset="0.1692" stop-color="#ff8600"/><stop offset="0.2049" stop-color="#ff7f00"/><stop offset="0.2969" stop-color="#ff7b00"/><stop offset="0.4156" stop-color="#ff8800"/><stop offset="0.5225" stop-color="#ffa300"/><stop offset="0.6057" stop-color="#ffc300"/><stop offset="0.7125" stop-color="#fffe00"/><stop offset="0.8075" stop-color="#cdff2a"/><stop offset="0.8907" stop-color="#93ff59"/><stop offset="0.9382" stop-color="#6dff79"/><stop offset="1" stop-color="#40ffb1"/></linearGradient><linearGradient id="b48"><stop offset="0" stop-color="#0000ff"/><stop offset="0.02969" stop-color="#0000ff"/><stop offset="0.03266" stop-color="#0090ff"/><stop offset="0.03414" stop-color="#00d0ff"/><stop offset="0.03563" stop-color="#04fffa"/><stop offset="0.0386" stop-color="#37ffbb"/><stop offset="0.04008" stop-color="#4cffa2"/><stop offset="0.04305" stop-color="#6eff78"/><stop offset="0.04602" stop-color="#90ff5c"/><stop offset="0.04899" stop-color="#abff46"/><stop offset="0.05492" stop-color="#d3ff25"/><stop offset="0.05938" stop-color="#e9ff13"/><stop offset="0.06532" stop-color="#ffff00"/><stop offset="0.07274" stop-color="#ffe300"/><stop offset="0.0861" stop-color="#ffc200"/><stop offset="0.1009" stop-color="#ffab00"/><stop offset="0.1158" stop-color="#ff9c00"/><stop offset="0.1633" stop-color="#ff8300"/><stop offset="0.2553" stop-color="#ff7500"/><stop offset="0.3978" stop-color="#ff7c00"/><stop offset="0.5344" stop-color="#ff9900"/><stop offset="0.6413" stop-color="#ffc000"/><stop offset="0.76" stop-color="#feff01"/><stop offset="0.8788" stop-color="#bcff37"/><stop offset="0.9382" stop-color="#93ff59"/><stop offset="1" stop-color="#64ff84"/></linearGradient><linearGradient id="b49"><stop offset="0" stop-color="#0000ff"/><stop offset="0.0282" stop-color="#0000ff"/><stop offset="0.02969" stop-color="#003bff"/><stop offset="0.03117" stop-color="#0088ff"/><stop offset="0.03266" stop-color="#00c9ff"/><stop offset="0.03414" stop-color="#00fffe"/><stop offset="0.03711" stop-color="#35ffbe"/><stop offset="0.04008" stop-color="#5cff8e"/><stop offset="0.04453" stop-color="#8dff5e"/><stop offset="0.0475" stop-color="#a9ff48"/><stop offset="0.05344" stop-color="#d1ff26"/><stop offset="0.06086" stop-color="#f3ff0a"/><stop offset="0.06532" stop-color="#fffb00"/><stop offset="0.07274" stop-color="#ffe000"/><stop offset="0.08016" stop-color="#ffcc00"/><stop offset="0.09501" stop-color="#ffb100"/><stop offset="0.1158" stop-color="#ff9a00"/><stop offset="0.1366" stop-color="#ff8c00"/><stop offset="0.1811" stop-color="#ff7b00"/><stop offset="0.2197" stop-color="#ff7400"/><stop offset="0.3266" stop-color="#ff7000"/><stop offset="0.4216" stop-color="#ff7800"/><stop offset="0.4869" stop-color="#ff8300"/><stop offset="0.57" stop-color="#ff9800"/><stop offset="0.665" stop-color="#ffba00"/><stop offset="0.7363" stop-color="#ffdc00"/><stop offset="0.7957" stop-color="#ffff00"/><stop offset="0.9144" stop-color="#c0ff35"/><stop offset="1" stop-color="#85ff65"/></linearGradient><linearGradient id="b50"><stop offset="0" stop-color="#0000ff"/><stop offset="0.02672" stop-color="#0000ff"/><stop offset="0.0282" stop-color="#001cff"/><stop offset="0.02969" stop-color="#006eff"/><stop offset="0.03117" stop-color="#00b2ff"/><stop offset="0.03266" stop-color="#00ecff"/><stop offset="0.03414" stop-color="#12ffe9"/><stop offset="0.03563" stop-color="#2bffca"/><stop offset="0.0386" stop-color="#54ff98"/><stop offset="0.04156" stop-color="#75ff72"/><stop offset="0.04453" stop-color="#94ff59"/><stop offset="0.04899" stop-color="#b8ff3b"/><stop offset="0.05492" stop-color="#dbff1e"/><stop offset="0.06086" stop-color="#f4ff09"/><stop offset="0.06383" stop-color="#feff01"/><stop offset="0.06532" stop-color="#fffa00"/><stop offset="0.07868" stop-color="#ffd000"/><stop offset="0.09501" stop-color="#ffb100"/><stop offset="0.1188" stop-color="#ff9700"/><stop offset="0.1455" stop-color="#ff8600"/><stop offset="0.1781" stop-color="#ff7a00"/><stop offset="0.2227" stop-color="#ff7100"/><stop offset="0.3266" stop-color="#ff6c00"/><stop offset="0.4572" stop-color="#ff7700"/><stop offset="0.5938" stop-color="#ff9500"/><stop offset="0.7007" stop-color="#ffbb00"/><stop offset="0.7719" stop-color="#ffdd00"/><stop offset="0.8313" stop-color="#ffff00"/><stop offset="0.9263" stop-color="#cfff28"/><stop offset="1" stop-color="#a1ff4e"/></linearGradient><linearGradient id="b51"><stop offset="0" stop-color="#0000ff"/><stop offset="0.02672" stop-color="#0000ff"/><stop offset="0.02969" stop-color="#008dff"/><stop offset="0.03117" stop-color="#00cbff"/><stop offset="0.03266" stop-color="#01fffe"/><stop offset="0.03563" stop-color="#33ffc1"/><stop offset="0.0386" stop-color="#59ff92"/><stop offset="0.04156" stop-color="#78ff6f"/><stop offset="0.04453" stop-color="#96ff57"/><stop offset="0.04899" stop-color="#b9ff3a"/><stop offset="0.05344" stop-color="#d3ff25"/><stop offset="0.06086" stop-color="#f3ff0a"/><stop offset="0.06532" stop-color="#fffc00"/><stop offset="0.08016" stop-color="#ffce00"/><stop offset="0.09204" stop-color="#ffb700"/><stop offset="0.1128" stop-color="#ff9d00"/><stop offset="0.1455" stop-color="#ff8600"/><stop offset="0.1752" stop-color="#ff7a00"/><stop offset="0.2256" stop-color="#ff6f00"/><stop offset="0.3385" stop-color="#ff6900"/><stop offset="0.4988" stop-color="#ff7800"/><stop offset="0.6175" stop-color="#ff9300"/><stop offset="0.7363" stop-color="#ffbd00"/><stop offset="0.8669" stop-color="#feff01"/><stop offset="1" stop-color="#b8ff3b"/></linearGradient><linearGradient id="b52"><stop offset="0" stop-color="#0000ff"/><stop offset="0.02524" stop-color="#0000ff"/><stop offset="0.02672" stop-color="#0009ff"/><stop offset="0.0282" stop-color="#005bff"/><stop offset="0.02969" stop-color="#009fff"/><stop offset="0.03117" stop-color="#00d9ff"/><stop offset="0.03266" stop-color="#06fff7"/><stop offset="0.03563" stop-color="#36ffbd"/><stop offset="0.0386" stop-color="#5aff91"/><stop offset="0.04156" stop-color="#78ff70"/><stop offset="0.04453" stop-color="#95ff58"/><stop offset="0.05047" stop-color="#c0ff35"/><stop offset="0.05344" stop-color="#d0ff27"/><stop offset="0.06086" stop-color="#f0ff0d"/><stop offset="0.06532" stop-color="#feff01"/><stop offset="0.0668" stop-color="#fffa00"/><stop offset="0.07868" stop-color="#ffd500"/><stop offset="0.09501" stop-color="#ffb500"/><stop offset="0.1188" stop-color="#ff9900"/><stop offset="0.1484" stop-color="#ff8500"/><stop offset="0.1811" stop-color="#ff7800"/><stop offset="0.2256" stop-color="#ff6e00"/><stop offset="0.3028" stop-color="#ff6700"/><stop offset="0.3622" stop-color="#ff6700"/><stop offset="0.5107" stop-color="#ff7500"/><stop offset="0.6413" stop-color="#ff9200"/><stop offset="0.7244" stop-color="#ffad00"/><stop offset="0.7957" stop-color="#ffcb00"/><stop offset="0.8907" stop-color="#fffd00"/><stop offset="1" stop-color="#cbff2b"/></linearGradient><linearGradient id="b53"><stop offset="0" stop-color="#0000ff"/><stop offset="0.02524" stop-color="#0000ff"/><stop offset="0.02672" stop-color="#001aff"/><stop offset="0.0282" stop-color="#0067ff"/><stop offset="0.02969" stop-color="#00a7ff"/><stop offset="0.03117" stop-color="#00ddff"/><stop offset="0.03266" stop-color="#08fff5"/><stop offset="0.03563" stop-color="#35ffbe"/><stop offset="0.0386" stop-color="#58ff93"/><stop offset="0.04156" stop-color="#75ff73"/><stop offset="0.04453" stop-color="#91ff5b"/><stop offset="0.04899" stop-color="#b2ff40"/><stop offset="0.05344" stop-color="#ccff2a"/><stop offset="0.06086" stop-color="#ecff10"/><stop offset="0.0668" stop-color="#ffff00"/><stop offset="0.08016" stop-color="#ffd600"/><stop offset="0.09797" stop-color="#ffb400"/><stop offset="0.1158" stop-color="#ff9e00"/><stop offset="0.1455" stop-color="#ff8800"/><stop offset="0.2227" stop-color="#ff6e00"/><stop offset="0.3206" stop-color="#ff6500"/><stop offset="0.4632" stop-color="#ff6b00"/><stop offset="0.6175" stop-color="#ff8500"/><stop offset="0.7007" stop-color="#ff9c00"/><stop offset="0.7957" stop-color="#ffbf00"/><stop offset="0.9144" stop-color="#fffa00"/><stop offset="0.9263" stop-color="#fdff01"/><stop offset="1" stop-color="#dbff1e"/></linearGradient><linearGradient id="b54"><stop offset="0" stop-color="#0000ff"/><stop offset="0.02524" stop-color="#0000ff"/><stop offset="0.02672" stop-color="#0022ff"/><stop offset="0.0282" stop-color="#0069ff"/><stop offset="0.02969" stop-color="#00a5ff"/><stop offset="0.03117" stop-color="#00d9ff"/><stop offset="0.03266" stop-color="#04fffa"/><stop offset="0.03563" stop-color="#2fffc5"/><stop offset="0.0386" stop-color="#51ff9c"/><stop offset="0.04156" stop-color="#6cff7a"/><stop offset="0.04453" stop-color="#88ff63"/><stop offset="0.04899" stop-color="#a9ff47"/><stop offset="0.05492" stop-color="#cbff2b"/><stop offset="0.06086" stop-color="#e4ff16"/><stop offset="0.06977" stop-color="#fffe00"/><stop offset="0.08461" stop-color="#ffd300"/><stop offset="0.1098" stop-color="#ffa900"/><stop offset="0.1306" stop-color="#ff9500"/><stop offset="0.1633" stop-color="#ff8100"/><stop offset="0.2019" stop-color="#ff7300"/><stop offset="0.2613" stop-color="#ff6800"/><stop offset="0.3919" stop-color="#ff6300"/><stop offset="0.5344" stop-color="#ff6f00"/><stop offset="0.6769" stop-color="#ff8b00"/><stop offset="0.8194" stop-color="#ffba00"/><stop offset="0.9025" stop-color="#ffdf00"/><stop offset="0.9619" stop-color="#ffff00"/><stop offset="1" stop-color="#efff0e"/></linearGradient><linearGradient id="b55"><stop offset="0" stop-color="#0000ff"/><stop offset="0.02524" stop-color="#0000ff"/><stop offset="0.02672" stop-color="#0015ff"/><stop offset="0.0282" stop-color="#0059ff"/><stop offset="0.02969" stop-color="#0093ff"/><stop offset="0.03266" stop-color="#00f0ff"/><stop offset="0.03414" stop-color="#0effee"/><stop offset="0.03711" stop-color="#34ffc0"/><stop offset="0.04008" stop-color="#52ff9a"/><stop offset="0.04305" stop-color="#6bff7c"/><stop offset="0.0475" stop-color="#8fff5c"/><stop offset="0.05196" stop-color="#adff44"/><stop offset="0.05938" stop-color="#d2ff26"/><stop offset="0.06532" stop-color="#e8ff13"/><stop offset="0.07422" stop-color="#fffc00"/><stop offset="0.08907" stop-color="#ffd400"/><stop offset="0.1069" stop-color="#ffb500"/><stop offset="0.1277" stop-color="#ff9d00"/><stop offset="0.1514" stop-color="#ff8b00"/><stop offset="0.1841" stop-color="#ff7b00"/><stop offset="0.2286" stop-color="#ff6e00"/><stop offset="0.3503" stop-color="#ff6100"/><stop offset="0.5107" stop-color="#ff6700"/><stop offset="0.6888" stop-color="#ff8400"/><stop offset="0.7838" stop-color="#ff9e00"/><stop offset="0.8788" stop-color="#ffc000"/><stop offset="1" stop-color="#fffa00"/></linearGradient><linearGradient id="b56"><stop offset="0" stop-color="#0000ff"/><stop offset="0.02672" stop-color="#0000ff"/><stop offset="0.02969" stop-color="#0074ff"/><stop offset="0.03117" stop-color="#00a6ff"/><stop offset="0.03266" stop-color="#00d1ff"/><stop offset="0.03414" stop-color="#00f8ff"/><stop offset="0.03563" stop-color="#10ffeb"/><stop offset="0.0386" stop-color="#33ffc1"/><stop offset="0.04156" stop-color="#4fff9e"/><stop offset="0.04453" stop-color="#66ff81"/><stop offset="0.04899" stop-color="#88ff62"/><stop offset="0.05344" stop-color="#a5ff4a"/><stop offset="0.06235" stop-color="#d0ff27"/><stop offset="0.07125" stop-color="#eeff0e"/><stop offset="0.07868" stop-color="#fffc00"/><stop offset="0.09797" stop-color="#ffcd00"/><stop offset="0.1188" stop-color="#ffae00"/><stop offset="0.1395" stop-color="#ff9900"/><stop offset="0.1663" stop-color="#ff8700"/><stop offset="0.2316" stop-color="#ff6f00"/><stop offset="0.3563" stop-color="#ff6000"/><stop offset="0.475" stop-color="#ff6100"/><stop offset="0.5582" stop-color="#ff6800"/><stop offset="0.6769" stop-color="#ff7a00"/><stop offset="0.8313" stop-color="#ffa100"/><stop offset="0.9263" stop-color="#ffc300"/><stop offset="1" stop-color="#ffe400"/></linearGradient><linearGradient id="b57"><stop offset="0" stop-color="#0000ff"/><stop offset="0.02672" stop-color="#0000ff"/><stop offset="0.0282" stop-color="#0014ff"/><stop offset="0.03117" stop-color="#0080ff"/><stop offset="0.03414" stop-color="#00d4ff"/><stop offset="0.03563" stop-color="#00f7ff"/><stop offset="0.03711" stop-color="#0effed"/><stop offset="0.04156" stop-color="#3dffb4"/><stop offset="0.04453" stop-color="#56ff96"/><stop offset="0.04899" stop-color="#75ff72"/><stop offset="0.05492" stop-color="#9dff51"/><stop offset="0.0668" stop-color="#d3ff25"/><stop offset="0.07719" stop-color="#f2ff0a"/><stop offset="0.08313" stop-color="#fffd00"/><stop offset="0.09797" stop-color="#ffd800"/><stop offset="0.1188" stop-color="#ffb600"/><stop offset="0.1425" stop-color="#ff9d00"/><stop offset="0.1692" stop-color="#ff8a00"/><stop offset="0.1989" stop-color="#ff7c00"/><stop offset="0.2553" stop-color="#ff6c00"/><stop offset="0.3741" stop-color="#ff5f00"/><stop offset="0.4691" stop-color="#ff5f00"/><stop offset="0.5819" stop-color="#ff6700"/><stop offset="0.7244" stop-color="#ff7d00"/><stop offset="0.8788" stop-color="#ffa500"/><stop offset="1" stop-color="#ffd200"/></linearGradient><linearGradient id="b58"><stop offset="0" stop-color="#0000ff"/><stop offset="0.0282" stop-color="#0000ff"/><stop offset="0.02969" stop-color="#0022ff"/><stop offset="0.03266" stop-color="#0084ff"/><stop offset="0.03563" stop-color="#00d2ff"/><stop offset="0.03711" stop-color="#00f3ff"/><stop offset="0.0386" stop-color="#0bfff2"/><stop offset="0.04305" stop-color="#37ffbb"/><stop offset="0.04602" stop-color="#4fff9e"/><stop offset="0.05047" stop-color="#6dff79"/><stop offset="0.05492" stop-color="#8bff60"/><stop offset="0.06383" stop-color="#b9ff3a"/><stop offset="0.06977" stop-color="#d0ff27"/><stop offset="0.08016" stop-color="#efff0e"/><stop offset="0.08758" stop-color="#fffe00"/><stop offset="0.09797" stop-color="#ffe400"/><stop offset="0.1188" stop-color="#ffbf00"/><stop offset="0.1455" stop-color="#ffa100"/><stop offset="0.1692" stop-color="#ff8f00"/><stop offset="0.2078" stop-color="#ff7c00"/><stop offset="0.2553" stop-color="#ff6e00"/><stop offset="0.3622" stop-color="#ff6000"/><stop offset="0.5225" stop-color="#ff6000"/><stop offset="0.665" stop-color="#ff6e00"/><stop offset="0.7482" stop-color="#ff7c00"/><stop offset="0.8669" stop-color="#ff9800"/><stop offset="1" stop-color="#ffc400"/></linearGradient><linearGradient id="b59"><stop offset="0" stop-color="#0000ff"/><stop offset="0.02969" stop-color="#0000ff"/><stop offset="0.03414" stop-color="#0084ff"/><stop offset="0.03563" stop-color="#00aaff"/><stop offset="0.0386" stop-color="#00ecff"/><stop offset="0.04008" stop-color="#06fff8"/><stop offset="0.04305" stop-color="#24ffd3"/><stop offset="0.0475" stop-color="#49ffa6"/><stop offset="0.05196" stop-color="#66ff82"/><stop offset="0.05641" stop-color="#82ff67"/><stop offset="0.06086" stop-color="#9bff53"/><stop offset="0.07125" stop-color="#c8ff2e"/><stop offset="0.08313" stop-color="#ebff10"/><stop offset="0.09204" stop-color="#ffff00"/><stop offset="0.1098" stop-color="#ffd700"/><stop offset="0.1306" stop-color="#ffb800"/><stop offset="0.1484" stop-color="#ffa500"/><stop offset="0.1811" stop-color="#ff8d00"/><stop offset="0.2049" stop-color="#ff8100"/><stop offset="0.2613" stop-color="#ff6f00"/><stop offset="0.3681" stop-color="#ff6000"/><stop offset="0.5463" stop-color="#ff6000"/><stop offset="0.7244" stop-color="#ff7300"/><stop offset="0.9025" stop-color="#ff9a00"/><stop offset="1" stop-color="#ffb900"/></linearGradient><linearGradient id="b60"><stop offset="0" stop-color="#0000ff"/><stop offset="0.03117" stop-color="#0000ff"/><stop offset="0.03563" stop-color="#0081ff"/><stop offset="0.0386" stop-color="#00c7ff"/><stop offset="0.04156" stop-color="#01fffe"/><stop offset="0.04602" stop-color="#2bffca"/><stop offset="0.05047" stop-color="#4cffa1"/><stop offset="0.05641" stop-color="#70ff76"/><stop offset="0.06086" stop-color="#8bff60"/><stop offset="0.0668" stop-color="#a8ff48"/><stop offset="0.07719" stop-color="#cfff28"/><stop offset="0.08907" stop-color="#efff0d"/><stop offset="0.09797" stop-color="#fffc00"/><stop offset="0.1128" stop-color="#ffdc00"/><stop offset="0.1336" stop-color="#ffbc00"/><stop offset="0.1544" stop-color="#ffa600"/><stop offset="0.1811" stop-color="#ff9200"/><stop offset="0.2494" stop-color="#ff7500"/><stop offset="0.3563" stop-color="#ff6200"/><stop offset="0.4869" stop-color="#ff5d00"/><stop offset="0.665" stop-color="#ff6800"/><stop offset="0.8432" stop-color="#ff8500"/><stop offset="1" stop-color="#ffaf00"/></linearGradient><linearGradient id="b61"><stop offset="0" stop-color="#0000ff"/><stop offset="0.03266" stop-color="#0000ff"/><stop offset="0.03711" stop-color="#007dff"/><stop offset="0.04008" stop-color="#00c0ff"/><stop offset="0.04305" stop-color="#00f8ff"/><stop offset="0.04453" stop-color="#0afff2"/><stop offset="0.04899" stop-color="#31ffc3"/><stop offset="0.05641" stop-color="#61ff88"/><stop offset="0.06532" stop-color="#92ff5a"/><stop offset="0.07422" stop-color="#b8ff3b"/><stop offset="0.08313" stop-color="#d5ff23"/><stop offset="0.09501" stop-color="#f2ff0b"/><stop offset="0.1009" stop-color="#feff01"/><stop offset="0.1039" stop-color="#fffa00"/><stop offset="0.1217" stop-color="#ffd600"/><stop offset="0.1455" stop-color="#ffb600"/><stop offset="0.1692" stop-color="#ffa000"/><stop offset="0.2019" stop-color="#ff8b00"/><stop offset="0.2791" stop-color="#ff7000"/><stop offset="0.38" stop-color="#ff6100"/><stop offset="0.5107" stop-color="#ff5d00"/><stop offset="0.6769" stop-color="#ff6700"/><stop offset="0.8432" stop-color="#ff8000"/><stop offset="1" stop-color="#ffa700"/></linearGradient><linearGradient id="b62"><stop offset="0" stop-color="#0000ff"/><stop offset="0.03414" stop-color="#0000ff"/><stop offset="0.03711" stop-color="#0054ff"/><stop offset="0.04008" stop-color="#009aff"/><stop offset="0.04453" stop-color="#00efff"/><stop offset="0.04602" stop-color="#05fff9"/><stop offset="0.04899" stop-color="#1fffd9"/><stop offset="0.05492" stop-color="#49ffa5"/><stop offset="0.06086" stop-color="#6aff7d"/><stop offset="0.06532" stop-color="#82ff67"/><stop offset="0.07422" stop-color="#abff46"/><stop offset="0.08461" stop-color="#ceff29"/><stop offset="0.09797" stop-color="#efff0d"/><stop offset="0.1069" stop-color="#fffe00"/><stop offset="0.1188" stop-color="#ffe500"/><stop offset="0.1425" stop-color="#ffc100"/><stop offset="0.1633" stop-color="#ffab00"/><stop offset="0.1959" stop-color="#ff9300"/><stop offset="0.2256" stop-color="#ff8400"/><stop offset="0.2731" stop-color="#ff7400"/><stop offset="0.3741" stop-color="#ff6300"/><stop offset="0.5225" stop-color="#ff5d00"/><stop offset="0.7125" stop-color="#ff6900"/><stop offset="0.8432" stop-color="#ff7c00"/><stop offset="1" stop-color="#ffa000"/></linearGradient><linearGradient id="b63"><stop offset="0" stop-color="#0000ff"/><stop offset="0.03563" stop-color="#0000ff"/><stop offset="0.0386" stop-color="#0050ff"/><stop offset="0.04156" stop-color="#0094ff"/><stop offset="0.04453" stop-color="#00ceff"/><stop offset="0.0475" stop-color="#00ffff"/><stop offset="0.05196" stop-color="#25ffd2"/><stop offset="0.05789" stop-color="#4cffa2"/><stop offset="0.06383" stop-color="#6bff7c"/><stop offset="0.06977" stop-color="#89ff61"/><stop offset="0.07868" stop-color="#afff42"/><stop offset="0.08907" stop-color="#d0ff27"/><stop offset="0.1039" stop-color="#f2ff0b"/><stop offset="0.1128" stop-color="#fffc00"/><stop offset="0.1336" stop-color="#ffd500"/><stop offset="0.1514" stop-color="#ffbe00"/><stop offset="0.1811" stop-color="#ffa200"/><stop offset="0.2078" stop-color="#ff9100"/><stop offset="0.2731" stop-color="#ff7700"/><stop offset="0.386" stop-color="#ff6300"/><stop offset="0.5225" stop-color="#ff5d00"/><stop offset="0.7125" stop-color="#ff6700"/><stop offset="0.8907" stop-color="#ff8100"/><stop offset="1" stop-color="#ff9a00"/></linearGradient><linearGradient id="b64"><stop offset="0" stop-color="#0000ff"/><stop offset="0.03711" stop-color="#0000ff"/><stop offset="0.04008" stop-color="#004dff"/><stop offset="0.04453" stop-color="#00acff"/><stop offset="0.04899" stop-color="#00f7ff"/><stop offset="0.05047" stop-color="#08fff5"/><stop offset="0.05492" stop-color="#2affcb"/><stop offset="0.06235" stop-color="#56ff95"/><stop offset="0.0668" stop-color="#6cff7b"/><stop offset="0.07274" stop-color="#89ff61"/><stop offset="0.08758" stop-color="#c1ff34"/><stop offset="0.1009" stop-color="#e3ff17"/><stop offset="0.1158" stop-color="#ffff00"/><stop offset="0.1366" stop-color="#ffd900"/><stop offset="0.1514" stop-color="#ffc500"/><stop offset="0.1692" stop-color="#ffb200"/><stop offset="0.2019" stop-color="#ff9900"/><stop offset="0.2731" stop-color="#ff7a00"/><stop offset="0.3741" stop-color="#ff6600"/><stop offset="0.4869" stop-color="#ff5e00"/><stop offset="0.6532" stop-color="#ff6100"/><stop offset="0.8194" stop-color="#ff7200"/><stop offset="1" stop-color="#ff9500"/></linearGradient><linearGradient id="b65"><stop offset="0" stop-color="#0000ff"/><stop offset="0.0386" stop-color="#0000ff"/><stop offset="0.04156" stop-color="#004aff"/><stop offset="0.04453" stop-color="#008aff"/><stop offset="0.04899" stop-color="#00d8ff"/><stop offset="0.05047" stop-color="#00efff"/><stop offset="0.05196" stop-color="#03fffb"/><stop offset="0.05938" stop-color="#38ffba"/><stop offset="0.06532" stop-color="#58ff92"/><stop offset="0.07125" stop-color="#74ff73"/><stop offset="0.07719" stop-color="#90ff5c"/><stop offset="0.08758" stop-color="#b6ff3d"/><stop offset="0.09797" stop-color="#d3ff25"/><stop offset="0.1069" stop-color="#e7ff14"/><stop offset="0.1217" stop-color="#fffd00"/><stop offset="0.1395" stop-color="#ffdd00"/><stop offset="0.1574" stop-color="#ffc500"/><stop offset="0.1841" stop-color="#ffab00"/><stop offset="0.2167" stop-color="#ff9500"/><stop offset="0.291" stop-color="#ff7800"/><stop offset="0.386" stop-color="#ff6600"/><stop offset="0.5107" stop-color="#ff5e00"/><stop offset="0.665" stop-color="#ff6100"/><stop offset="0.8432" stop-color="#ff7300"/><stop offset="1" stop-color="#ff9000"/></linearGradient><linearGradient id="b66"><stop offset="0" stop-color="#0000ff"/><stop offset="0.04008" stop-color="#0000ff"/><stop offset="0.04453" stop-color="#0067ff"/><stop offset="0.04899" stop-color="#00baff"/><stop offset="0.05344" stop-color="#00fdff"/><stop offset="0.05492" stop-color="#0bfff2"/><stop offset="0.06235" stop-color="#3cffb6"/><stop offset="0.06829" stop-color="#5aff90"/><stop offset="0.07274" stop-color="#6eff78"/><stop offset="0.08016" stop-color="#8fff5c"/><stop offset="0.08907" stop-color="#b0ff42"/><stop offset="0.1009" stop-color="#d1ff26"/><stop offset="0.1188" stop-color="#f5ff09"/><stop offset="0.1247" stop-color="#feff01"/><stop offset="0.1277" stop-color="#fffa00"/><stop offset="0.1455" stop-color="#ffdc00"/><stop offset="0.1633" stop-color="#ffc500"/><stop offset="0.187" stop-color="#ffae00"/><stop offset="0.2227" stop-color="#ff9600"/><stop offset="0.2969" stop-color="#ff7900"/><stop offset="0.3919" stop-color="#ff6700"/><stop offset="0.5344" stop-color="#ff5e00"/><stop offset="0.6888" stop-color="#ff6200"/><stop offset="0.8432" stop-color="#ff7100"/><stop offset="1" stop-color="#ff8c00"/></linearGradient><linearGradient id="b67"><stop offset="0" stop-color="#0000ff"/><stop offset="0.04156" stop-color="#0000ff"/><stop offset="0.04305" stop-color="#001aff"/><stop offset="0.04602" stop-color="#005bff"/><stop offset="0.04899" stop-color="#0094ff"/><stop offset="0.05344" stop-color="#00dbff"/><stop offset="0.05641" stop-color="#02fffc"/><stop offset="0.06383" stop-color="#33ffc0"/><stop offset="0.06977" stop-color="#52ff9a"/><stop offset="0.07719" stop-color="#72ff74"/><stop offset="0.08461" stop-color="#92ff5a"/><stop offset="0.09204" stop-color="#acff45"/><stop offset="0.1039" stop-color="#cdff2a"/><stop offset="0.1158" stop-color="#e6ff15"/><stop offset="0.1306" stop-color="#feff01"/><stop offset="0.1336" stop-color="#fffa00"/><stop offset="0.1663" stop-color="#ffca00"/><stop offset="0.193" stop-color="#ffb000"/><stop offset="0.2286" stop-color="#ff9800"/><stop offset="0.3088" stop-color="#ff7900"/><stop offset="0.3919" stop-color="#ff6900"/><stop offset="0.5225" stop-color="#ff5f00"/><stop offset="0.665" stop-color="#ff6000"/><stop offset="0.8194" stop-color="#ff6c00"/><stop offset="1" stop-color="#ff8800"/></linearGradient><linearGradient id="b68"><stop offset="0" stop-color="#0000ff"/><stop offset="0.04305" stop-color="#0000ff"/><stop offset="0.04453" stop-color="#0008ff"/><stop offset="0.0475" stop-color="#0048ff"/><stop offset="0.05196" stop-color="#009aff"/><stop offset="0.05641" stop-color="#00dcff"/><stop offset="0.05938" stop-color="#02fffc"/><stop offset="0.06532" stop-color="#29ffcd"/><stop offset="0.07274" stop-color="#4fff9e"/><stop offset="0.08016" stop-color="#6dff79"/><stop offset="0.08907" stop-color="#92ff5a"/><stop offset="0.09797" stop-color="#afff42"/><stop offset="0.1098" stop-color="#ceff29"/><stop offset="0.1277" stop-color="#f0ff0d"/><stop offset="0.1395" stop-color="#fffc00"/><stop offset="0.1722" stop-color="#ffcd00"/><stop offset="0.1989" stop-color="#ffb300"/><stop offset="0.2345" stop-color="#ff9b00"/><stop offset="0.3028" stop-color="#ff7f00"/><stop offset="0.4038" stop-color="#ff6a00"/><stop offset="0.5582" stop-color="#ff5f00"/><stop offset="0.665" stop-color="#ff6000"/><stop offset="0.8194" stop-color="#ff6a00"/><stop offset="1" stop-color="#ff8300"/></linearGradient><linearGradient id="b69"><stop offset="0" stop-color="#0000ff"/><stop offset="0.04602" stop-color="#0000ff"/><stop offset="0.0475" stop-color="#0018ff"/><stop offset="0.05047" stop-color="#0054ff"/><stop offset="0.05344" stop-color="#0088ff"/><stop offset="0.05938" stop-color="#00deff"/><stop offset="0.06235" stop-color="#02fffd"/><stop offset="0.06829" stop-color="#27ffcf"/><stop offset="0.07422" stop-color="#45ffaa"/><stop offset="0.08313" stop-color="#6aff7d"/><stop offset="0.08907" stop-color="#81ff68"/><stop offset="0.1039" stop-color="#b2ff40"/><stop offset="0.1158" stop-color="#cfff28"/><stop offset="0.1366" stop-color="#f4ff09"/><stop offset="0.1455" stop-color="#fffe00"/><stop offset="0.1603" stop-color="#ffe600"/><stop offset="0.187" stop-color="#ffc600"/><stop offset="0.2138" stop-color="#ffaf00"/><stop offset="0.2494" stop-color="#ff9900"/><stop offset="0.3206" stop-color="#ff7e00"/><stop offset="0.4156" stop-color="#ff6b00"/><stop offset="0.5582" stop-color="#ff6000"/><stop offset="0.7007" stop-color="#ff6100"/><stop offset="0.855" stop-color="#ff6c00"/><stop offset="1" stop-color="#ff8000"/></linearGradient><linearGradient id="b70"><stop offset="0" stop-color="#0000ff"/><stop offset="0.0475" stop-color="#0000ff"/><stop offset="0.04899" stop-color="#0008ff"/><stop offset="0.05344" stop-color="#005eff"/><stop offset="0.05789" stop-color="#00a5ff"/><stop offset="0.06235" stop-color="#00e0ff"/><stop offset="0.06532" stop-color="#02fffc"/><stop offset="0.07274" stop-color="#2dffc7"/><stop offset="0.08016" stop-color="#50ff9d"/><stop offset="0.08907" stop-color="#71ff75"/><stop offset="0.09797" stop-color="#92ff5a"/><stop offset="0.1098" stop-color="#b5ff3e"/><stop offset="0.1217" stop-color="#d0ff27"/><stop offset="0.1514" stop-color="#ffff00"/><stop offset="0.1722" stop-color="#ffe000"/><stop offset="0.1989" stop-color="#ffc300"/><stop offset="0.2494" stop-color="#ff9f00"/><stop offset="0.3266" stop-color="#ff8000"/><stop offset="0.4335" stop-color="#ff6b00"/><stop offset="0.57" stop-color="#ff6100"/><stop offset="0.7007" stop-color="#ff6100"/><stop offset="0.8907" stop-color="#ff6e00"/><stop offset="1" stop-color="#ff7c00"/></linearGradient><linearGradient id="b71"><stop offset="0" stop-color="#0000ff"/><stop offset="0.05047" stop-color="#0000ff"/><stop offset="0.05492" stop-color="#004fff"/><stop offset="0.05938" stop-color="#0095ff"/><stop offset="0.06532" stop-color="#00e2ff"/><stop offset="0.06829" stop-color="#02fffc"/><stop offset="0.07422" stop-color="#24ffd2"/><stop offset="0.08313" stop-color="#4dffa0"/><stop offset="0.09204" stop-color="#6dff79"/><stop offset="0.09797" stop-color="#83ff66"/><stop offset="0.1128" stop-color="#b0ff42"/><stop offset="0.1277" stop-color="#d1ff26"/><stop offset="0.1484" stop-color="#f3ff0a"/><stop offset="0.1603" stop-color="#fffb00"/><stop offset="0.19" stop-color="#ffd400"/><stop offset="0.2167" stop-color="#ffbb00"/><stop offset="0.285" stop-color="#ff9300"/><stop offset="0.3563" stop-color="#ff7c00"/><stop offset="0.4453" stop-color="#ff6c00"/><stop offset="0.57" stop-color="#ff6200"/><stop offset="0.6888" stop-color="#ff6100"/><stop offset="0.7957" stop-color="#ff6500"/><stop offset="1" stop-color="#ff7a00"/></linearGradient><linearGradient id="b72"><stop offset="0" stop-color="#0000ff"/><stop offset="0.05196" stop-color="#0000ff"/><stop offset="0.05344" stop-color="#000aff"/><stop offset="0.05789" stop-color="#0059ff"/><stop offset="0.06383" stop-color="#00afff"/><stop offset="0.06829" stop-color="#00e4ff"/><stop offset="0.07125" stop-color="#03fffc"/><stop offset="0.07719" stop-color="#24ffd3"/><stop offset="0.08461" stop-color="#45ffaa"/><stop offset="0.09501" stop-color="#6aff7c"/><stop offset="0.1039" stop-color="#89ff61"/><stop offset="0.1188" stop-color="#b3ff3f"/><stop offset="0.1336" stop-color="#d2ff25"/><stop offset="0.1455" stop-color="#e6ff15"/><stop offset="0.1663" stop-color="#fffd00"/><stop offset="0.187" stop-color="#ffe000"/><stop offset="0.2049" stop-color="#ffcd00"/><stop offset="0.2613" stop-color="#ffa400"/><stop offset="0.3503" stop-color="#ff8100"/><stop offset="0.4335" stop-color="#ff7000"/><stop offset="0.5582" stop-color="#ff6400"/><stop offset="0.7244" stop-color="#ff6200"/><stop offset="0.8194" stop-color="#ff6600"/><stop offset="1" stop-color="#ff7700"/></linearGradient><linearGradient id="b73"><stop offset="0" stop-color="#0000ff"/><stop offset="0.05492" stop-color="#0000ff"/><stop offset="0.05938" stop-color="#004cff"/><stop offset="0.06532" stop-color="#00a1ff"/><stop offset="0.07125" stop-color="#00e7ff"/><stop offset="0.07422" stop-color="#03fffb"/><stop offset="0.08016" stop-color="#23ffd4"/><stop offset="0.08907" stop-color="#49ffa5"/><stop offset="0.1009" stop-color="#71ff75"/><stop offset="0.1069" stop-color="#86ff64"/><stop offset="0.1217" stop-color="#afff43"/><stop offset="0.1366" stop-color="#ceff29"/><stop offset="0.1514" stop-color="#e6ff15"/><stop offset="0.1722" stop-color="#fffe00"/><stop offset="0.2108" stop-color="#ffcf00"/><stop offset="0.2672" stop-color="#ffa600"/><stop offset="0.3563" stop-color="#ff8300"/><stop offset="0.4513" stop-color="#ff7000"/><stop offset="0.57" stop-color="#ff6500"/><stop offset="0.7125" stop-color="#ff6200"/><stop offset="0.8432" stop-color="#ff6700"/><stop offset="1" stop-color="#ff7600"/></linearGradient><linearGradient id="b74"><stop offset="0" stop-color="#0000ff"/><stop offset="0.05641" stop-color="#0000ff"/><stop offset="0.05789" stop-color="#000dff"/><stop offset="0.06235" stop-color="#0056ff"/><stop offset="0.06829" stop-color="#00a7ff"/><stop offset="0.07571" stop-color="#00f8ff"/><stop offset="0.07719" stop-color="#04fffa"/><stop offset="0.08461" stop-color="#29ffcc"/><stop offset="0.09204" stop-color="#48ffa7"/><stop offset="0.1009" stop-color="#66ff82"/><stop offset="0.1098" stop-color="#82ff67"/><stop offset="0.1247" stop-color="#abff46"/><stop offset="0.1395" stop-color="#caff2c"/><stop offset="0.1514" stop-color="#deff1c"/><stop offset="0.1781" stop-color="#fffe00"/><stop offset="0.2197" stop-color="#ffce00"/><stop offset="0.2613" stop-color="#ffaf00"/><stop offset="0.291" stop-color="#ff9f00"/><stop offset="0.3622" stop-color="#ff8500"/><stop offset="0.475" stop-color="#ff6f00"/><stop offset="0.5938" stop-color="#ff6500"/><stop offset="0.7482" stop-color="#ff6300"/><stop offset="0.8669" stop-color="#ff6800"/><stop offset="1" stop-color="#ff7400"/></linearGradient><linearGradient id="b75"><stop offset="0" stop-color="#0000ff"/><stop offset="0.05938" stop-color="#0002ff"/><stop offset="0.06383" stop-color="#004aff"/><stop offset="0.06829" stop-color="#0088ff"/><stop offset="0.07571" stop-color="#00ddff"/><stop offset="0.07868" stop-color="#00faff"/><stop offset="0.08016" stop-color="#05fff9"/><stop offset="0.0861" stop-color="#22ffd5"/><stop offset="0.09501" stop-color="#46ffa9"/><stop offset="0.1039" stop-color="#63ff85"/><stop offset="0.1128" stop-color="#7fff6a"/><stop offset="0.1247" stop-color="#a0ff4f"/><stop offset="0.1425" stop-color="#c6ff2f"/><stop offset="0.1633" stop-color="#e7ff14"/><stop offset="0.1841" stop-color="#ffff00"/><stop offset="0.2286" stop-color="#ffcd00"/><stop offset="0.285" stop-color="#ffa700"/><stop offset="0.3681" stop-color="#ff8700"/><stop offset="0.4335" stop-color="#ff7800"/><stop offset="0.5107" stop-color="#ff6d00"/><stop offset="0.6532" stop-color="#ff6400"/><stop offset="0.855" stop-color="#ff6700"/><stop offset="1" stop-color="#ff7300"/></linearGradient><linearGradient id="b76"><stop offset="0" stop-color="#0000ff"/><stop offset="0.06086" stop-color="#0000ff"/><stop offset="0.06235" stop-color="#0011ff"/><stop offset="0.0668" stop-color="#0055ff"/><stop offset="0.07274" stop-color="#00a1ff"/><stop offset="0.08165" stop-color="#00fcff"/><stop offset="0.08313" stop-color="#06fff8"/><stop offset="0.09204" stop-color="#2effc6"/><stop offset="0.1039" stop-color="#59ff92"/><stop offset="0.1128" stop-color="#73ff74"/><stop offset="0.1217" stop-color="#8dff5e"/><stop offset="0.1366" stop-color="#b1ff41"/><stop offset="0.1544" stop-color="#d2ff26"/><stop offset="0.19" stop-color="#ffff00"/><stop offset="0.2286" stop-color="#ffd400"/><stop offset="0.285" stop-color="#ffac00"/><stop offset="0.3503" stop-color="#ff9000"/><stop offset="0.4275" stop-color="#ff7c00"/><stop offset="0.5107" stop-color="#ff6f00"/><stop offset="0.7007" stop-color="#ff6400"/><stop offset="0.8788" stop-color="#ff6800"/><stop offset="1" stop-color="#ff7100"/></linearGradient><linearGradient id="b77"><stop offset="0" stop-color="#0000ff"/><stop offset="0.06235" stop-color="#0000ff"/><stop offset="0.06383" stop-color="#0007ff"/><stop offset="0.0668" stop-color="#0035ff"/><stop offset="0.07125" stop-color="#0072ff"/><stop offset="0.07719" stop-color="#00b7ff"/><stop offset="0.08461" stop-color="#00fdff"/><stop offset="0.0861" stop-color="#07fff7"/><stop offset="0.1009" stop-color="#44ffac"/><stop offset="0.1128" stop-color="#68ff7f"/><stop offset="0.1217" stop-color="#82ff67"/><stop offset="0.1395" stop-color="#aeff43"/><stop offset="0.1603" stop-color="#d3ff25"/><stop offset="0.1811" stop-color="#efff0e"/><stop offset="0.1989" stop-color="#fffc00"/><stop offset="0.2494" stop-color="#ffc900"/><stop offset="0.3147" stop-color="#ffa200"/><stop offset="0.3681" stop-color="#ff8e00"/><stop offset="0.4632" stop-color="#ff7800"/><stop offset="0.57" stop-color="#ff6b00"/><stop offset="0.7007" stop-color="#ff6500"/><stop offset="0.8313" stop-color="#ff6600"/><stop offset="1" stop-color="#ff7100"/></linearGradient><linearGradient id="b78"><stop offset="0" stop-color="#0000ff"/><stop offset="0.06532" stop-color="#0000ff"/><stop offset="0.07422" stop-color="#007aff"/><stop offset="0.08165" stop-color="#00caff"/><stop offset="0.08758" stop-color="#00ffff"/><stop offset="0.09797" stop-color="#2effc7"/><stop offset="0.1069" stop-color="#4dffa1"/><stop offset="0.1188" stop-color="#6eff78"/><stop offset="0.1306" stop-color="#8fff5c"/><stop offset="0.1455" stop-color="#b1ff41"/><stop offset="0.1633" stop-color="#d0ff27"/><stop offset="0.187" stop-color="#efff0d"/><stop offset="0.2049" stop-color="#fffc00"/><stop offset="0.2435" stop-color="#ffd400"/><stop offset="0.291" stop-color="#ffb300"/><stop offset="0.3444" stop-color="#ff9a00"/><stop offset="0.4453" stop-color="#ff7e00"/><stop offset="0.5582" stop-color="#ff6e00"/><stop offset="0.7007" stop-color="#ff6600"/><stop offset="0.855" stop-color="#ff6700"/><stop offset="1" stop-color="#ff7000"/></linearGradient><linearGradient id="b79"><stop offset="0" stop-color="#0000ff"/><stop offset="0.06532" stop-color="#0000ff"/><stop offset="0.0668" stop-color="#0004ff"/><stop offset="0.07274" stop-color="#0059ff"/><stop offset="0.07868" stop-color="#009fff"/><stop offset="0.08461" stop-color="#00daff"/><stop offset="0.08907" stop-color="#01fffe"/><stop offset="0.09501" stop-color="#1bffdd"/><stop offset="0.1098" stop-color="#50ff9c"/><stop offset="0.1217" stop-color="#71ff75"/><stop offset="0.1277" stop-color="#82ff67"/><stop offset="0.1425" stop-color="#a6ff4a"/><stop offset="0.1633" stop-color="#ccff2b"/><stop offset="0.19" stop-color="#efff0d"/><stop offset="0.2078" stop-color="#fffd00"/><stop offset="0.2375" stop-color="#ffdd00"/><stop offset="0.2613" stop-color="#ffc900"/><stop offset="0.3028" stop-color="#ffaf00"/><stop offset="0.386" stop-color="#ff8e00"/><stop offset="0.4572" stop-color="#ff7d00"/><stop offset="0.5582" stop-color="#ff6f00"/><stop offset="0.7125" stop-color="#ff6600"/><stop offset="0.855" stop-color="#ff6700"/><stop offset="1" stop-color="#ff6f00"/></linearGradient></defs><rect x="481.60" y="327.97" width="336.82" height="3.40" fill="url(#b0)"/><rect x="481.60" y="330.97" width="336.82" height="3.40" fill="url(#b1)"/><rect x="481.60" y="333.97" width="336.82" height="3.40" fill="url(#b2)"/><rect x="481.60" y="336.97" width="336.82" height="3.40" fill="url(#b3)"/><rect x="481.60" y="339.97" width="336.82" height="3.40" fill="url(#b4)"/><rect x="481.60" y="342.97" width="336.82" height="3.40" fill="url(#b5)"/><rect x="481.60" y="345.97" width="336.82" height="3.40" fill="url(#b6)"/><rect x="481.60" y="348.97" width="336.82" height="3.40" fill="url(#b7)"/><rect x="481.60" y="351.97" width="336.82" height="3.40" fill="url(#b8)"/><rect x="481.60" y="354.97" width="336.82" height="3.40" fill="url(#b9)"/><rect x="481.60" y="357.97" width="336.82" height="3.40" fill="url(#b10)"/><rect x="481.60" y="360.97" width="336.82" height="3.40" fill="url(#b11)"/><rect x="481.60" y="363.97" width="336.82" height="3.40" fill="url(#b12)"/><rect x="481.60" y="366.97" width="336.82" height="2.40" fill="url(#b13)"/><rect x="481.60" y="368.97" width="336.82" height="2.40" fill="url(#b14)"/><rect x="481.60" y="370.97" width="336.82" height="2.40" fill="url(#b15)"/><rect x="481.60" y="372.97" width="336.82" height="2.40" fill="url(#b16)"/><rect x="481.60" y="374.97" width="336.82" height="2.40" fill="url(#b17)"/><rect x="481.60" y="376.97" width="336.82" height="2.40" fill="url(#b18)"/><rect x="481.60" y="378.97" width="336.82" height="2.40" fill="url(#b19)"/><rect x="481.60" y="380.97" width="336.82" height="2.40" fill="url(#b20)"/><rect x="481.60" y="382.97" width="336.82" height="2.40" fill="url(#b21)"/><rect x="481.60" y="384.97" width="336.82" height="2.40" fill="url(#b22)"/><rect x="481.60" y="386.97" width="336.82" height="2.40" fill="url(#b23)"/><rect x="481.60" y="388.97" width="336.82" height="2.40" fill="url(#b24)"/><rect x="481.60" y="390.97" width="336.82" height="1.40" fill="url(#b25)"/><rect x="481.60" y="391.97" width="336.82" height="1.40" fill="url(#b26)"/><rect x="481.60" y="392.97" width="336.82" height="1.40" fill="url(#b27)"/><rect x="481.60" y="393.97" width="336.82" height="1.40" fill="url(#b28)"/><rect x="481.60" y="394.97" width="336.82" height="1.40" fill="url(#b29)"/><rect x="481.60" y="395.97" width="336.82" height="1.40" fill="url(#b30)"/><rect x="481.60" y="396.97" width="336.82" height="1.40" fill="url(#b31)"/><rect x="481.60" y="397.97" width="336.82" height="1.40" fill="url(#b32)"/><rect x="481.60" y="398.97" width="336.82" height="1.40" fill="url(#b33)"/><rect x="481.60" y="399.97" width="336.82" height="1.40" fill="url(#b34)"/><rect x="481.60" y="400.97" width="336.82" height="1.40" fill="url(#b35)"/><rect x="481.60" y="401.97" width="336.82" height="1.40" fill="url(#b36)"/><rect x="481.60" y="402.97" width="336.82" height="1.40" fill="url(#b37)"/><rect x="481.60" y="403.97" width="336.82" height="1.40" fill="url(#b38)"/><rect x="481.60" y="404.97" width="336.82" height="1.40" fill="url(#b39)"/><rect x="481.60" y="405.97" width="336.82" height="1.40" fill="url(#b40)"/><rect x="481.60" y="406.97" width="336.82" height="1.40" fill="url(#b41)"/><rect x="481.60" y="407.97" width="336.82" height="1.40" fill="url(#b42)"/><rect x="481.60" y="408.97" width="336.82" height="1.40" fill="url(#b43)"/><rect x="481.60" y="409.97" width="336.82" height="1.40" fill="url(#b44)"/><rect x="481.60" y="410.97" width="336.82" height="1.40" fill="url(#b45)"/><rect x="481.60" y="411.97" width="336.82" height="1.40" fill="url(#b46)"/><rect x="481.60" y="412.97" width="336.82" height="1.40" fill="url(#b47)"/><rect x="481.60" y="413.97" width="336.82" height="1.40" fill="url(#b48)"/><rect x="481.60" y="414.97" width="336.82" height="1.40" fill="url(#b49)"/><rect x="481.60" y="415.97" width="336.82" height="1.40" fill="url(#b50)"/><rect x="481.60" y="416.97" width="336.82" height="1.40" fill="url(#b51)"/><rect x="481.60" y="417.97" width="336.82" height="1.40" fill="url(#b52)"/><rect x="481.60" y="418.97" width="336.82" height="1.40" fill="url(#b53)"/><rect x="481.60" y="419.97" width="336.82" height="2.40" fill="url(#b54)"/><rect x="481.60" y="421.97" width="336.82" height="2.40" fill="url(#b55)"/><rect x="481.60" y="423.97" width="336.82" height="2.40" fill="url(#b56)"/><rect x="481.60" y="425.97" width="336.82" height="2.40" fill="url(#b57)"/><rect x="481.60" y="427.97" width="336.82" height="2.40" fill="url(#b58)"/><rect x="481.60" y="429.97" width="336.82" height="2.40" fill="url(#b59)"/><rect x="481.60" y="431.97" width="336.82" height="2.40" fill="url(#b60)"/><rect x="481.60" y="433.97" width="336.82" height="2.40" fill="url(#b61)"/><rect x="481.60" y="435.97" width="336.82" height="2.40" fill="url(#b62)"/><rect x="481.60" y="437.97" width="336.82" height="2.40" fill="url(#b63)"/><rect x="481.60" y="439.97" width="336.82" height="2.40" fill="url(#b64)"/><rect x="481.60" y="441.97" width="336.82" height="2.40" fill="url(#b65)"/><rect x="481.60" y="443.97" width="336.82" height="2.40" fill="url(#b66)"/><rect x="481.60" y="445.97" width="336.82" height="3.40" fill="url(#b67)"/><rect x="481.60" y="448.97" width="336.82" height="3.40" fill="url(#b68)"/><rect x="481.60" y="451.97" width="336.82" height="3.40" fill="url(#b69)"/><rect x="481.60" y="454.97" width="336.82" height="3.40" fill="url(#b70)"/><rect x="481.60" y="457.97" width="336.82" height="3.40" fill="url(#b71)"/><rect x="481.60" y="460.97" width="336.82" height="3.40" fill="url(#b72)"/><rect x="481.60" y="463.97" width="336.82" height="3.40" fill="url(#b73)"/><rect x="481.60" y="466.97" width="336.82" height="3.40" fill="url(#b74)"/><rect x="481.60" y="469.97" width="336.82" height="3.40" fill="url(#b75)"/><rect x="481.60" y="472.97" width="336.82" height="3.40" fill="url(#b76)"/><rect x="481.60" y="475.97" width="336.82" height="3.40" fill="url(#b77)"/><rect x="481.60" y="478.97" width="336.82" height="3.40" fill="url(#b78)"/><rect x="481.60" y="481.97" width="336.82" height="0.16" fill="url(#b79)"/><path d="M481.60 345.38 L607.57 345.38 L612.94 347.81 L618.31 350.06 L623.68 352.14 L629.05 354.07 L634.42 355.86 L639.79 357.53 L645.16 359.09 L650.53 360.55 L655.90 361.92 L661.27 363.21 L666.64 364.43 L672.01 365.57 L677.38 366.65 L682.75 367.68 L688.12 368.65 L693.49 369.57 L698.86 370.45 L704.23 371.28 L709.60 372.08 L714.97 372.84 L720.34 373.56 L725.71 374.26 L731.08 374.92 L736.45 375.55 L741.82 376.16 L747.19 376.75 L752.56 377.31 L757.93 377.85 L763.30 378.36 L768.66 378.86 L774.03 379.34 L779.40 379.81 L784.77 380.26 L790.14 380.69 L795.51 381.10 L800.88 381.51 L806.25 381.90 L811.62 382.27 L816.99 382.64 L822.36 382.99 L822.36 427.11 L816.99 427.46 L811.62 427.83 L806.25 428.20 L800.88 428.59 L795.51 429.00 L790.14 429.41 L784.77 429.84 L779.40 430.29 L774.03 430.76 L768.66 431.24 L763.30 431.74 L757.93 432.25 L752.56 432.79 L747.19 433.35 L741.82 433.94 L736.45 434.55 L731.08 435.18 L725.71 435.84 L720.34 436.54 L714.97 437.26 L709.60 438.02 L704.23 438.82 L698.86 439.65 L693.49 440.53 L688.12 441.45 L682.75 442.42 L677.38 443.45 L672.01 444.53 L666.64 445.67 L661.27 446.89 L655.90 448.18 L650.53 449.55 L645.16 451.01 L639.79 452.57 L634.42 454.24 L629.05 456.03 L623.68 457.96 L618.31 460.04 L612.94 462.29 L607.57 464.73 L481.60 464.73 M481.60 405.05H822.36" fill="none" stroke="#161616" stroke-width="1.35" stroke-linejoin="miter"/><circle cx="602.54" cy="361.00" r="2.8" fill="none" stroke="#1a1a1a" stroke-width="1.0"/><path d="M481.60 319.40V495.50M475.40 490.30H852.90M475.40 490.30H481.60M478.40 476.09H481.60M475.40 461.88H481.60M478.40 447.68H481.60M475.40 433.47H481.60M478.40 419.26H481.60M475.40 405.05H481.60M478.40 390.84H481.60M475.40 376.63H481.60M478.40 362.43H481.60M475.40 348.22H481.60M478.40 334.01H481.60M475.40 319.80H481.60M481.60 490.30V495.50M504.78 490.30V493.10M527.96 490.30V495.50M551.14 490.30V493.10M574.33 490.30V495.50M597.51 490.30V493.10M620.69 490.30V495.50M643.87 490.30V493.10M667.05 490.30V495.50M690.23 490.30V493.10M713.41 490.30V495.50M736.59 490.30V493.10M759.77 490.30V495.50M782.96 490.30V493.10M806.14 490.30V495.50M829.32 490.30V493.10M852.50 490.30V495.50" stroke="#2a2a2a" stroke-width="0.95" fill="none"/><g font-family="'DejaVu Sans Condensed','DejaVu Sans',sans-serif" font-size="7.90" font-weight="bold" fill="#1a1a1a"><text x="471.80" y="493.20" text-anchor="end">-600</text><text x="471.80" y="464.78" text-anchor="end">-400</text><text x="471.80" y="436.37" text-anchor="end">-200</text><text x="471.80" y="407.95" text-anchor="end">0</text><text x="471.80" y="379.53" text-anchor="end">200</text><text x="471.80" y="351.12" text-anchor="end">400</text><text x="471.80" y="322.70" text-anchor="end">600</text><text x="481.60" y="503.90" text-anchor="middle">0</text><text x="527.96" y="503.90" text-anchor="middle">2</text><text x="574.33" y="503.90" text-anchor="middle">4</text><text x="620.69" y="503.90" text-anchor="middle">6</text><text x="667.05" y="503.90" text-anchor="middle">8</text><text x="713.41" y="503.90" text-anchor="middle">10</text><text x="759.77" y="503.90" text-anchor="middle">12</text><text x="806.14" y="503.90" text-anchor="middle">14</text><text x="852.50" y="503.90" text-anchor="middle">16</text><text x="481.30" y="310.60" text-anchor="end">[Nm]</text><text x="855.10" y="488.10">x10<tspan dx="0.9" dy="-3.6" font-size="5.6">3</tspan></text></g><text x="640.20" y="516.70" font-family="'DejaVu Sans Condensed','DejaVu Sans',sans-serif" font-size="7.90" fill="#1a1a1a">X: speed [rpm]</text><defs><linearGradient id="bcb" x1="0" y1="0" x2="0" y2="1"><stop offset="0.0000" stop-color="#ff0000"/><stop offset="0.1400" stop-color="#ffff00"/><stop offset="0.2500" stop-color="#6eff78"/><stop offset="0.3550" stop-color="#00ffff"/><stop offset="0.5000" stop-color="#0000ff"/></linearGradient></defs><rect x="881.60" y="339.00" width="8.00" height="132.00" fill="url(#bcb)"/><path d="M881.60 338.60V471.40M878.20 471.00H881.60M879.80 457.80H881.60M878.20 444.60H881.60M879.80 431.40H881.60M878.20 418.20H881.60M879.80 405.00H881.60M878.20 391.80H881.60M879.80 378.60H881.60M878.20 365.40H881.60M879.80 352.20H881.60M878.20 339.00H881.60" stroke="#2a2a2a" stroke-width="0.95" fill="none"/><g font-family="'DejaVu Sans Condensed','DejaVu Sans',sans-serif" font-size="7.90" font-weight="bold" fill="#1a1a1a"><text x="876.00" y="473.90" text-anchor="end">0.0</text><text x="876.00" y="447.50" text-anchor="end">0.2</text><text x="876.00" y="421.10" text-anchor="end">0.4</text><text x="876.00" y="394.70" text-anchor="end">0.6</text><text x="876.00" y="368.30" text-anchor="end">0.8</text><text x="876.00" y="341.90" text-anchor="end">1.0</text></g><rect x="497.40" y="287.40" width="142.80" height="46.40" fill="#fff" stroke="#1e1e1e" stroke-width="0.95"/><circle cx="508" cy="297.70" r="2.75" fill="#fff" stroke="#222" stroke-width="0.95"/><text x="516.6" y="300.50" font-family="'DejaVu Sans Condensed','DejaVu Sans',sans-serif" font-size="7.90" fill="#1a1a1a">reference point [Nm]</text><path d="M501 311.20H514.4" stroke="#222" stroke-width="1.2"/><text x="516.6" y="314.00" font-family="'DejaVu Sans Condensed','DejaVu Sans',sans-serif" font-size="7.90" fill="#1a1a1a">torquelimit [Nm]</text><rect x="500.8" y="321.50" width="13.6" height="1.72" fill="#ff0000"/><rect x="500.8" y="323.02" width="13.6" height="1.72" fill="#ffd000"/><rect x="500.8" y="324.54" width="13.6" height="1.72" fill="#40ff40"/><rect x="500.8" y="326.06" width="13.6" height="1.72" fill="#00d8ff"/><rect x="500.8" y="327.58" width="13.6" height="1.72" fill="#0000ff"/><text x="516.6" y="328.20" font-family="'DejaVu Sans Condensed','DejaVu Sans',sans-serif" font-size="7.90" fill="#1a1a1a">rescaled machine efficiency [null]</text>
</svg>
</div>
</body></html>
